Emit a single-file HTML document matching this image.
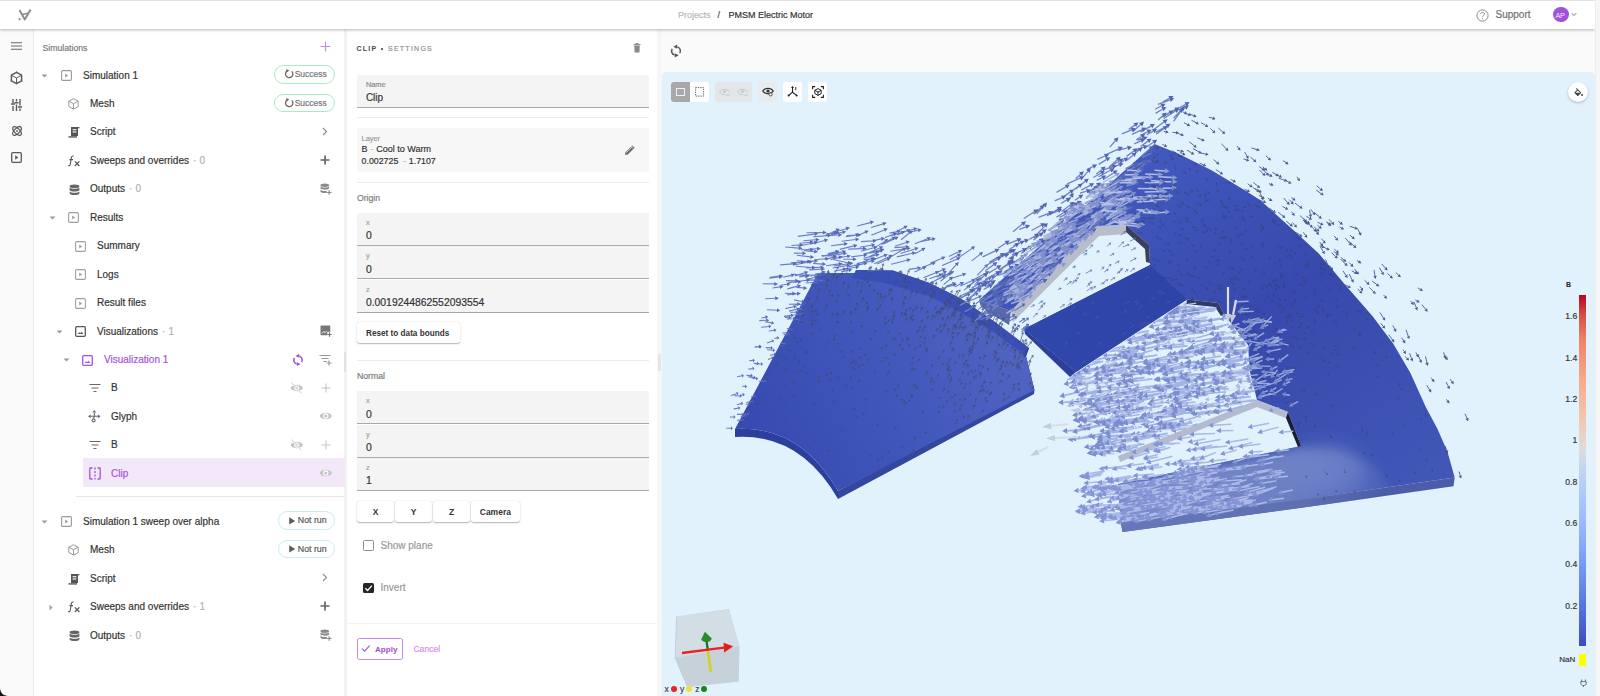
<!DOCTYPE html>
<html><head><meta charset="utf-8"><style>
html,body{margin:0;padding:0;width:1600px;height:696px;overflow:hidden;background:#fff}
body{position:relative;font-family:"Liberation Sans", sans-serif}
.t{position:absolute;white-space:nowrap;line-height:1;font-family:"Liberation Sans", sans-serif}
.n{-webkit-text-stroke:0.18px currentColor}
.b{position:absolute}
.i{position:absolute;overflow:visible}
#viz{position:absolute;left:0;top:0;width:1600px;height:696px}
</style></head><body>
<div class="b" style="left:0px;top:0px;width:1600px;height:696px;background:#fff"></div>
<div class="b" style="left:0px;top:29px;width:32.5px;height:667px;background:#fafafa;border-right:1px solid #e9e9e9"></div>
<div class="b" style="left:344px;top:29px;width:2.5px;height:667px;background:#f3f3f3"></div>
<div class="b" style="left:657px;top:29px;width:4.5px;height:667px;background:#f6f6f6"></div>
<div class="b" style="left:658.3px;top:354px;width:3.2px;height:17px;background:#e6e6e6"></div>
<div class="b" style="left:344.2px;top:352px;width:2.2px;height:20px;background:#e2e2e2"></div>
<div class="b" style="left:661px;top:29px;width:939px;height:43px;background:#fafafa"></div>
<div class="b" style="left:661.5px;top:72px;width:933.5px;height:624px;background:#e1f2fc;border-top-left-radius:4px;border-top-right-radius:4px"></div>
<svg id="viz" width="1600" height="696" viewBox="0 0 1600 696" style="position:absolute;left:0;top:0">
<defs>
<clipPath id="cv"><rect x="661.5" y="72" width="933.5" height="624"/></clipPath>
<linearGradient id="gL" x1="735" y1="430" x2="1030" y2="290" gradientUnits="userSpaceOnUse"><stop offset="0" stop-color="#3549b0"/><stop offset="0.55" stop-color="#4459bc"/><stop offset="1" stop-color="#5367c4"/></linearGradient>
<linearGradient id="gR" x1="1150" y1="150" x2="1380" y2="520" gradientUnits="userSpaceOnUse"><stop offset="0" stop-color="#4259be"/><stop offset="0.45" stop-color="#3749ac"/><stop offset="1" stop-color="#4158b8"/></linearGradient>
<linearGradient id="gT" x1="1030" y1="370" x2="1200" y2="280" gradientUnits="userSpaceOnUse"><stop offset="0" stop-color="#3047ab"/><stop offset="1" stop-color="#2e43a6"/></linearGradient>
<linearGradient id="gB" x1="1121" y1="0" x2="1390" y2="0" gradientUnits="userSpaceOnUse"><stop offset="0" stop-color="#7a8dca"/><stop offset="0.6" stop-color="#6c81c4"/><stop offset="1" stop-color="#6c81c4" stop-opacity="0.2"/></linearGradient><linearGradient id="gBs" x1="1121" y1="0" x2="1390" y2="0" gradientUnits="userSpaceOnUse"><stop offset="0" stop-color="#6678b8"/><stop offset="0.65" stop-color="#5e70b2"/><stop offset="1" stop-color="#5e70b2" stop-opacity="0"/></linearGradient>
<filter id="bl" x="-50%" y="-50%" width="200%" height="200%"><feGaussianBlur stdDeviation="10"/></filter>
<filter id="bl2" x="-20%" y="-50%" width="140%" height="200%"><feGaussianBlur stdDeviation="4"/></filter>
</defs>
<g clip-path="url(#cv)">
<path d="M735,429 Q800,425 838,491 L838,499 Q800,433 735,437Z" fill="#2c3f9c"/>
<path d="M838,491 L1034,386 L1034,394 L838,499Z" fill="#33479f"/>
<path d="M1026,356 L1034.5,390 L1034,394 L1026,362Z" fill="#2f43a0"/>
<path d="M818,273 L855,273 L856,270 L893,270.5 L929,282.7 L960,298 L995,322 L1029,348 L1026,356 L1034.5,390 L838,491 Q800,425 735,429Z" fill="url(#gL)"/>
<path d="M856,270 L893,270.5 L929,282.7 L960,298 L995,322 L1029,348 L1026,356 L995,333 L960,312 L929,296 L885,283 L852,278Z" fill="#3a4fb6"/>
<path d="M1029,348 L1026,356 L1023,358 L1026,350Z" fill="#2f43a0"/>
<path d="M1454.7,477.6 L1453.5,486.2 L1300,508 L1122.5,532 L1121,523.7 L1300,500Z" fill="#4b5ca8"/>
<path d="M979,300 L1011,311 L1009,325 L981,307Z" fill="#5a6aa8"/>
<path d="M1024,329 L1076,372 L1070,377 L1025,334Z" fill="#2d3f9a"/>
<polygon points="1154.5,144.0 1177.5,153.3 1212.0,170.6 1246.4,191.3 1260.0,200.0 1293.0,229.7 1319.0,253.8 1346.6,286.6 1372.4,315.9 1393.1,343.4 1410.3,372.8 1425.9,407.2 1437.4,428.7 1447.5,451.7 1454.7,477.6 1300.0,500.0 1121.0,523.7 1121.0,523.7 1118.0,484.0 1301.0,446.0 1288.0,412.0 1257.0,400.0 1250.0,372.0 1248.0,345.0 1224.0,314.0 1218.0,303.0 1187.0,299.5 1076.0,372.0 1024.0,329.0 1150.0,265.0 1149.0,245.0 1126.0,225.0 1096.0,226.0 1011.0,311.0 979.0,300.0" fill="url(#gR)"/>
<polygon points="1024,329 1150,265 1187,299.5 1076,372" fill="url(#gT)"/>
<clipPath id="face"><polygon points="1154.5,144.0 1177.5,153.3 1212.0,170.6 1246.4,191.3 1260.0,200.0 1293.0,229.7 1319.0,253.8 1346.6,286.6 1372.4,315.9 1393.1,343.4 1410.3,372.8 1425.9,407.2 1437.4,428.7 1447.5,451.7 1454.7,477.6 1300.0,500.0 1121.0,523.7 1121.0,523.7 1118.0,484.0 1301.0,446.0 1288.0,412.0 1257.0,400.0 1250.0,372.0 1248.0,345.0 1224.0,314.0 1218.0,303.0 1187.0,299.5 1076.0,372.0 1024.0,329.0 1150.0,265.0 1149.0,245.0 1126.0,225.0 1096.0,226.0 1011.0,311.0 979.0,300.0"/></clipPath>
<g clip-path="url(#face)"><polygon points="1110,486 1301,448 1340,450 1380,470 1390,500 1121,526" fill="url(#gB)" filter="url(#bl2)"/><ellipse cx="1325" cy="470" rx="40" ry="24" fill="#7a8dcd" opacity="0.5" filter="url(#bl)"/></g>
<path d="M1121,523.7 L1380,489 L1380,497 L1122.5,532Z" fill="url(#gBs)"/>
<path d="M1011,311 L1096,226 L1126,225 L1126,234 L1099,236 L1013,322Z" fill="#b8bccb"/>
<path d="M1126,225 L1149,245 L1150,263 L1146,262 L1145,249 L1126,232Z" fill="#3a3f5c"/>
<path d="M1187,299.5 L1218,303 L1224,314 L1221,316 L1215,307 L1186,304Z" fill="#2f3a66"/>
<path d="M1118,456 L1257,400 L1288,412 L1288,419 L1257,407 L1120,462Z" fill="#b4bbd0"/>
<path d="M1288,412 L1301,446 L1298,447 L1286,418Z" fill="#1a1f33"/>
<g opacity="0.95"><path d="M821.4 255.6L832.6 255.9M985.5 286.6L991.5 283.0M890.2 236.0L901.4 232.6M945.9 286.2L952.6 284.0M768.7 331.0L774.1 330.3M1012.0 327.7L1014.5 325.1M863.7 259.5L872.8 258.9M798.0 309.2L802.9 309.3M987.2 284.1L997.2 274.5M793.2 274.0L805.4 275.9M753.8 363.4L757.0 363.6M826.4 233.7L835.6 232.8M729.8 417.0L733.6 417.0M870.5 241.2L881.3 238.9M767.0 343.1L772.3 341.1M935.7 280.2L942.7 276.1M961.2 295.5L971.3 291.1M949.1 272.6L956.2 264.7M807.8 279.8L822.1 280.6M833.9 271.2L843.1 269.4M868.8 261.8L884.3 255.6M890.4 251.2L907.0 248.6M1008.6 318.7L1012.9 315.8M811.9 275.6L821.2 274.2M754.6 346.9L758.9 346.6M1002.1 320.8L1007.8 318.2M759.3 320.6L766.4 320.3M1014.4 310.8L1022.7 305.2M826.1 265.7L838.9 263.9M857.2 226.0L870.3 222.6M734.2 395.7L739.9 396.0M973.4 279.7L986.1 273.0M742.5 414.4L748.3 413.7M804.2 250.8L814.3 251.6M955.2 286.7L960.6 283.8M891.2 264.2L907.1 260.3M978.2 309.7L983.0 305.5M828.7 234.1L836.4 230.4M949.5 279.0L962.7 274.7M796.4 287.4L803.5 287.9M783.7 334.6L788.2 334.4M815.4 273.9L827.3 273.4M934.9 273.3L942.5 270.1M742.3 386.3L745.1 386.4M1021.6 332.2L1025.8 327.6M1019.2 322.2L1023.0 319.6M900.5 253.6L915.1 248.9M871.2 227.5L883.1 223.9M765.2 298.7L775.2 298.3M998.8 286.6L1006.0 281.2M806.5 232.8L822.9 232.6M798.5 281.3L806.6 280.2M761.1 327.3L768.8 326.5M843.1 259.3L852.9 259.3M825.8 235.8L838.3 235.0M788.3 282.4L797.9 281.9M798.3 246.3L814.4 242.7M841.1 271.9L848.6 270.3M874.2 263.8L889.1 256.7M766.9 309.7L777.0 310.2M1008.0 295.4L1012.9 293.1M997.9 297.6L1006.6 290.1M797.9 236.4L814.6 234.1M803.3 240.8L815.7 239.7M793.9 315.0L802.5 313.8M783.2 277.2L791.2 275.4M788.8 304.2L797.2 304.1M922.1 267.4L932.3 263.6M930.2 263.3L942.1 258.3M918.2 242.3L932.1 239.2M833.7 266.0L849.6 263.5M863.5 258.2L876.0 255.1M749.3 360.7L752.9 360.4M1021.5 329.7L1027.3 325.4M790.2 312.2L795.6 312.2M839.8 249.4L853.8 245.9M733.7 408.9L738.4 408.1M862.7 262.0L871.1 259.1M761.4 318.0L765.5 317.3M786.0 280.6L795.2 280.7M736.8 404.8L741.3 403.6M767.9 359.4L772.0 358.1M831.0 245.7L844.1 244.1M796.8 255.3L810.4 256.9M739.9 395.7L742.9 394.7M971.7 260.9L980.1 254.4M736.9 420.3L742.4 420.1M791.4 245.5L799.6 245.0M940.5 281.3L948.9 274.5M801.9 274.7L817.3 275.2M992.2 295.3L1001.1 290.7M827.9 253.6L835.9 251.7M785.2 247.0L798.8 248.1M810.2 244.3L824.5 240.5M784.9 293.2L792.3 293.6M809.1 269.9L821.3 269.2M755.7 363.9L761.1 364.0M822.3 256.6L835.6 252.6M949.8 259.8L957.8 255.5M795.0 264.7L809.1 261.9M769.9 277.2L779.6 276.1M855.5 265.8L864.1 263.6M785.4 308.6L793.7 306.8M864.2 253.6L875.7 252.1M914.9 243.8L927.5 238.8M888.8 257.9L903.1 249.6M881.4 244.5L892.4 238.5M831.1 234.6L842.4 232.4M842.3 269.3L855.7 267.3M943.6 284.7L950.1 279.1M923.4 277.8L935.8 272.7M793.9 253.1L802.3 253.3M865.4 254.2L879.8 247.9M786.7 319.0L793.3 318.8M965.1 295.8L973.0 290.4M889.4 233.1L897.3 231.6M1023.1 328.0L1026.8 326.0M942.8 276.0L950.9 272.7M871.3 235.3L884.3 229.9M969.9 285.2L976.6 280.4M1002.5 299.3L1006.7 294.7M748.9 401.9L752.3 401.5M780.1 264.9L793.1 263.9M769.9 355.2L774.3 354.5M800.9 249.7L810.1 249.7M942.2 265.5L957.1 258.9M764.9 321.7L771.6 322.9M914.9 253.8L922.2 249.7M824.7 259.4L833.4 257.4M786.8 328.5L791.1 329.3M945.0 287.5L953.2 285.1M806.1 267.9L820.4 267.4M970.9 296.8L975.5 294.4M989.7 281.4L999.7 272.6M834.7 258.5L847.1 256.3M759.1 381.4L764.7 381.1M740.8 416.6L745.2 415.8M790.7 262.7L800.8 262.3M751.6 377.9L756.2 378.4M807.8 249.2L817.0 248.8M767.2 349.7L773.1 350.2M960.5 297.5L967.4 295.0M885.0 237.4L893.6 234.3M930.3 283.0L942.6 276.9M810.5 276.3L822.2 272.7M959.0 257.4L972.1 248.4M857.1 235.8L865.2 232.2M948.8 256.5L958.8 251.7M858.3 263.1L871.4 261.2M784.7 317.1L788.7 317.4M883.3 244.1L895.1 238.4M851.2 256.9L863.7 255.3M877.0 263.9L887.2 259.5M963.8 290.4L968.3 286.9M782.4 333.0L787.5 332.7M848.2 249.1L863.0 248.6M774.4 338.5L777.2 337.9M830.6 259.8L839.1 257.3M972.5 289.7L984.1 284.3M796.6 308.9L802.3 308.5M796.7 260.7L807.2 261.6M894.4 247.6L905.8 246.9M845.8 236.6L855.8 235.1M780.7 285.2L787.1 284.3M861.0 251.2L873.8 247.7M908.7 269.4L917.5 268.1M841.7 241.2L855.5 239.5M755.5 347.3L759.8 346.8M813.2 236.7L827.5 235.6M762.6 283.7L774.3 283.9M936.7 277.4L943.8 272.8M960.4 285.9L972.0 280.8M908.5 232.6L918.0 230.3M748.4 376.9L753.6 377.4M976.4 284.7L988.5 278.7M848.4 266.9L857.2 264.7M795.0 275.9L804.7 272.9M765.6 347.6L771.0 347.9M832.7 268.0L846.7 265.6M859.5 247.2L871.5 245.2M833.4 259.5L847.8 262.7M895.0 246.3L906.2 242.4M780.3 343.1L785.0 343.6M799.2 276.9L806.4 276.0M813.0 263.4L822.4 264.1M977.2 275.4L985.5 266.7M1012.1 332.2L1016.6 329.3M746.6 375.4L750.8 375.6M772.5 288.0L779.8 286.9M1014.5 329.2L1018.0 326.4M748.2 369.3L752.6 368.6M799.8 243.2L810.0 242.2M787.4 288.9L797.5 286.1M929.3 278.8L939.2 275.2M778.9 345.6L782.0 345.3M827.1 255.7L842.5 251.9M868.1 257.3L880.1 251.3M902.9 231.7L913.8 229.2M805.7 283.0L816.3 282.2M846.6 235.5L857.5 235.0M794.1 299.9L801.8 301.5M814.8 259.7L825.4 258.8M901.1 239.8L909.7 232.8M806.7 279.4L814.6 277.5M789.0 311.1L796.8 309.3M746.3 402.5L750.1 401.8M787.2 294.9L797.1 293.7M825.7 234.8L833.8 232.9M726.2 428.3L730.9 428.3M1022.1 323.1L1026.9 319.4M834.2 255.3L843.5 253.6M730.9 395.5L736.7 393.7M914.5 272.0L923.2 268.0M896.8 256.9L912.2 253.3M974.6 285.0L979.6 279.5M993.3 302.4L1001.8 296.5M793.1 318.0L798.3 319.8M871.6 252.3L880.9 250.0M875.7 247.1L885.1 241.1M805.8 261.5L814.3 261.1M795.9 266.2L812.0 267.5M737.2 376.8L741.9 375.8M868.3 271.3L880.4 269.6M769.2 278.1L779.0 277.0M861.0 241.6L873.0 240.9M795.0 304.7L802.0 304.4M897.2 234.9L907.2 230.8M783.9 316.4L791.1 315.4M836.1 231.8L846.2 228.7M970.9 300.6L978.8 297.0M995.3 320.1L1000.0 314.7M745.7 404.3L748.6 404.1M806.3 280.5L817.5 279.7M985.0 279.3L991.7 276.8M892.7 233.4L904.4 227.5M966.4 287.0L976.5 280.4M1009.0 321.2L1015.0 317.8M737.0 414.4L741.7 414.4M751.2 396.9L754.7 396.2M978.7 287.5L987.8 282.5" stroke="#6578c0" stroke-width="1.1" fill="none"/><path d="M836.4 255.9L832.6 257.9L832.7 253.9ZM994.8 281.1L992.5 284.7L990.5 281.3ZM905.1 231.5L902.0 234.5L900.9 230.7ZM956.1 282.7L953.2 285.8L951.9 282.1ZM776.4 329.9L774.4 332.2L773.8 328.3ZM1016.1 323.4L1015.9 326.5L1013.0 323.7ZM876.6 258.6L872.9 260.9L872.7 256.9ZM806.1 309.5L802.8 311.3L802.9 307.3ZM999.9 271.9L998.6 276.0L995.8 273.1ZM809.2 276.5L805.1 277.9L805.8 273.9ZM758.9 363.6L756.9 365.6L757.0 361.6ZM839.4 232.4L835.8 234.8L835.4 230.8ZM735.5 417.1L733.6 419.0L733.7 415.0ZM885.0 238.1L881.7 240.9L880.9 236.9ZM774.0 340.4L773.0 343.0L771.5 339.2ZM945.9 274.2L943.7 277.9L941.6 274.4ZM974.8 289.6L972.1 292.9L970.5 289.2ZM958.8 261.9L957.7 266.1L954.8 263.4ZM825.9 280.9L822.0 282.6L822.3 278.6ZM846.8 268.6L843.5 271.3L842.7 267.4ZM887.8 254.2L885.0 257.5L883.6 253.7ZM910.7 248.0L907.3 250.6L906.7 246.6ZM1015.2 314.3L1014.0 317.5L1011.7 314.2ZM824.9 273.6L821.5 276.2L820.9 272.2ZM760.8 346.5L759.1 348.6L758.8 344.6ZM1010.2 317.1L1008.6 320.0L1006.9 316.4ZM769.1 320.2L766.5 322.3L766.3 318.3ZM1025.3 303.5L1023.8 306.9L1021.6 303.6ZM842.7 263.4L839.2 265.9L838.7 261.9ZM874.0 221.6L870.9 224.5L869.8 220.6ZM741.8 396.1L739.8 398.0L740.0 394.0ZM989.4 271.3L987.0 274.8L985.1 271.3ZM750.1 413.5L748.5 415.7L748.0 411.7ZM818.1 251.8L814.1 253.6L814.4 249.6ZM964.0 282.1L961.6 285.6L959.7 282.0ZM910.8 259.3L907.6 262.2L906.6 258.3ZM985.4 303.4L984.3 307.0L981.7 304.0ZM839.8 228.7L837.3 232.2L835.5 228.6ZM966.4 273.5L963.4 276.6L962.1 272.8ZM807.3 288.2L803.3 289.9L803.7 285.9ZM790.3 334.3L788.3 336.4L788.1 332.4ZM831.1 273.3L827.4 275.4L827.2 271.4ZM946.0 268.6L943.3 271.9L941.7 268.2ZM747.0 386.5L745.0 388.4L745.2 384.4ZM1027.3 326.0L1027.3 329.0L1024.3 326.3ZM1025.2 318.0L1024.2 321.2L1021.9 317.9ZM918.7 247.7L915.7 250.8L914.5 247.0ZM886.7 222.8L883.7 225.8L882.5 222.0ZM778.9 298.2L775.3 300.3L775.1 296.3ZM1009.1 279.0L1007.2 282.8L1004.8 279.6ZM826.7 232.5L822.9 234.6L822.9 230.6ZM810.4 279.8L806.8 282.2L806.3 278.3ZM771.2 326.3L769.0 328.5L768.6 324.6ZM856.7 259.3L852.9 261.3L852.9 257.3ZM842.1 234.7L838.4 237.0L838.1 233.0ZM801.7 281.7L798.0 283.9L797.8 279.9ZM818.1 241.9L814.8 244.7L813.9 240.8ZM852.3 269.5L849.0 272.2L848.2 268.3ZM892.6 255.0L890.0 258.5L888.3 254.8ZM780.2 310.4L776.9 312.2L777.1 308.2ZM1016.2 291.4L1013.7 294.8L1012.0 291.3ZM1009.4 287.7L1007.9 291.6L1005.3 288.6ZM818.3 233.5L814.9 236.1L814.3 232.1ZM819.5 239.4L815.9 241.7L815.5 237.7ZM805.4 313.4L802.7 315.8L802.2 311.8ZM794.9 274.6L791.7 277.3L790.8 273.4ZM800.7 304.1L797.3 306.1L797.2 302.1ZM935.8 262.4L933.0 265.5L931.6 261.8ZM945.6 256.8L942.9 260.1L941.3 256.4ZM935.8 238.4L932.5 241.2L931.7 237.3ZM853.4 262.9L849.9 265.5L849.3 261.5ZM879.7 254.2L876.5 257.1L875.6 253.2ZM754.8 360.2L753.1 362.4L752.7 358.4ZM1029.1 324.0L1028.5 327.0L1026.1 323.8ZM798.7 312.2L795.6 314.2L795.6 310.2ZM857.5 245.0L854.3 247.9L853.3 244.0ZM740.3 407.8L738.8 410.1L738.1 406.2ZM874.6 257.8L871.7 260.9L870.4 257.2ZM768.2 316.8L765.8 319.3L765.1 315.3ZM799.0 280.8L795.2 282.7L795.2 278.7ZM743.2 403.1L741.8 405.6L740.8 401.7ZM773.9 357.5L772.6 360.0L771.4 356.2ZM847.9 243.6L844.4 246.1L843.9 242.1ZM814.2 257.3L810.2 258.9L810.6 254.9ZM744.7 394.2L743.5 396.6L742.3 392.8ZM983.1 252.1L981.3 256.0L978.9 252.8ZM744.3 420.0L742.5 422.1L742.4 418.1ZM803.4 244.8L799.7 247.0L799.5 243.0ZM951.8 272.1L950.1 276.1L947.6 273.0ZM821.1 275.3L817.2 277.2L817.3 273.2ZM1004.5 288.9L1002.0 292.4L1000.2 288.9ZM839.6 250.9L836.4 253.7L835.5 249.8ZM802.6 248.5L798.6 250.1L798.9 246.2ZM828.2 239.6L825.0 242.5L824.0 238.6ZM796.1 293.7L792.2 295.5L792.4 291.6ZM825.1 268.9L821.4 271.2L821.1 267.2ZM763.0 364.0L761.1 366.0L761.1 362.0ZM839.2 251.4L836.2 254.5L835.0 250.6ZM961.1 253.8L958.7 257.3L956.8 253.8ZM812.8 261.2L809.5 263.9L808.7 260.0ZM783.3 275.7L779.8 278.1L779.3 274.2ZM867.8 262.7L864.6 265.6L863.7 261.7ZM796.9 306.1L794.1 308.8L793.3 304.9ZM879.5 251.6L876.0 254.1L875.4 250.1ZM931.1 237.4L928.3 240.7L926.8 236.9ZM906.4 247.7L904.1 251.4L902.1 247.9ZM895.8 236.7L893.4 240.3L891.5 236.8ZM846.2 231.6L842.8 234.3L842.1 230.4ZM859.4 266.7L856.0 269.2L855.4 265.3ZM953.0 276.6L951.4 280.6L948.8 277.6ZM939.3 271.3L936.5 274.6L935.0 270.9ZM806.1 253.4L802.3 255.3L802.4 251.3ZM883.3 246.4L880.6 249.7L879.0 246.1ZM796.1 318.7L793.4 320.8L793.3 316.8ZM976.1 288.2L974.1 292.0L971.9 288.7ZM901.0 230.9L897.6 233.6L896.9 229.6ZM1028.9 324.8L1027.8 327.8L1025.9 324.2ZM954.4 271.3L951.6 274.6L950.1 270.9ZM887.8 228.4L885.0 231.7L883.5 228.1ZM979.7 278.2L977.7 282.0L975.4 278.7ZM1009.1 292.0L1008.2 296.0L1005.2 293.3ZM754.2 401.3L752.5 403.5L752.1 399.5ZM796.9 263.6L793.2 265.9L792.9 261.9ZM776.2 354.2L774.6 356.5L774.0 352.5ZM813.9 249.7L810.1 251.7L810.1 247.7ZM960.6 257.4L957.9 260.7L956.3 257.1ZM774.2 323.3L771.2 324.8L771.9 320.9ZM925.5 247.8L923.2 251.4L921.2 247.9ZM837.1 256.5L833.9 259.3L832.9 255.4ZM793.5 329.8L790.8 331.3L791.5 327.4ZM956.9 284.0L953.8 287.0L952.7 283.1ZM824.2 267.2L820.5 269.4L820.3 265.4ZM978.8 292.7L976.4 296.1L974.6 292.6ZM1002.6 270.1L1001.0 274.1L998.4 271.1ZM850.9 255.7L847.5 258.3L846.8 254.4ZM766.6 381.0L764.8 383.1L764.6 379.1ZM747.0 415.5L745.5 417.8L744.8 413.9ZM804.6 262.2L800.9 264.3L800.8 260.3ZM758.1 378.7L756.0 380.4L756.4 376.4ZM820.8 248.6L817.1 250.8L816.9 246.8ZM775.0 350.3L772.9 352.2L773.2 348.2ZM970.9 293.7L968.1 296.9L966.7 293.1ZM897.1 233.0L894.3 236.2L892.9 232.4ZM946.0 275.2L943.5 278.7L941.7 275.1ZM825.8 271.6L822.8 274.6L821.6 270.8ZM975.2 246.2L973.2 250.0L970.9 246.7ZM868.7 230.7L866.0 234.1L864.4 230.4ZM962.3 250.1L959.7 253.5L958.0 249.9ZM875.1 260.7L871.7 263.2L871.1 259.2ZM791.5 317.7L788.5 319.4L788.9 315.4ZM898.5 236.8L896.0 240.2L894.2 236.6ZM867.4 254.8L863.9 257.3L863.4 253.3ZM890.7 258.0L888.0 261.3L886.4 257.7ZM971.2 284.5L969.5 288.4L967.0 285.3ZM789.7 332.6L787.6 334.7L787.4 330.7ZM866.8 248.5L863.1 250.6L862.9 246.6ZM779.1 337.5L777.6 339.9L776.8 336.0ZM842.7 256.2L839.6 259.2L838.5 255.4ZM987.5 282.7L984.9 286.1L983.2 282.5ZM805.5 308.3L802.4 310.5L802.1 306.5ZM811.0 261.9L807.1 263.6L807.4 259.6ZM909.6 246.7L905.9 248.9L905.7 244.9ZM859.6 234.6L856.1 237.1L855.5 233.1ZM790.8 283.8L787.4 286.3L786.8 282.4ZM877.4 246.7L874.3 249.7L873.2 245.8ZM921.3 267.6L917.8 270.1L917.2 266.2ZM859.3 239.0L855.8 241.5L855.3 237.5ZM761.7 346.5L760.0 348.8L759.5 344.8ZM831.3 235.3L827.7 237.6L827.4 233.6ZM778.1 284.0L774.2 285.9L774.3 281.9ZM946.9 270.7L944.9 274.4L942.7 271.1ZM975.5 279.3L972.8 282.7L971.3 279.0ZM921.7 229.4L918.5 232.2L917.5 228.3ZM755.5 377.6L753.4 379.4L753.8 375.4ZM991.9 277.0L989.4 280.5L987.6 276.9ZM860.9 263.7L857.7 266.6L856.7 262.7ZM808.3 271.7L805.3 274.8L804.1 271.0ZM772.9 348.0L770.9 349.9L771.1 345.9ZM850.5 265.0L847.1 267.6L846.4 263.7ZM875.3 244.6L871.9 247.2L871.2 243.2ZM851.5 263.5L847.4 264.6L848.2 260.7ZM909.8 241.2L906.9 244.3L905.6 240.5ZM786.9 343.8L784.8 345.6L785.3 341.6ZM810.1 275.5L806.6 277.9L806.1 274.0ZM826.2 264.3L822.2 266.1L822.5 262.1ZM988.1 263.9L987.0 268.1L984.1 265.3ZM1018.5 328.0L1017.7 330.9L1015.5 327.6ZM752.7 375.7L750.7 377.6L750.9 373.6ZM783.6 286.4L780.1 288.9L779.5 284.9ZM1019.9 324.9L1019.3 327.9L1016.8 324.8ZM754.4 368.3L752.9 370.6L752.3 366.6ZM813.7 241.8L810.2 244.1L809.8 240.2ZM801.2 285.2L798.0 288.1L797.0 284.2ZM942.8 273.9L939.9 277.1L938.5 273.3ZM783.9 345.2L782.1 347.3L781.8 343.3ZM846.2 250.9L843.0 253.8L842.0 249.9ZM883.5 249.6L881.0 253.1L879.2 249.5ZM917.5 228.3L914.2 231.1L913.3 227.2ZM820.1 281.9L816.4 284.2L816.1 280.2ZM861.3 234.8L857.6 237.0L857.4 233.0ZM805.4 302.2L801.4 303.4L802.2 299.5ZM829.2 258.5L825.6 260.8L825.3 256.8ZM912.7 230.4L911.0 234.3L908.4 231.2ZM818.3 276.7L815.0 279.5L814.1 275.6ZM799.8 308.6L797.3 311.2L796.3 307.3ZM751.9 401.5L750.4 403.8L749.7 399.9ZM800.8 293.3L797.3 295.7L796.8 291.8ZM837.5 232.1L834.2 234.9L833.3 231.0ZM732.8 428.3L730.9 430.3L730.9 426.3ZM1029.0 317.8L1028.1 321.0L1025.8 317.8ZM847.2 252.9L843.8 255.6L843.1 251.7ZM738.5 393.1L737.3 395.6L736.1 391.8ZM926.7 266.5L924.0 269.9L922.4 266.2ZM915.9 252.4L912.7 255.2L911.8 251.3ZM982.2 276.7L981.1 280.9L978.2 278.2ZM1004.7 294.6L1002.9 298.2L1000.7 294.9ZM801.0 320.7L797.7 321.7L799.0 317.9ZM884.6 249.2L881.3 252.0L880.4 248.1ZM888.3 239.1L886.2 242.8L884.0 239.4ZM818.1 260.9L814.4 263.1L814.2 259.1ZM815.8 267.8L811.9 269.5L812.2 265.5ZM743.8 375.4L742.4 377.7L741.5 373.8ZM884.2 269.1L880.7 271.6L880.1 267.6ZM782.8 276.7L779.2 279.0L778.8 275.1ZM876.8 240.6L873.1 242.9L872.8 238.9ZM805.4 304.2L802.1 306.4L801.9 302.4ZM910.7 229.4L908.0 232.7L906.5 229.0ZM794.0 315.0L791.4 317.4L790.8 313.4ZM849.9 227.6L846.8 230.7L845.6 226.8ZM982.1 295.5L979.6 298.8L978.0 295.2ZM1001.9 312.7L1001.6 316.0L998.5 313.4ZM750.5 404.0L748.7 406.1L748.5 402.1ZM821.3 279.5L817.6 281.7L817.3 277.7ZM995.3 275.4L992.4 278.6L991.0 274.9ZM907.7 225.8L905.3 229.3L903.5 225.7ZM979.7 278.3L977.6 282.0L975.4 278.7ZM1017.3 316.5L1016.0 319.6L1014.0 316.1ZM743.6 414.4L741.7 416.4L741.7 412.4ZM756.5 395.9L755.1 398.2L754.3 394.3ZM991.1 280.7L988.8 284.3L986.8 280.8Z" fill="#4f62b0"/></g>
<g opacity="0.75"><path d="M830.5 394.1L832.3 391.3M926.9 319.8L927.6 317.8M938.3 295.7L944.5 288.8M1016.4 386.6L1018.0 384.6M914.0 389.7L915.8 386.7M988.2 320.6L990.2 317.3M913.4 372.2L914.4 369.6M878.8 303.4L881.3 297.9M770.2 373.7L770.7 371.7M794.2 359.5L794.7 358.3M941.3 321.1L942.4 319.2M908.3 322.1L910.5 318.4M858.4 360.3L859.6 357.7M780.3 346.4L781.3 345.3M925.6 314.4L927.0 312.5M949.9 347.5L950.6 343.2M970.9 326.1L973.0 321.5M982.3 360.1L984.3 356.9M985.5 345.4L986.7 343.6M881.5 274.1L882.9 265.5M835.5 317.6L836.8 315.5M783.6 386.7L783.9 385.3M1018.0 370.7L1019.1 368.5M1021.9 350.3L1025.9 344.4M1006.7 380.3L1008.7 376.6M911.0 397.7L911.8 395.8M958.8 411.9L959.9 409.7M972.7 347.1L973.7 343.6M956.1 308.1L959.0 303.7M968.2 339.9L970.6 335.5M960.4 331.2L962.3 328.6M814.5 324.2L815.5 321.2M836.4 285.0L837.0 278.1M918.4 331.2L919.8 328.2M981.9 330.7L984.7 324.9M986.2 342.2L988.8 337.5M901.2 448.5L901.9 447.1M923.5 345.5L924.4 343.1M895.9 277.2L899.5 272.4M878.1 300.0L880.6 295.1M947.2 370.8L948.0 369.2M923.7 328.7L924.8 327.1M826.6 280.3L828.2 272.2M871.3 293.0L873.6 290.5M797.7 326.1L800.4 322.6M1028.7 366.8L1030.0 362.2M970.4 372.7L971.1 371.8M946.7 367.4L947.6 364.6M914.4 284.3L917.5 279.4M924.9 434.0L925.4 432.9M813.8 304.3L816.5 298.4M947.6 311.7L948.9 308.4M898.4 334.7L899.1 333.9M797.0 365.1L798.7 361.8M898.6 348.2L899.8 345.1M1017.4 367.9L1017.7 364.5M825.0 347.3L827.1 344.3M809.4 327.2L811.2 324.2M1014.2 346.0L1017.4 342.7M935.9 331.7L936.9 329.9M971.0 326.0L972.4 322.3M973.4 333.4L975.9 327.9M802.1 313.3L803.3 309.3M876.3 462.3L877.8 459.8M985.5 322.3L987.7 316.5M804.1 367.6L804.6 366.5M901.2 286.3L904.5 279.0M892.2 323.4L893.0 319.3M870.7 340.6L871.1 339.3M1029.8 376.7L1030.4 374.5M930.6 384.0L930.9 381.5M855.4 420.2L857.1 417.0M948.2 300.9L951.1 297.9M1017.1 360.4L1022.1 355.1M995.7 363.1L998.2 359.7M888.6 296.2L889.5 290.7M811.6 322.7L811.8 321.2M970.3 321.9L973.4 314.4M801.7 317.9L803.1 315.4M861.0 287.7L864.6 280.3M865.9 309.2L867.5 307.4M911.3 314.2L913.1 310.7M952.3 330.6L954.8 326.5M891.4 341.1L892.4 339.0M837.3 378.9L838.0 378.0M949.7 321.1L951.7 315.4M972.0 321.5L973.1 318.0M792.7 398.9L793.4 396.3M894.7 430.2L895.4 428.6M972.9 338.8L974.5 333.7M997.7 372.3L999.5 369.7M965.8 366.9L967.0 365.2M964.1 364.4L966.0 361.2M915.9 334.2L917.7 331.2M954.8 299.1L959.1 291.6M836.5 325.2L837.6 322.6M990.9 341.3L992.4 338.1M1020.1 342.6L1022.5 334.0M840.7 353.9L841.7 352.0M978.5 326.3L982.2 322.9M937.7 414.4L939.0 412.5M837.0 325.5L837.6 323.2M971.3 349.1L972.2 347.1M973.2 310.9L974.0 304.0M902.7 302.2L905.1 297.7M888.7 373.8L889.0 372.8M867.6 289.5L869.3 286.4M829.6 381.8L830.0 379.5M855.3 365.9L855.9 362.9M1018.0 391.6L1018.6 389.9M926.4 375.7L927.2 372.6M783.0 422.6L783.8 421.4M992.2 355.6L994.8 352.0M865.1 356.7L865.5 355.1M946.4 309.1L949.8 303.3M903.0 301.9L905.2 298.5M919.3 340.3L920.5 337.1M961.7 303.4L966.9 298.6M1006.7 399.8L1008.2 397.1M953.7 413.5L954.7 411.4M951.2 317.8L954.0 311.3M1031.0 389.8L1032.2 388.1M925.7 353.5L926.8 351.4M958.0 321.7L960.5 315.6M856.3 307.5L857.0 304.5M900.7 315.9L901.5 314.2M998.7 384.2L1000.5 381.6M958.5 330.1L959.9 326.8M921.7 414.6L922.5 412.8M915.9 310.4L916.4 308.1M863.4 307.1L866.4 303.5M781.9 408.4L783.4 406.5M949.7 383.1L950.6 380.4M854.3 314.2L855.4 310.1M885.4 378.2L886.5 375.1M979.0 374.9L979.5 372.6M949.7 295.9L951.3 292.4M904.5 313.8L905.9 310.6M911.1 319.6L911.8 316.6M933.9 311.4L935.5 308.1M968.9 384.6L970.1 382.9M954.6 316.2L956.9 309.9M942.7 330.7L944.8 325.7M975.9 321.1L977.6 317.7M881.1 351.9L881.6 348.5M866.6 363.4L868.2 360.1M1001.8 364.7L1002.7 362.7M1005.4 367.4L1006.5 363.3M851.8 354.1L852.2 352.3M938.5 408.2L939.2 407.4M991.5 324.2L994.8 316.4M977.7 329.9L980.1 325.2M997.8 349.4L998.8 345.7M894.3 342.7L895.3 339.5M843.1 359.1L843.7 357.0M876.5 314.1L877.3 310.2M942.8 327.5L944.1 325.6M968.6 396.5L969.9 394.7M981.2 414.4L982.6 411.1M982.9 385.3L984.3 382.1M1004.1 345.2L1005.4 342.2M921.9 297.1L924.0 293.2M1012.1 392.3L1013.7 389.3M841.9 316.7L843.4 312.8M974.2 326.5L975.4 320.5M858.4 382.9L858.9 381.4M994.5 356.1L995.9 353.7M885.9 455.0L888.0 452.2M952.7 320.8L954.2 316.4M810.7 289.5L811.9 285.5M877.6 309.8L880.0 306.1M875.8 299.4L877.5 294.0M953.1 315.6L953.9 313.0M951.9 351.8L952.4 349.5M885.1 362.0L886.2 358.5M849.7 366.5L851.2 363.1M1009.2 337.3L1013.0 328.8M847.5 298.4L848.3 296.2M793.2 384.6L794.1 383.2M1017.9 360.5L1019.8 353.7M818.2 380.1L819.0 377.6M883.5 321.0L884.9 318.3M919.6 313.3L921.5 308.8M986.3 323.6L989.0 316.4M998.4 329.5L1000.0 324.0M905.1 317.2L905.9 315.6M886.0 324.8L888.5 321.1M978.3 395.5L979.7 392.2M846.1 293.0L848.1 287.3M968.0 368.7L968.1 365.6M977.3 325.2L979.1 322.0M972.5 409.8L973.9 406.4M870.5 274.4L870.9 268.2M910.6 322.9L912.6 320.5M795.7 344.5L796.7 342.6M910.5 398.5L911.4 396.6M813.4 407.4L814.0 405.1M974.7 402.4L975.7 399.9M806.3 354.6L807.3 352.1M980.8 318.3L982.7 310.1M989.2 395.5L989.8 394.3M964.5 338.0L966.3 335.7M857.6 369.6L858.7 366.7M850.3 335.1L852.0 332.4M799.1 342.2L800.5 340.3M811.8 327.5L812.5 324.8M965.2 305.0L968.7 300.2M932.7 338.3L933.6 336.4M924.6 351.1L926.2 349.0M903.6 316.1L904.7 314.4M896.0 388.0L897.8 385.7M931.0 320.0L933.0 316.7M922.3 332.1L923.1 330.4M950.3 337.0L952.5 333.5M800.3 374.5L801.6 371.7M935.3 315.9L938.5 312.2M953.3 314.1L955.0 309.9M953.5 397.9L955.0 395.2M833.9 341.3L834.0 340.2M985.3 338.6L989.3 332.8M816.6 317.3L817.3 315.4M944.8 323.0L947.6 318.0M817.1 296.5L819.2 290.3M951.6 340.5L952.8 337.9M1014.6 355.3L1015.1 350.9M898.3 276.1L900.2 272.5M1011.7 367.2L1012.7 365.4M909.6 299.4L911.8 292.5M882.1 302.5L884.9 297.1M860.8 329.2L861.7 326.7M833.4 339.6L834.8 336.3M985.5 323.7L988.8 316.9M973.6 374.1L975.2 371.0M949.2 371.8L950.0 370.9M919.7 292.5L922.3 284.6M953.7 297.3L956.5 292.3M906.6 342.1L908.0 339.4M833.1 404.1L833.8 402.1M902.9 308.2L903.5 304.1M969.3 304.9L970.4 298.4M962.5 359.5L963.2 355.8M1027.9 386.3L1029.7 383.8M892.7 316.1L893.7 312.9M864.7 285.7L867.4 282.4M981.4 391.8L982.2 390.2M930.8 295.5L933.1 292.1M910.4 365.2L911.7 363.8M824.0 292.7L826.7 286.3M939.2 332.7L940.4 331.7M918.4 347.7L919.8 346.0M830.6 300.0L832.1 296.1M942.6 352.4L943.3 351.2M901.3 350.4L902.5 349.0M958.9 358.3L959.3 356.4M905.7 341.5L907.0 338.2M986.0 393.7L986.9 392.0M801.4 319.4L802.8 316.4M873.9 333.6L875.1 331.5M979.4 378.2L980.9 374.7M911.5 452.5L913.2 450.7M997.7 327.1L1003.2 319.4M1012.5 387.9L1013.8 385.3M866.6 311.3L867.0 309.8M914.4 350.9L915.1 348.8M943.0 294.2L942.7 288.7M829.6 375.3L830.8 373.6M962.1 374.7L962.8 372.7M901.8 342.9L902.3 340.3M956.2 325.1L960.0 319.7M813.8 442.5L814.5 440.9M968.4 356.6L969.6 352.2M955.4 424.9L955.9 424.0M923.9 339.5L924.6 338.5M837.0 347.4L838.2 343.9M983.3 384.3L984.2 382.6M959.8 320.4L961.3 316.4M964.8 344.7L966.8 340.3M828.2 297.7L829.2 291.8M954.0 406.3L955.0 403.8M887.5 283.5L888.2 277.4M970.2 351.3L971.4 350.0M932.1 299.4L934.3 294.2M849.5 315.8L850.6 313.3M859.1 349.9L859.7 349.0M885.1 394.3L886.0 391.5M965.4 308.4L968.3 304.7M805.0 354.7L805.6 353.5M807.4 302.9L808.6 299.3M912.2 387.3L913.7 385.2M962.6 318.2L965.4 313.9M947.6 378.4L948.9 374.9M1016.7 369.1L1017.0 366.9M766.5 377.2L767.5 375.5M895.0 398.9L896.8 396.3M1010.0 351.8L1012.1 348.2M1001.5 349.2L1003.3 344.6M1002.0 375.9L1002.7 374.7M872.8 374.1L874.5 371.7M851.4 369.7L851.9 368.5M1001.2 369.9L1001.3 366.7M1026.1 348.7L1030.3 343.2M914.4 296.6L916.0 293.6M903.4 404.7L904.2 401.6M889.9 295.6L891.5 290.2M876.8 427.7L877.5 425.2M884.6 348.9L886.0 345.9M938.9 399.6L939.4 398.6M930.4 380.8L931.6 379.0M985.2 403.2L986.9 401.3M834.4 303.4L835.9 301.7M947.6 372.0L947.9 370.4M966.2 337.9L968.3 334.6M850.0 392.3L851.5 388.8M986.5 326.6L988.9 321.9M884.0 327.5L885.4 323.7M817.8 383.9L818.4 382.0M1004.1 350.7L1007.2 345.8M956.3 305.2L959.9 297.0M1012.7 336.7L1014.6 331.5M808.6 310.8L811.3 307.2M931.7 367.7L932.0 365.7M926.4 290.0L932.2 283.9M810.6 316.8L812.3 312.0M862.2 302.6L863.0 299.3M983.8 316.6L985.0 312.6M908.6 347.0L909.2 345.6M955.2 306.4L957.1 302.7M932.7 385.6L934.3 382.3M881.4 459.7L882.2 458.3M856.6 287.1L857.7 283.0M945.1 308.8L946.9 301.1M963.7 402.8L964.6 399.4M963.0 390.2L964.2 388.0M852.4 363.0L853.5 361.0M989.9 384.6L990.5 383.2M804.8 402.3L806.3 400.3M929.0 290.1L931.3 283.4M783.3 436.3L784.2 435.3M842.1 289.1L843.6 283.7M1003.0 395.1L1003.9 393.9M831.1 319.0L832.4 315.0M951.1 399.3L951.7 397.6M812.7 316.0L815.3 311.9M955.2 329.8L955.9 328.0M921.5 286.5L925.5 279.9M796.6 373.6L797.2 372.0M995.0 327.2L997.8 318.3M938.2 312.8L940.3 309.5M836.8 298.7L838.0 295.9M807.1 375.2L807.3 374.2M967.6 418.9L968.4 416.3M819.5 331.1L820.1 329.8M826.0 285.2L827.8 281.0M928.6 302.7L931.2 297.1M787.6 351.9L788.3 350.6M930.7 391.4L931.6 390.0M778.4 401.0L780.5 398.6M959.4 310.1L960.6 307.0M900.1 288.4L904.4 282.5M835.8 279.8L841.3 274.4M945.6 304.6L948.2 301.0M939.8 314.0L942.4 309.2M968.9 355.9L971.1 353.2M908.9 402.2L909.4 401.1M895.0 286.8L895.8 283.6M837.6 316.6L837.9 314.3M862.8 415.5L863.4 414.2M937.7 359.8L938.7 357.7M946.8 403.7L947.2 401.7M904.0 290.4L908.1 283.2M840.5 433.3L842.2 430.0M869.1 459.2L870.3 456.3M940.9 310.0L944.6 304.2M948.0 369.4L949.0 367.0M828.4 453.2L829.1 451.1M943.2 391.5L943.9 389.4M775.5 366.4L776.0 364.9M880.8 363.4L881.5 361.6M973.0 379.0L973.7 377.5M1013.8 360.0L1014.8 357.2M960.6 385.0L961.2 383.6M975.5 345.0L977.8 339.7M958.4 401.9L959.8 400.2M1008.1 366.3L1010.0 363.3M891.7 320.7L893.9 316.5M986.2 330.0L988.4 325.3M910.8 371.7L912.0 369.2M959.7 407.8L961.3 405.5M982.1 368.9L982.5 367.0M942.3 408.8L943.1 407.2M1027.8 363.2L1032.2 356.9M755.2 406.9L756.9 404.4M973.0 341.5L974.6 337.2M1025.1 351.0L1023.2 341.7M894.2 356.0L894.5 355.1M936.5 378.1L937.8 375.1M975.8 379.5L976.2 376.5M956.6 336.8L957.9 334.1M849.4 380.6L850.6 378.1M907.3 311.2L909.5 309.0M1003.2 402.0L1004.0 399.5M987.9 339.0L988.7 336.4M783.0 360.8L784.9 357.9M985.6 336.9L988.7 331.6M1023.7 346.5L1025.6 340.9M971.5 311.9L974.0 307.4M938.0 319.3L940.3 313.7M853.0 371.3L854.2 369.4M825.3 378.0L826.4 374.9M950.8 379.3L951.1 378.1M996.4 341.4L998.2 334.5M978.3 369.3L979.5 365.8M874.1 273.2L875.9 269.5M780.2 358.9L781.3 356.9M848.7 326.8L850.7 322.9M941.9 366.2L943.0 364.5M1013.7 353.5L1014.8 350.7M954.8 364.9L955.2 362.8M1002.1 342.1L1004.1 335.8M934.6 291.3L936.1 284.1M898.4 280.2L901.1 273.5M784.9 371.1L785.7 368.9M920.1 324.2L921.6 321.4M888.7 365.3L889.2 364.2M987.2 370.8L987.7 369.5M794.0 340.5L794.8 338.8M904.9 280.1L908.4 271.8M901.3 402.0L901.9 400.2M943.1 310.4L945.3 306.5M949.0 362.2L950.1 359.3M969.2 352.2L969.6 349.4M891.0 302.5L891.9 299.3M833.7 275.2L837.3 268.6M963.4 331.8L965.0 327.6M912.6 360.2L913.0 358.1M978.8 359.8L979.6 358.7M863.4 402.8L865.3 399.9M959.6 327.1L961.4 323.3M947.2 333.3L948.2 330.3M959.0 381.8L959.8 380.0M905.8 321.6L906.3 319.7M830.6 283.7L833.6 276.0M824.1 311.7L826.1 306.7M868.0 277.3L869.3 269.3M967.7 376.3L968.2 374.2M852.0 411.4L853.8 409.2M940.3 295.4L943.6 289.7M904.7 406.9L905.7 403.7M963.5 386.7L965.5 384.6M983.8 401.6L985.1 398.7M858.0 295.8L860.4 291.8M976.8 331.2L978.5 324.7M981.4 388.2L981.7 386.7M1018.8 367.1L1021.2 361.9M955.8 421.8L956.6 420.9M887.0 334.6L888.4 332.0M952.1 330.9L953.7 325.9M939.5 328.1L940.3 326.5M928.4 294.8L930.9 289.9M992.3 360.5L994.6 358.1M902.3 293.2L905.9 287.5M913.4 441.4L914.6 438.3M891.8 324.3L892.1 322.6M952.8 351.6L953.3 350.1M935.3 317.8L936.8 312.9M962.7 420.4L963.8 416.9M845.8 389.8L846.3 386.5M917.1 362.5L918.9 360.0M963.0 366.8L964.3 364.2M861.3 366.8L862.2 365.3M995.8 333.3L998.2 330.1M894.8 391.8L894.9 390.1M996.2 363.1L996.8 361.3M947.4 393.8L948.0 392.3M916.2 390.0L916.9 388.8M982.9 391.8L983.6 390.6M846.4 274.6L847.1 269.5M990.1 395.3L991.0 393.0M999.2 333.4L1001.9 325.0M811.5 336.8L812.6 334.0" stroke="#46527f" stroke-width="0.9" fill="none"/><path d="M833.3 389.8L833.5 392.1L831.0 390.5ZM928.5 315.4L929.0 318.3L926.2 317.3ZM946.2 286.9L945.6 289.8L943.4 287.8ZM1019.6 382.8L1019.2 385.6L1016.9 383.6ZM916.7 385.1L917.1 387.5L914.5 386.0ZM991.5 315.1L991.5 318.1L988.9 316.6ZM915.0 367.9L915.8 370.1L912.9 369.1ZM882.4 295.5L882.7 298.5L880.0 297.3ZM771.1 369.9L772.1 372.0L769.2 371.4ZM795.4 356.6L796.1 358.9L793.3 357.7ZM943.7 317.0L943.7 320.0L941.1 318.5ZM911.8 316.4L911.8 319.2L909.2 317.7ZM860.4 356.0L861.0 358.3L858.3 357.0ZM782.5 343.9L782.4 346.3L780.2 344.3ZM928.5 310.3L928.2 313.3L925.7 311.6ZM951.0 341.1L952.1 343.5L949.2 342.9ZM974.2 319.2L974.4 322.2L971.7 320.9ZM985.6 354.8L985.6 357.7L983.0 356.1ZM988.1 341.5L987.9 344.5L985.4 342.8ZM883.3 262.9L884.4 265.8L881.4 265.3ZM838.2 313.4L838.1 316.3L835.6 314.7ZM784.3 383.5L785.4 385.7L782.5 385.0ZM1020.2 366.1L1020.4 369.1L1017.7 367.8ZM1027.4 342.3L1027.2 345.3L1024.7 343.6ZM1009.9 374.5L1010.1 377.3L1007.4 375.9ZM912.6 394.1L913.2 396.4L910.5 395.2ZM960.7 408.1L961.3 410.3L958.6 409.0ZM974.5 341.1L975.2 344.0L972.3 343.2ZM960.5 301.5L960.3 304.5L957.8 302.9ZM971.8 333.2L971.9 336.2L969.2 334.8ZM963.8 326.5L963.5 329.5L961.1 327.7ZM816.3 319.0L817.0 321.7L814.1 320.7ZM837.3 275.5L838.5 278.3L835.5 278.0ZM920.7 326.1L921.1 328.8L918.4 327.5ZM985.8 322.6L986.0 325.6L983.3 324.2ZM990.1 335.2L990.1 338.2L987.5 336.8ZM902.8 445.5L903.3 447.8L900.6 446.4ZM925.1 341.4L925.8 343.6L923.0 342.6ZM901.1 270.3L900.7 273.3L898.3 271.5ZM881.8 292.8L881.9 295.8L879.3 294.5ZM948.9 367.6L949.3 369.9L946.7 368.5ZM926.2 325.1L926.1 328.0L923.6 326.3ZM828.7 269.7L829.7 272.5L826.7 271.9ZM875.3 288.6L874.7 291.5L872.5 289.5ZM801.8 320.9L801.6 323.6L799.3 321.7ZM1030.7 359.7L1031.4 362.6L1028.6 361.8ZM972.1 370.3L972.3 372.6L969.9 370.9ZM948.1 362.8L949.0 365.0L946.2 364.1ZM918.9 277.3L918.8 280.2L916.3 278.6ZM926.1 431.2L926.7 433.5L924.0 432.3ZM817.6 296.1L817.9 299.1L815.2 297.8ZM949.8 306.0L950.3 308.9L947.5 307.9ZM900.3 332.5L900.2 334.9L898.0 332.9ZM799.4 360.1L800.0 362.4L797.3 361.1ZM900.5 343.5L901.2 345.7L898.5 344.6ZM1017.9 362.0L1019.1 364.7L1016.2 364.4ZM828.1 342.8L828.3 345.1L825.9 343.4ZM812.3 322.4L812.5 325.0L809.9 323.5ZM1019.2 340.8L1018.5 343.7L1016.3 341.6ZM938.1 327.7L938.2 330.6L935.6 329.2ZM973.2 319.8L973.8 322.8L970.9 321.8ZM977.0 325.5L977.3 328.5L974.5 327.3ZM804.1 306.8L804.8 309.8L801.9 308.8ZM878.7 458.3L879.1 460.6L876.5 459.1ZM988.6 314.0L989.1 317.0L986.2 316.0ZM805.5 364.9L806.0 367.2L803.3 365.9ZM905.6 276.6L905.8 279.6L903.1 278.4ZM893.5 317.1L894.5 319.6L891.6 319.0ZM871.7 337.6L872.5 339.9L869.7 338.8ZM1031.2 372.0L1031.8 375.0L1029.0 374.1ZM931.2 379.7L932.4 381.7L929.4 381.3ZM858.0 415.4L858.4 417.7L855.8 416.3ZM952.9 296.0L952.2 298.9L950.0 296.8ZM1023.9 353.2L1023.2 356.1L1021.0 354.0ZM999.7 357.6L999.4 360.6L996.9 358.9ZM890.0 288.1L891.0 290.9L888.1 290.4ZM812.2 318.9L813.3 321.4L810.3 320.9ZM974.4 312.0L974.8 315.0L972.0 313.8ZM804.4 313.2L804.4 316.1L801.8 314.6ZM865.8 278.0L866.0 281.0L863.3 279.7ZM869.2 305.4L868.6 308.3L866.4 306.4ZM914.3 308.4L914.5 311.4L911.8 310.0ZM956.2 324.3L956.1 327.3L953.5 325.7ZM893.2 337.3L893.8 339.6L891.1 338.4ZM839.1 376.6L839.2 378.9L836.8 377.1ZM952.6 312.9L953.2 315.9L950.3 314.9ZM973.9 315.5L974.6 318.4L971.7 317.5ZM793.8 394.5L794.8 396.6L791.9 395.9ZM896.1 426.9L896.8 429.2L894.0 428.0ZM975.3 331.3L976.0 334.2L973.1 333.3ZM1000.9 367.7L1000.8 370.5L998.3 368.8ZM968.0 363.7L968.2 366.0L965.7 364.4ZM966.9 359.6L967.3 362.0L964.7 360.4ZM918.7 329.4L919.0 331.9L916.4 330.4ZM960.4 289.3L960.4 292.3L957.8 290.8ZM838.5 320.5L839.0 323.2L836.2 322.0ZM993.5 335.8L993.8 338.8L991.0 337.5ZM1023.2 331.5L1024.0 334.5L1021.1 333.6ZM842.6 350.4L843.0 352.7L840.4 351.3ZM984.1 321.2L983.2 324.0L981.2 321.8ZM940.0 411.0L940.2 413.3L937.8 411.7ZM838.2 321.1L839.0 323.6L836.1 322.8ZM973.3 344.8L973.6 347.7L970.8 346.5ZM974.2 301.4L975.4 304.2L972.5 303.8ZM906.4 295.4L906.5 298.4L903.8 297.0ZM889.4 371.0L890.4 373.2L887.5 372.4ZM870.6 284.2L870.6 287.2L868.0 285.7ZM830.3 377.7L831.5 379.7L828.5 379.2ZM856.2 361.1L857.3 363.2L854.4 362.6ZM1019.4 387.8L1020.0 390.4L1017.2 389.4ZM927.7 370.8L928.7 372.9L925.8 372.2ZM784.9 419.9L785.1 422.2L782.6 420.5ZM996.4 350.0L996.0 352.9L993.6 351.1ZM865.9 353.3L866.9 355.4L864.0 354.8ZM951.2 301.0L951.1 304.0L948.6 302.5ZM906.6 296.3L906.4 299.3L903.9 297.7ZM921.3 335.4L921.9 337.7L919.1 336.6ZM968.8 296.8L967.9 299.7L965.9 297.5ZM1009.1 395.5L1009.6 397.8L1006.9 396.3ZM955.4 409.7L956.0 412.0L953.3 410.8ZM955.0 308.9L955.3 311.9L952.6 310.7ZM1033.6 386.0L1033.4 388.9L1030.9 387.2ZM927.6 349.8L928.1 352.1L925.4 350.8ZM961.5 313.2L961.9 316.2L959.2 315.1ZM857.6 302.0L858.5 304.9L855.6 304.2ZM902.7 311.9L902.9 314.9L900.2 313.5ZM1001.7 380.0L1001.8 382.5L999.3 380.7ZM960.9 324.4L961.3 327.4L958.5 326.2ZM923.2 411.1L923.8 413.3L921.1 412.2ZM916.9 305.5L917.9 308.4L914.9 307.8ZM868.1 301.4L867.6 304.4L865.3 302.5ZM784.5 405.1L784.6 407.4L782.2 405.5ZM951.2 378.7L952.0 380.9L949.2 379.9ZM856.1 307.6L856.9 310.5L854.0 309.7ZM887.1 373.4L887.9 375.6L885.1 374.6ZM980.0 370.9L981.0 373.0L978.1 372.3ZM952.4 290.0L952.7 293.0L950.0 291.7ZM907.0 308.2L907.3 311.2L904.6 310.0ZM912.4 314.1L913.3 316.9L910.3 316.3ZM936.5 305.7L936.8 308.7L934.1 307.4ZM971.2 381.5L971.3 383.8L968.9 382.1ZM957.7 307.4L958.3 310.4L955.5 309.4ZM945.9 323.3L946.2 326.3L943.5 325.1ZM978.8 315.4L979.0 318.4L976.3 317.1ZM881.9 346.7L883.1 348.7L880.1 348.2ZM869.0 358.4L869.5 360.7L866.9 359.4ZM1003.9 360.4L1004.1 363.4L1001.4 362.1ZM1007.2 360.8L1007.9 363.7L1005.0 362.9ZM852.7 350.5L853.7 352.6L850.8 351.9ZM940.3 406.0L940.4 408.3L938.0 406.5ZM995.8 314.1L996.2 317.0L993.5 315.9ZM981.3 322.9L981.4 325.9L978.8 324.5ZM999.5 343.2L1000.3 346.1L997.4 345.3ZM895.8 337.8L896.7 339.9L893.8 339.1ZM844.3 355.3L845.2 357.5L842.3 356.6ZM877.8 307.6L878.8 310.5L875.8 309.9ZM945.6 323.4L945.4 326.4L942.9 324.7ZM970.9 393.2L971.1 395.6L968.7 393.8ZM983.3 409.5L984.0 411.7L981.3 410.6ZM985.0 380.5L985.7 382.7L982.9 381.5ZM1006.4 339.8L1006.8 342.8L1004.0 341.6ZM925.3 290.9L925.4 293.9L922.7 292.5ZM1014.6 387.5L1015.0 390.1L1012.3 388.6ZM844.3 310.4L844.8 313.3L842.0 312.2ZM976.0 318.0L976.9 320.8L974.0 320.2ZM859.6 379.7L860.3 381.9L857.5 380.8ZM997.2 351.5L997.2 354.5L994.6 353.0ZM889.1 450.7L889.2 453.1L886.8 451.3ZM955.1 314.0L955.7 316.9L952.8 315.9ZM812.7 283.0L813.4 285.9L810.5 285.0ZM881.4 303.9L881.2 306.9L878.7 305.3ZM878.4 291.5L879.0 294.5L876.1 293.5ZM954.7 310.5L955.4 313.4L952.5 312.6ZM952.8 347.5L953.8 349.8L950.9 349.2ZM886.7 356.7L887.6 358.9L884.7 358.0ZM852.0 361.4L852.6 363.7L849.9 362.5ZM1014.1 326.5L1014.4 329.4L1011.6 328.2ZM849.3 293.7L849.7 296.7L846.9 295.6ZM795.0 381.6L795.4 383.9L792.8 382.4ZM1020.5 351.2L1021.2 354.1L1018.3 353.3ZM819.5 375.8L820.4 378.0L817.6 377.1ZM886.0 316.2L886.3 319.0L883.6 317.6ZM922.6 306.5L922.9 309.5L920.2 308.2ZM989.9 314.0L990.4 316.9L987.6 315.9ZM1000.7 321.5L1001.4 324.4L998.5 323.6ZM907.1 313.3L907.3 316.3L904.6 315.0ZM889.8 319.3L889.8 322.0L887.3 320.2ZM980.5 390.5L981.1 392.8L978.4 391.6ZM848.9 284.8L849.5 287.7L846.7 286.8ZM968.1 363.8L969.6 365.7L966.6 365.6ZM980.4 319.8L980.4 322.8L977.8 321.3ZM974.6 404.7L975.3 406.9L972.5 405.8ZM871.0 265.6L872.4 268.3L869.4 268.1ZM914.1 318.5L913.7 321.4L911.4 319.5ZM797.5 341.0L798.0 343.3L795.4 341.9ZM912.2 395.0L912.7 397.3L910.1 396.0ZM814.5 403.3L815.4 405.5L812.5 404.7ZM976.4 398.3L977.1 400.5L974.3 399.4ZM808.0 350.4L808.7 352.6L805.9 351.5ZM983.3 307.6L984.2 310.5L981.2 309.8ZM990.6 392.6L991.2 394.9L988.4 393.6ZM967.9 333.7L967.5 336.7L965.1 334.8ZM859.3 365.0L860.1 367.2L857.3 366.1ZM852.9 330.8L853.2 333.2L850.7 331.6ZM801.5 338.8L801.7 341.2L799.2 339.5ZM813.0 322.7L813.9 325.2L811.0 324.4ZM970.3 298.2L969.9 301.1L967.5 299.3ZM934.5 334.4L934.9 337.0L932.2 335.8ZM927.3 347.5L927.4 349.9L925.0 348.1ZM906.0 312.1L906.0 315.1L903.4 313.6ZM899.0 384.3L899.0 386.7L896.6 384.8ZM934.3 314.5L934.3 317.5L931.7 315.9ZM924.1 328.4L924.5 331.0L921.8 329.7ZM953.8 331.3L953.7 334.3L951.2 332.7ZM802.3 370.0L803.0 372.3L800.2 371.1ZM940.2 310.2L939.6 313.2L937.4 311.2ZM956.0 307.5L956.4 310.5L953.6 309.3ZM955.8 393.6L956.3 395.9L953.6 394.5ZM834.1 338.4L835.5 340.4L832.5 340.1ZM990.8 330.7L990.5 333.7L988.1 332.0ZM818.2 313.0L818.7 315.9L815.9 314.8ZM948.9 315.7L948.9 318.7L946.3 317.3ZM820.0 287.8L820.6 290.8L817.8 289.8ZM953.8 335.6L954.1 338.5L951.4 337.3ZM1015.3 348.3L1016.5 351.1L1013.6 350.8ZM901.4 270.2L901.5 273.2L898.9 271.8ZM1013.9 363.1L1014.0 366.1L1011.4 364.6ZM912.6 290.0L913.2 292.9L910.4 292.0ZM886.0 294.8L886.2 297.8L883.5 296.4ZM862.4 324.8L863.1 327.3L860.2 326.2ZM835.5 334.6L836.1 336.8L833.4 335.7ZM990.0 314.6L990.2 317.6L987.5 316.3ZM976.0 369.4L976.5 371.7L973.8 370.4ZM951.2 369.6L951.1 372.0L948.9 369.9ZM923.1 282.1L923.7 285.0L920.8 284.1ZM957.8 290.0L957.8 293.0L955.2 291.5ZM908.8 337.8L909.3 340.1L906.6 338.8ZM834.4 400.4L835.2 402.6L832.3 401.6ZM903.9 301.6L905.0 304.4L902.0 303.9ZM970.9 295.9L971.9 298.7L969.0 298.2ZM963.6 353.9L964.7 356.1L961.8 355.5ZM1031.2 381.7L1030.9 384.6L1028.5 382.9ZM894.5 310.5L895.2 313.3L892.3 312.4ZM869.0 280.3L868.5 283.3L866.2 281.4ZM983.0 388.5L983.6 390.8L980.8 389.5ZM934.5 290.0L934.3 293.0L931.8 291.3ZM913.0 362.5L912.8 364.8L910.6 362.8ZM827.7 283.9L828.1 286.9L825.3 285.7ZM942.3 330.1L941.3 332.9L939.4 330.6ZM921.0 344.6L921.0 347.0L918.7 345.0ZM833.0 293.7L833.5 296.7L830.7 295.6ZM944.1 349.5L944.6 351.9L942.0 350.5ZM903.6 347.6L903.6 349.9L901.3 348.1ZM959.7 354.6L960.7 356.8L957.8 356.1ZM907.6 336.5L908.4 338.7L905.6 337.6ZM987.7 390.4L988.2 392.7L985.5 391.4ZM803.8 314.2L804.1 317.0L801.4 315.8ZM876.0 329.8L876.4 332.2L873.7 330.8ZM981.6 373.1L982.3 375.3L979.5 374.2ZM914.4 449.3L914.3 451.7L912.1 449.7ZM1004.7 317.3L1004.4 320.3L1002.0 318.5ZM1014.8 383.3L1015.1 385.9L1012.4 384.6ZM867.7 307.3L868.5 310.2L865.6 309.4ZM915.7 347.1L916.5 349.3L913.7 348.3ZM942.6 286.1L944.2 288.6L941.2 288.8ZM831.9 372.1L832.1 374.5L829.6 372.7ZM963.4 371.0L964.2 373.2L961.4 372.2ZM902.7 338.5L903.8 340.6L900.9 339.9ZM961.5 317.6L961.2 320.6L958.8 318.9ZM815.2 439.3L815.8 441.6L813.1 440.3ZM970.2 350.1L971.0 352.6L968.2 351.8ZM956.8 422.4L957.2 424.7L954.6 423.2ZM925.7 336.9L925.8 339.4L923.3 337.6ZM838.8 342.2L839.6 344.4L836.8 343.4ZM985.1 381.0L985.6 383.4L982.9 381.9ZM962.3 314.0L962.7 316.9L959.9 315.9ZM967.9 337.9L968.2 340.9L965.4 339.7ZM829.6 289.2L830.7 292.0L827.7 291.5ZM955.7 402.1L956.4 404.3L953.7 403.2ZM888.5 274.8L889.7 277.6L886.7 277.3ZM973.1 348.2L972.5 351.0L970.3 348.9ZM935.3 291.8L935.7 294.7L932.9 293.6ZM851.6 311.0L851.9 313.9L849.2 312.7ZM860.7 347.4L861.0 349.8L858.4 348.2ZM886.6 389.8L887.4 392.0L884.6 391.1ZM969.9 302.7L969.5 305.7L967.1 303.8ZM806.4 351.8L806.9 354.1L804.3 352.8ZM809.5 296.9L810.0 299.8L807.2 298.9ZM914.8 383.7L915.0 386.0L912.5 384.3ZM966.8 311.7L966.6 314.7L964.1 313.1ZM949.5 373.2L950.3 375.4L947.5 374.4ZM1017.4 364.3L1018.5 367.1L1015.5 366.7ZM768.4 374.0L768.8 376.3L766.2 374.8ZM897.8 394.8L898.0 397.2L895.6 395.5ZM1013.5 346.0L1013.4 349.0L1010.9 347.4ZM1004.2 342.1L1004.7 345.1L1001.8 344.0ZM1004.0 372.6L1004.0 375.5L1001.5 373.9ZM875.6 370.2L875.8 372.5L873.3 370.8ZM852.7 366.8L853.3 369.1L850.6 367.8ZM1001.4 364.2L1002.8 366.8L999.8 366.6ZM1031.9 341.1L1031.5 344.1L1029.1 342.3ZM917.2 291.3L917.3 294.3L914.7 292.9ZM904.6 399.9L905.6 402.0L902.7 401.3ZM892.2 287.7L892.9 290.6L890.0 289.8ZM878.0 423.4L878.9 425.6L876.1 424.7ZM886.8 344.2L887.4 346.5L884.6 345.2ZM940.2 397.0L940.7 399.3L938.0 397.9ZM932.6 377.4L932.9 379.8L930.4 378.1ZM988.1 399.9L988.0 402.3L985.7 400.3ZM837.6 299.7L837.1 302.7L834.8 300.7ZM948.2 368.6L949.4 370.6L946.4 370.1ZM969.7 332.4L969.6 335.4L967.0 333.8ZM852.2 387.1L852.9 389.4L850.1 388.2ZM990.1 319.6L990.3 322.6L987.6 321.2ZM886.1 321.7L886.8 324.2L884.0 323.2ZM818.9 380.3L819.8 382.5L817.0 381.6ZM1008.6 343.5L1008.5 346.5L1005.9 345.0ZM961.0 294.6L961.3 297.6L958.5 296.4ZM1015.5 329.0L1016.0 332.0L1013.2 331.0ZM812.9 305.1L812.5 308.1L810.1 306.3ZM932.2 363.9L933.4 365.9L930.5 365.5ZM934.0 282.0L933.3 284.9L931.1 282.8ZM813.2 309.6L813.8 312.5L810.9 311.5ZM863.6 296.8L864.5 299.7L861.6 299.0ZM985.7 310.1L986.4 313.0L983.5 312.2ZM909.8 344.0L910.5 346.2L907.8 345.1ZM958.3 300.4L958.5 303.4L955.8 302.0ZM935.0 380.7L935.6 383.0L932.9 381.7ZM883.2 456.8L883.5 459.1L880.9 457.5ZM858.4 280.5L859.2 283.4L856.3 282.6ZM947.5 298.6L948.4 301.5L945.5 300.8ZM965.0 397.6L966.0 399.7L963.1 399.0ZM965.0 386.5L965.5 388.8L962.8 387.3ZM854.3 359.3L854.8 361.7L852.1 360.3ZM991.2 381.5L991.9 383.8L989.1 382.6ZM807.4 398.9L807.5 401.2L805.1 399.4ZM932.2 280.9L932.7 283.9L929.9 282.9ZM785.4 434.0L785.3 436.3L783.1 434.4ZM844.3 281.2L845.0 284.1L842.1 283.3ZM1005.1 392.5L1005.1 394.9L1002.7 393.0ZM833.2 312.7L833.9 315.5L831.0 314.5ZM952.3 395.9L953.1 398.1L950.3 397.1ZM816.7 309.7L816.6 312.7L814.1 311.0ZM956.7 325.5L957.3 328.5L954.5 327.5ZM926.9 277.7L926.8 280.7L924.2 279.2ZM797.8 370.3L798.6 372.5L795.7 371.5ZM998.5 315.8L999.2 318.7L996.3 317.9ZM941.7 307.3L941.6 310.3L939.1 308.7ZM839.1 293.5L839.4 296.5L836.7 295.3ZM807.7 372.4L808.8 374.5L805.9 373.9ZM968.9 414.6L969.8 416.8L966.9 415.9ZM821.0 328.0L821.5 330.5L818.8 329.2ZM828.8 278.6L829.1 281.6L826.4 280.4ZM932.3 294.7L932.6 297.7L929.8 296.4ZM789.2 349.0L789.7 351.3L787.0 349.9ZM932.7 388.4L932.9 390.8L930.4 389.1ZM781.8 397.2L781.7 399.6L779.4 397.6ZM961.6 304.6L962.0 307.6L959.2 306.5ZM905.9 280.4L905.6 283.3L903.2 281.6ZM843.2 272.5L842.4 275.4L840.3 273.3ZM949.8 298.9L949.4 301.9L947.0 300.2ZM943.6 306.9L943.7 309.9L941.0 308.5ZM972.5 351.4L972.3 354.1L969.9 352.2ZM910.1 399.4L910.8 401.6L908.0 400.5ZM896.5 281.1L897.3 284.0L894.4 283.2ZM838.2 311.8L839.3 314.5L836.4 314.1ZM864.1 412.6L864.8 414.8L862.0 413.7ZM939.5 356.0L940.0 358.3L937.3 357.0ZM947.6 400.0L948.7 402.1L945.8 401.4ZM909.4 280.9L909.4 283.9L906.8 282.4ZM843.0 428.4L843.5 430.8L840.9 429.3ZM871.0 454.6L871.7 456.8L868.9 455.7ZM946.0 302.1L945.8 305.1L943.3 303.4ZM949.8 365.4L950.4 367.6L947.7 366.4ZM829.6 449.4L830.5 451.6L827.6 450.6ZM944.4 387.6L945.3 389.8L942.4 388.9ZM776.6 363.2L777.4 365.4L774.6 364.4ZM882.2 359.9L882.9 362.1L880.1 361.0ZM974.6 375.9L975.0 378.2L972.4 376.8ZM1015.8 354.8L1016.2 357.7L1013.4 356.7ZM962.1 382.0L962.6 384.3L959.9 382.9ZM978.8 337.3L979.1 340.3L976.4 339.1ZM961.0 398.8L961.0 401.1L958.7 399.2ZM1011.4 361.1L1011.3 364.1L1008.8 362.5ZM894.9 314.5L895.2 317.2L892.5 315.8ZM989.5 323.0L989.7 326.0L987.0 324.7ZM912.8 367.5L913.4 369.8L910.7 368.6ZM962.3 404.0L962.5 406.3L960.0 404.6ZM983.1 365.0L984.0 367.4L981.1 366.7ZM943.8 405.6L944.4 407.8L941.7 406.6ZM1033.6 354.7L1033.4 357.7L1030.9 356.0ZM758.0 402.9L758.1 405.3L755.7 403.5ZM975.6 334.8L976.0 337.8L973.2 336.7ZM1022.7 339.1L1024.7 341.4L1021.7 342.0ZM895.0 353.3L895.9 355.5L893.0 354.7ZM938.6 373.4L939.2 375.7L936.5 374.5ZM976.5 374.7L977.7 376.7L974.7 376.3ZM959.1 331.8L959.2 334.8L956.6 333.4ZM851.3 376.4L851.9 378.7L849.2 377.4ZM911.4 307.1L910.6 310.0L908.5 307.9ZM1004.5 397.8L1005.4 400.0L1002.5 399.1ZM989.5 333.9L990.2 336.8L987.3 335.9ZM785.9 356.4L786.2 358.7L783.7 357.1ZM990.0 329.3L990.0 332.3L987.4 330.8ZM1026.5 338.5L1027.1 341.4L1024.2 340.4ZM975.3 305.1L975.3 308.1L972.7 306.7ZM941.2 311.2L941.7 314.2L938.9 313.1ZM855.2 367.9L855.5 370.3L853.0 368.6ZM827.0 373.2L827.8 375.5L825.0 374.4ZM951.5 376.4L952.5 378.5L949.6 377.8ZM998.9 332.0L999.7 334.9L996.8 334.1ZM980.1 363.9L980.9 366.3L978.1 365.3ZM876.9 267.1L877.2 270.1L874.5 268.9ZM782.2 355.3L782.6 357.6L780.0 356.2ZM851.6 321.0L852.0 323.6L849.3 322.3ZM943.9 362.9L944.3 365.2L941.7 363.7ZM1015.9 348.3L1016.2 351.3L1013.5 350.1ZM955.5 361.0L956.7 363.1L953.7 362.5ZM1004.8 333.3L1005.5 336.2L1002.6 335.3ZM936.6 281.6L937.5 284.4L934.6 283.8ZM902.1 271.1L902.5 274.1L899.7 272.9ZM786.4 367.2L787.1 369.5L784.3 368.4ZM922.8 319.2L922.9 322.1L920.3 320.7ZM889.9 362.5L890.6 364.7L887.8 363.6ZM988.5 367.5L989.1 370.1L986.3 369.0ZM795.6 337.2L796.2 339.5L793.5 338.2ZM909.4 269.4L909.7 272.4L907.0 271.2ZM902.5 398.4L903.3 400.7L900.5 399.6ZM946.6 304.3L946.6 307.3L944.0 305.8ZM950.8 357.6L951.5 359.8L948.7 358.7ZM970.0 347.1L971.1 349.7L968.2 349.2ZM892.6 296.8L893.3 299.7L890.4 298.9ZM838.5 266.3L838.6 269.3L835.9 267.9ZM965.9 325.2L966.4 328.2L963.6 327.1ZM913.4 356.3L914.5 358.4L911.6 357.8ZM980.9 356.7L980.8 359.5L978.3 357.8ZM866.3 398.4L866.5 400.7L864.0 399.1ZM962.5 321.0L962.8 324.0L960.1 322.7ZM949.0 327.8L949.6 330.7L946.7 329.8ZM960.5 378.3L961.1 380.6L958.4 379.4ZM907.0 317.3L907.8 320.1L904.9 319.3ZM834.5 273.6L835.0 276.6L832.2 275.5ZM827.1 304.3L827.5 307.2L824.7 306.1ZM869.7 266.7L870.8 269.5L867.8 269.1ZM968.6 372.4L969.6 374.5L966.7 373.8ZM855.0 407.8L855.0 410.2L852.7 408.3ZM944.9 287.4L944.9 290.4L942.3 288.9ZM906.3 402.0L907.1 404.2L904.3 403.2ZM966.7 383.3L966.6 385.6L964.4 383.6ZM985.9 397.0L986.5 399.3L983.8 398.1ZM861.8 289.5L861.7 292.6L859.1 291.0ZM979.2 322.2L980.0 325.1L977.1 324.3ZM982.1 384.9L983.2 387.0L980.3 386.4ZM1022.4 359.6L1022.6 362.6L1019.9 361.3ZM957.7 419.4L957.8 421.8L955.4 419.9ZM889.3 330.4L889.7 332.8L887.1 331.3ZM954.5 323.4L955.1 326.3L952.3 325.4ZM941.4 324.2L941.6 327.2L938.9 325.8ZM932.1 287.6L932.3 290.6L929.6 289.2ZM996.4 356.2L995.7 359.1L993.5 357.1ZM907.3 285.3L907.2 288.3L904.6 286.7ZM915.3 436.6L916.0 438.9L913.2 437.8ZM892.4 320.4L893.6 322.8L890.6 322.4ZM954.0 348.2L954.7 350.6L951.9 349.6ZM937.6 310.4L938.2 313.3L935.4 312.4ZM964.4 415.2L965.3 417.4L962.4 416.4ZM846.5 384.7L847.7 386.7L844.8 386.4ZM920.0 358.5L920.2 360.8L917.7 359.1ZM965.1 362.6L965.6 364.9L962.9 363.6ZM863.1 363.8L863.5 366.1L860.9 364.6ZM999.8 328.0L999.4 331.0L997.0 329.2ZM895.1 388.3L896.4 390.2L893.4 390.0ZM997.6 358.8L998.2 361.7L995.4 360.8ZM948.7 390.6L949.4 392.8L946.7 391.7ZM917.9 387.3L918.2 389.6L915.7 388.0ZM984.6 389.0L984.9 391.4L982.4 389.8ZM847.5 266.9L848.6 269.7L845.6 269.3ZM991.6 391.3L992.4 393.6L989.6 392.5ZM1002.6 322.6L1003.3 325.5L1000.4 324.6ZM813.3 332.4L814.0 334.6L811.2 333.5Z" fill="#3c4774"/></g>
<g opacity="1.0"><path d="M1114.4 182.1L1122.7 175.7M975.9 303.7L984.7 297.3M1018.1 273.6L1028.9 267.4M1054.7 200.8L1062.0 197.6M1062.9 239.2L1075.5 232.4M1080.0 193.1L1086.7 191.1M1032.8 246.3L1040.0 240.9M1119.7 179.1L1124.4 174.8M1081.3 190.1L1090.2 185.4M1050.6 228.9L1059.9 220.9M1058.9 240.3L1064.7 237.2M1126.7 183.4L1131.0 179.4M1054.6 253.1L1060.2 250.4M1050.1 237.2L1059.8 230.9M1099.1 203.4L1107.6 195.7M1065.9 210.8L1075.0 204.7M1065.5 229.1L1071.2 224.6M1063.5 251.9L1071.4 244.6M1002.1 300.3L1010.2 296.3M1088.8 193.6L1094.2 190.7M1155.7 132.4L1166.7 126.1M1138.4 163.9L1149.7 161.0M1056.5 217.1L1063.9 212.5M1106.6 154.4L1118.8 148.8M1134.2 143.9L1141.0 140.8M1066.0 232.6L1071.5 227.2M1057.8 228.5L1068.0 221.7M1177.3 109.0L1185.6 104.3M1017.8 282.2L1023.6 278.0M1061.7 232.9L1069.3 230.2M1025.4 279.7L1034.9 276.3M1045.8 258.7L1057.4 250.8M1127.0 186.4L1135.8 183.4M1018.8 267.3L1028.9 261.9M1098.6 176.8L1110.4 170.3M1009.6 280.5L1017.6 276.3M1003.4 255.3L1012.1 251.2M1120.8 203.2L1127.6 199.8M1093.4 177.5L1101.1 173.0M986.9 319.6L993.6 314.0M1055.5 226.6L1061.0 222.3M1076.0 212.3L1084.0 207.5M1114.9 186.1L1125.3 178.8M1084.8 203.4L1095.6 198.0M995.4 258.7L1005.0 255.5M1135.4 150.8L1143.6 147.2M1115.5 222.5L1128.2 215.8M1043.6 249.9L1047.7 245.5M1040.6 242.7L1047.4 240.6M1031.5 230.5L1041.3 225.3M1015.8 244.2L1024.9 241.0M1081.4 179.1L1087.9 171.4M1178.8 112.5L1185.2 107.8M1120.3 211.6L1129.2 208.1M1163.8 118.5L1175.4 111.0M1054.7 231.9L1060.0 228.4M1049.1 214.6L1058.1 209.1M1120.8 196.6L1130.7 189.5M989.2 262.4L1001.0 255.4M991.8 305.7L998.4 301.1M1011.8 254.8L1022.9 250.3M1112.0 183.5L1121.7 180.1M1173.6 121.4L1181.9 109.6M985.7 265.8L997.4 259.2M1141.9 157.5L1150.9 153.3M1075.7 178.6L1080.6 174.3M1036.7 213.7L1044.0 205.8M982.7 301.4L992.5 295.3M1066.4 247.4L1074.4 242.2M1140.6 131.9L1151.0 126.1M1133.0 174.6L1141.3 169.0M1128.8 129.4L1134.8 125.1M1126.5 156.4L1133.9 151.0M987.2 297.8L995.3 293.3M1085.4 215.1L1090.1 209.7M1010.8 290.7L1020.6 281.0M1024.0 249.3L1036.1 244.3M1100.8 224.3L1108.6 217.8M1010.1 289.5L1017.4 285.0M1030.7 250.6L1041.8 242.2M1126.0 185.7L1134.0 182.4M1127.0 160.2L1133.2 155.1M987.2 286.5L992.2 282.7M997.3 300.4L1006.8 294.3M1038.8 278.6L1048.9 273.9M1013.9 262.7L1021.5 257.4M1003.8 272.6L1010.0 268.3M1036.0 235.2L1044.8 226.1M1091.9 219.6L1097.5 216.2M1016.8 301.2L1023.2 297.8M1034.4 257.7L1039.8 254.0M1067.5 212.9L1073.3 209.9M1097.5 223.8L1103.5 220.9M977.0 319.7L987.2 312.2M1059.5 217.3L1067.7 213.4M1014.2 273.8L1023.1 267.1M978.6 316.3L989.9 308.5M1011.3 273.2L1018.1 269.0M1073.5 189.9L1078.9 186.1M1103.0 191.7L1109.1 188.4M1014.2 301.3L1024.1 294.7M1033.6 214.3L1041.0 207.8M985.3 270.8L993.8 264.6M1162.5 117.1L1169.7 112.7M986.5 302.9L999.5 297.7M1114.0 187.1L1119.7 183.4M1009.7 249.2L1015.6 245.4M1114.4 182.7L1120.1 180.2M996.4 300.6L1003.5 297.6M1007.0 299.5L1014.8 291.9M1117.6 150.4L1127.7 147.9M1056.8 255.1L1065.1 250.5M1039.5 252.1L1048.1 247.5M1013.9 280.7L1018.4 277.4M1119.1 223.6L1130.1 216.1M1019.3 229.3L1025.9 226.9M1018.5 301.6L1025.0 296.6M1021.2 253.5L1029.1 247.8M1046.2 254.3L1055.9 246.4M1109.8 147.1L1115.4 140.7M1036.1 285.2L1043.5 281.1M1010.5 293.3L1021.7 286.4M1067.2 183.8L1080.1 178.2M1146.8 134.7L1153.2 131.1M1137.5 140.2L1143.3 138.3M998.0 248.2L1005.9 243.0M1066.4 222.1L1072.0 219.5M975.5 288.8L981.8 284.9M1063.0 225.7L1071.1 223.0M995.8 306.2L1004.8 296.2M988.7 277.6L996.4 273.3M1050.5 248.0L1058.7 243.4M1088.1 192.4L1094.7 188.3M1112.8 199.2L1119.0 195.5M1090.1 190.9L1097.4 185.2M1061.0 203.5L1066.8 199.9M1070.0 206.6L1077.8 203.0M1069.5 243.3L1079.7 237.6M1006.6 283.0L1010.4 278.5M1086.9 231.5L1099.0 224.4M1107.9 187.2L1118.5 182.9M1097.2 159.3L1104.9 156.0M1042.2 279.3L1048.0 274.7M1003.4 277.0L1014.5 272.8M1049.2 266.7L1054.9 264.3M1064.1 238.6L1074.7 232.9M1094.2 225.3L1101.3 219.6M1099.7 207.9L1111.1 203.4M1116.8 194.2L1127.7 189.5M1131.9 134.3L1142.2 129.7M984.8 299.4L993.3 293.2M1131.2 177.6L1140.0 171.1M1108.9 222.6L1115.1 217.1M1005.9 301.5L1011.5 296.9M1068.5 218.7L1079.0 211.2M1079.5 218.1L1087.5 211.6M1030.0 282.2L1034.8 278.2M1146.1 147.2L1153.5 142.2M1023.8 218.5L1034.4 211.7M1096.8 217.2L1105.9 214.1M1117.6 183.9L1126.7 177.9M1105.7 200.3L1112.3 194.3M1038.6 217.3L1049.2 213.1M1035.6 278.7L1046.4 270.6M1067.6 202.0L1071.2 196.5M986.0 319.7L992.8 314.2M980.0 319.5L990.0 316.2M1070.5 214.2L1081.3 209.7M1002.7 267.2L1008.4 264.3M1045.6 269.4L1050.6 265.7M1046.7 260.1L1054.1 255.9M1012.6 278.6L1020.7 274.8M1001.7 289.7L1008.7 287.6M976.9 289.2L983.9 285.1M1072.7 245.5L1079.6 239.3M1134.2 167.2L1142.7 162.3M995.4 302.2L1004.1 297.5M1069.7 212.3L1078.3 208.8M1001.4 256.1L1009.6 251.6M1046.9 215.7L1058.1 210.9M1156.2 134.3L1164.0 128.6M1115.7 222.0L1124.2 217.2M1012.3 291.5L1017.2 288.1M993.6 291.3L1004.5 282.8M988.9 308.8L997.6 302.3M1141.1 156.4L1150.2 148.6M993.6 286.8L999.2 283.6M1005.3 272.0L1015.5 266.1M1126.0 172.8L1134.4 166.8M990.1 290.1L1001.7 285.4M1042.6 276.0L1047.3 272.8M1000.5 270.2L1009.0 262.5M1096.3 174.0L1102.1 169.4M967.7 299.7L978.3 290.5M1085.8 219.2L1095.0 217.2M1110.6 190.2L1117.5 184.6M1104.6 216.6L1110.5 213.0M1037.2 272.5L1043.1 267.4M1023.2 293.9L1027.4 290.1M964.6 312.0L972.9 307.0M1075.7 224.9L1085.4 221.9M1058.7 248.7L1068.2 244.2M1134.3 153.9L1139.0 150.1M1140.6 146.5L1148.0 141.1M1121.8 133.8L1131.8 129.9M1061.9 224.6L1068.2 220.8M1089.5 190.8L1100.7 185.8M991.6 310.2L998.2 305.3M1103.1 196.1L1109.2 191.7M1062.1 246.8L1071.4 241.3M1033.4 240.2L1043.3 232.0M1108.7 167.2L1119.8 160.9M986.6 306.8L995.9 297.6M1064.4 196.1L1070.3 192.1M1040.9 239.6L1047.8 237.5M1083.6 236.4L1092.8 230.6M1080.0 234.4L1087.9 225.6M1047.3 238.4L1052.6 235.7M1023.8 289.7L1031.3 285.4M1140.5 135.4L1147.6 131.8M971.6 288.1L977.7 284.5M1042.3 262.4L1053.7 259.5M1051.4 256.4L1059.1 251.2M1123.2 178.0L1130.4 174.3M1108.3 199.3L1114.3 195.1M1075.7 188.9L1085.3 181.3M1152.7 130.3L1164.0 121.9M978.3 316.3L989.0 312.8M1087.2 169.3L1093.1 166.5M1064.4 246.2L1070.8 241.0M1013.0 231.7L1022.4 224.1M1001.6 285.0L1013.6 280.9M1109.2 166.9L1117.3 159.7M1065.3 251.6L1074.8 247.9M1050.1 267.1L1058.7 262.5M1157.9 104.4L1170.0 99.8M1128.7 179.4L1133.9 176.1M1007.5 296.2L1014.4 292.1M1104.1 169.6L1112.6 166.9M1155.5 113.4L1162.5 109.2M1056.5 255.1L1064.5 247.2M1010.1 291.4L1019.4 288.1M1028.3 280.5L1039.3 272.4M1073.5 232.8L1082.0 227.1M1064.1 229.7L1076.6 222.9M1162.8 116.0L1175.5 109.5M1042.6 241.6L1054.0 235.5M1032.6 278.9L1042.8 269.1M1029.5 239.4L1035.3 235.9M974.7 293.0L984.6 283.4M1124.0 181.7L1132.3 176.6M1138.0 169.4L1145.2 163.5M1118.5 164.2L1124.5 160.0M1061.6 211.6L1070.9 204.5M1005.2 286.0L1011.8 282.1M1133.0 131.6L1140.7 124.6M1012.8 246.3L1020.6 242.6M1136.3 139.9L1141.5 136.5M1096.7 180.3L1102.3 177.5M1079.1 210.3L1092.2 204.2M1125.4 168.7L1134.1 164.4M1043.0 249.6L1050.3 245.0M1048.1 239.5L1056.1 234.3M1001.1 297.5L1014.6 293.8M1008.6 258.8L1015.2 254.9M982.7 256.8L995.4 250.9M1040.2 265.0L1045.4 262.5M1098.7 164.4L1106.4 159.6M961.2 298.3L970.4 291.2M1048.4 230.8L1057.0 225.6M974.9 320.9L981.2 315.7M1109.1 168.1L1119.3 164.8M998.9 269.9L1011.3 262.9M986.9 308.8L1000.1 304.5M1103.1 179.8L1113.8 172.8M1162.9 101.9L1169.5 98.2M1126.7 183.7L1134.6 178.3M1075.3 229.2L1081.5 225.9M1074.9 200.2L1079.6 197.1M1049.8 260.7L1054.6 257.3M1006.8 244.4L1017.4 240.2M1158.1 120.1L1163.1 115.5M1095.8 213.6L1105.9 209.1M1155.1 109.2L1161.5 105.8M983.6 289.5L989.3 286.4M977.7 281.4L984.5 275.6M1043.9 250.9L1051.4 246.1M1056.6 192.4L1065.9 186.7M960.1 305.4L967.3 301.1M988.6 273.1L997.4 267.7M1173.5 118.2L1180.1 111.3M997.8 275.5L1006.0 272.7M1114.3 186.4L1120.2 180.6M1012.6 282.2L1019.8 279.4M1034.1 238.0L1039.8 234.9M1100.6 191.3L1113.4 187.6M1006.9 264.4L1011.1 259.7M1014.8 284.6L1020.8 280.2M1085.9 198.6L1095.7 191.1M1115.0 181.4L1122.0 177.8" stroke="#7082c4" stroke-width="1.3" fill="none"/><path d="M1126.2 173.0L1124.2 177.6L1121.2 173.8ZM988.4 294.7L986.1 299.2L983.3 295.4ZM1032.8 265.1L1030.1 269.5L1027.7 265.3ZM1066.1 195.7L1063.0 199.8L1061.0 195.4ZM1079.4 230.3L1076.6 234.5L1074.3 230.3ZM1091.0 189.8L1087.4 193.4L1086.0 188.8ZM1043.6 238.2L1041.4 242.8L1038.6 239.0ZM1127.7 171.7L1126.0 176.5L1122.8 173.0ZM1094.2 183.3L1091.4 187.5L1089.1 183.2ZM1063.3 218.0L1061.5 222.7L1058.3 219.1ZM1068.7 235.1L1065.8 239.3L1063.6 235.1ZM1134.2 176.3L1132.6 181.1L1129.3 177.6ZM1064.3 248.5L1061.2 252.6L1059.2 248.3ZM1063.6 228.5L1061.1 232.9L1058.5 228.9ZM1110.9 192.7L1109.2 197.5L1105.9 193.9ZM1078.8 202.2L1076.3 206.7L1073.7 202.7ZM1074.7 221.7L1072.7 226.4L1069.7 222.7ZM1074.8 241.6L1073.1 246.4L1069.8 242.8ZM1014.2 294.3L1011.3 298.4L1009.1 294.1ZM1098.1 188.6L1095.3 192.8L1093.0 188.6ZM1170.6 123.8L1167.9 128.2L1165.5 124.0ZM1154.1 159.8L1150.3 163.3L1149.1 158.6ZM1067.8 210.2L1065.2 214.6L1062.7 210.5ZM1122.9 147.0L1119.8 151.0L1117.8 146.6ZM1145.1 138.9L1142.0 142.9L1140.0 138.6ZM1074.7 224.0L1073.1 228.9L1069.8 225.5ZM1071.7 219.2L1069.3 223.7L1066.6 219.7ZM1189.6 102.1L1186.8 106.4L1184.5 102.2ZM1027.2 275.4L1025.0 279.9L1022.2 276.0ZM1073.6 228.7L1070.1 232.5L1068.5 227.9ZM1039.1 274.8L1035.7 278.6L1034.1 274.1ZM1061.1 248.2L1058.7 252.7L1056.0 248.8ZM1140.1 182.0L1136.6 185.7L1135.1 181.1ZM1032.9 259.8L1030.0 264.0L1027.8 259.8ZM1114.4 168.2L1111.6 172.4L1109.3 168.2ZM1021.6 274.2L1018.7 278.4L1016.5 274.2ZM1016.1 249.3L1013.1 253.4L1011.0 249.1ZM1131.6 197.8L1128.6 202.0L1126.5 197.7ZM1105.0 170.8L1102.3 175.1L1099.9 171.0ZM997.1 311.1L995.2 315.9L992.1 312.2ZM1064.5 219.5L1062.5 224.2L1059.5 220.4ZM1087.8 205.3L1085.2 209.6L1082.7 205.5ZM1128.9 176.2L1126.6 180.8L1123.9 176.8ZM1099.7 195.9L1096.7 200.1L1094.6 195.8ZM1009.3 254.1L1005.8 257.8L1004.3 253.2ZM1147.8 145.4L1144.6 149.4L1142.7 145.0ZM1132.2 213.6L1129.3 217.9L1127.1 213.6ZM1050.8 242.2L1049.5 247.1L1046.0 243.8ZM1051.7 239.3L1048.1 242.9L1046.7 238.3ZM1045.3 223.2L1042.4 227.4L1040.2 223.2ZM1029.1 239.5L1025.7 243.2L1024.1 238.7ZM1090.8 167.9L1089.7 172.9L1086.1 169.8ZM1188.8 105.1L1186.6 109.7L1183.7 105.9ZM1133.3 206.4L1130.1 210.3L1128.3 205.8ZM1179.2 108.6L1176.7 113.0L1174.1 109.0ZM1063.7 225.9L1061.3 230.4L1058.7 226.4ZM1062.0 206.7L1059.4 211.1L1056.9 207.0ZM1134.3 186.9L1132.1 191.5L1129.3 187.6ZM1004.9 253.1L1002.2 257.5L999.8 253.3ZM1002.1 298.5L999.8 303.1L997.1 299.1ZM1027.1 248.6L1023.8 252.5L1022.0 248.1ZM1125.9 178.6L1122.5 182.4L1120.9 177.8ZM1184.5 105.9L1183.9 111.0L1180.0 108.2ZM1001.4 257.0L998.6 261.3L996.3 257.1ZM1155.0 151.4L1151.9 155.5L1149.9 151.1ZM1083.9 171.3L1082.1 176.1L1079.0 172.5ZM1047.1 202.5L1045.8 207.4L1042.3 204.2ZM996.4 292.9L993.8 297.3L991.3 293.2ZM1078.2 239.8L1075.7 244.2L1073.1 240.2ZM1154.9 123.9L1152.2 128.2L1149.8 124.0ZM1145.0 166.5L1142.6 171.0L1140.0 167.0ZM1138.5 122.5L1136.2 127.1L1133.4 123.2ZM1137.5 148.3L1135.3 152.9L1132.5 149.0ZM999.2 291.2L996.4 295.4L994.1 291.2ZM1093.0 206.3L1091.9 211.3L1088.3 208.1ZM1023.8 277.8L1022.3 282.7L1018.9 279.3ZM1040.2 242.6L1037.0 246.5L1035.1 242.1ZM1112.1 214.9L1110.2 219.6L1107.1 215.9ZM1021.2 282.7L1018.6 287.1L1016.1 283.0ZM1045.4 239.5L1043.2 244.1L1040.3 240.3ZM1138.2 180.6L1134.9 184.6L1133.1 180.1ZM1136.6 152.3L1134.7 157.0L1131.6 153.3ZM995.8 280.0L993.6 284.6L990.8 280.8ZM1010.6 291.8L1008.1 296.3L1005.5 292.3ZM1053.0 272.0L1049.9 276.1L1047.9 271.7ZM1025.3 254.9L1022.9 259.4L1020.2 255.4ZM1013.7 265.7L1011.4 270.3L1008.6 266.3ZM1047.9 222.9L1046.5 227.8L1043.1 224.4ZM1101.3 213.8L1098.7 218.2L1096.2 214.1ZM1027.2 295.7L1024.3 299.9L1022.1 295.7ZM1043.6 251.5L1041.2 256.0L1038.5 252.0ZM1077.3 207.8L1074.4 212.0L1072.2 207.7ZM1107.6 218.9L1104.6 223.0L1102.5 218.7ZM990.8 309.5L988.6 314.1L985.8 310.2ZM1071.8 211.5L1068.8 215.5L1066.7 211.2ZM1026.7 264.4L1024.6 269.0L1021.7 265.2ZM993.6 305.9L991.3 310.5L988.6 306.5ZM1021.9 266.7L1019.3 271.1L1016.8 267.0ZM1082.6 183.6L1080.3 188.1L1077.6 184.2ZM1113.1 186.3L1110.3 190.5L1108.0 186.3ZM1027.8 292.2L1025.4 296.7L1022.8 292.7ZM1044.4 204.9L1042.6 209.6L1039.4 206.0ZM997.4 262.0L995.2 266.6L992.4 262.7ZM1173.6 110.4L1170.9 114.8L1168.5 110.7ZM1003.7 296.0L1000.4 299.9L998.6 295.4ZM1123.5 181.0L1121.0 185.4L1118.4 181.4ZM1019.4 242.9L1016.9 247.4L1014.3 243.4ZM1124.2 178.4L1121.0 182.4L1119.1 178.0ZM1007.7 295.9L1004.5 299.8L1002.6 295.4ZM1018.0 288.7L1016.4 293.6L1013.1 290.2ZM1132.1 146.9L1128.3 150.3L1127.1 145.6ZM1069.0 248.3L1066.2 252.6L1063.9 248.4ZM1052.0 245.4L1049.2 249.7L1046.9 245.4ZM1022.0 274.7L1019.8 279.3L1017.0 275.5ZM1133.8 213.6L1131.4 218.1L1128.8 214.1ZM1030.1 225.3L1026.7 229.1L1025.1 224.6ZM1028.6 293.9L1026.5 298.5L1023.5 294.7ZM1032.7 245.2L1030.5 249.7L1027.7 245.9ZM1059.4 243.6L1057.4 248.3L1054.4 244.5ZM1118.4 137.3L1117.2 142.3L1113.6 139.1ZM1047.5 278.9L1044.7 283.2L1042.4 279.0ZM1025.5 284.1L1022.9 288.5L1020.4 284.4ZM1084.3 176.4L1081.1 180.4L1079.2 176.0ZM1157.2 128.9L1154.4 133.2L1152.1 129.0ZM1147.6 136.9L1144.1 140.6L1142.6 136.0ZM1009.6 240.5L1007.2 245.0L1004.6 241.0ZM1076.1 217.7L1073.0 221.7L1071.0 217.3ZM985.6 282.6L983.0 287.0L980.5 282.9ZM1075.4 221.5L1071.9 225.2L1070.3 220.7ZM1007.8 292.9L1006.6 297.8L1003.0 294.6ZM1000.3 271.1L997.6 275.4L995.2 271.2ZM1062.7 241.3L1059.9 245.5L1057.6 241.3ZM1098.5 185.9L1096.0 190.4L1093.4 186.3ZM1122.8 193.2L1120.2 197.6L1117.7 193.5ZM1100.9 182.4L1098.9 187.0L1095.9 183.3ZM1070.7 197.6L1068.1 202.0L1065.6 197.9ZM1081.9 201.1L1078.8 205.1L1076.8 200.8ZM1083.6 235.4L1080.9 239.7L1078.5 235.5ZM1013.3 275.0L1012.2 280.0L1008.6 276.9ZM1102.9 222.1L1100.2 226.5L1097.8 222.3ZM1122.6 181.3L1119.4 185.2L1117.6 180.7ZM1109.1 154.2L1105.9 158.2L1104.0 153.8ZM1051.5 271.8L1049.5 276.5L1046.4 272.8ZM1018.7 271.2L1015.4 275.0L1013.7 270.5ZM1059.1 262.6L1055.9 266.5L1054.0 262.1ZM1078.7 230.8L1075.9 235.0L1073.6 230.8ZM1104.8 216.8L1102.8 221.5L1099.8 217.8ZM1115.3 201.8L1112.0 205.6L1110.2 201.2ZM1131.8 187.7L1128.7 191.7L1126.8 187.3ZM1146.3 127.8L1143.2 131.9L1141.2 127.5ZM997.0 290.6L994.8 295.2L991.9 291.3ZM1143.6 168.5L1141.4 173.1L1138.6 169.2ZM1118.5 214.1L1116.7 218.9L1113.5 215.3ZM1015.0 294.1L1013.0 298.8L1010.0 295.1ZM1082.6 208.6L1080.4 213.2L1077.6 209.3ZM1090.9 208.7L1089.0 213.4L1085.9 209.7ZM1038.2 275.4L1036.3 280.1L1033.2 276.4ZM1157.2 139.7L1154.8 144.2L1152.1 140.2ZM1038.2 209.3L1035.7 213.7L1033.1 209.7ZM1110.2 212.6L1106.7 216.3L1105.1 211.8ZM1130.5 175.5L1128.0 179.9L1125.4 175.9ZM1115.6 191.3L1113.9 196.1L1110.7 192.6ZM1053.4 211.5L1050.0 215.4L1048.3 210.9ZM1050.0 267.9L1047.8 272.5L1044.9 268.7ZM1073.6 192.7L1073.2 197.8L1069.1 195.2ZM996.3 311.4L994.3 316.1L991.3 312.3ZM994.2 314.8L990.7 318.5L989.2 313.9ZM1085.5 207.9L1082.2 211.9L1080.4 207.5ZM1012.4 262.3L1009.4 266.5L1007.3 262.2ZM1054.2 263.0L1052.0 267.6L1049.2 263.7ZM1058.0 253.6L1055.3 258.0L1052.9 253.8ZM1024.8 272.8L1021.7 276.9L1019.7 272.6ZM1013.0 286.3L1009.4 289.9L1008.0 285.3ZM987.7 282.8L985.1 287.2L982.6 283.0ZM1083.0 236.3L1081.2 241.1L1078.0 237.5ZM1146.6 160.1L1143.9 164.4L1141.5 160.2ZM1008.1 295.3L1005.2 299.6L1003.0 295.4ZM1082.5 207.1L1079.2 211.0L1077.4 206.6ZM1013.5 249.4L1010.7 253.7L1008.4 249.5ZM1062.2 209.1L1059.0 213.1L1057.1 208.7ZM1167.7 125.9L1165.4 130.5L1162.6 126.6ZM1128.1 215.0L1125.4 219.3L1123.0 215.1ZM1021.0 285.6L1018.6 290.1L1015.9 286.1ZM1008.0 280.0L1005.9 284.7L1003.0 280.9ZM1001.2 299.6L999.0 304.2L996.1 300.4ZM1153.7 145.7L1151.8 150.5L1148.7 146.8ZM1003.1 281.4L1000.4 285.7L998.0 281.5ZM1019.4 263.8L1016.7 268.1L1014.3 264.0ZM1138.0 164.1L1135.8 168.7L1132.9 164.8ZM1005.8 283.6L1002.6 287.6L1000.7 283.1ZM1051.0 270.3L1048.6 274.8L1045.9 270.8ZM1012.3 259.5L1010.6 264.3L1007.3 260.7ZM1105.6 166.6L1103.6 171.3L1100.6 167.5ZM981.7 287.6L979.9 292.4L976.7 288.7ZM1099.4 216.2L1095.6 219.5L1094.5 214.8ZM1121.0 181.8L1119.0 186.5L1116.0 182.7ZM1114.3 210.6L1111.8 215.0L1109.2 210.9ZM1046.5 264.4L1044.7 269.2L1041.5 265.6ZM1030.7 287.1L1029.0 291.9L1025.8 288.3ZM976.8 304.7L974.1 309.1L971.7 305.0ZM1089.7 220.5L1086.1 224.2L1084.7 219.6ZM1072.2 242.2L1069.2 246.3L1067.1 242.0ZM1142.5 147.3L1140.5 152.0L1137.5 148.2ZM1151.6 138.4L1149.4 143.0L1146.6 139.2ZM1136.0 128.3L1132.7 132.2L1130.9 127.7ZM1072.0 218.4L1069.4 222.8L1066.9 218.7ZM1104.8 184.0L1101.7 188.0L1099.7 183.6ZM1001.8 302.6L999.6 307.2L996.8 303.4ZM1112.8 189.0L1110.6 193.6L1107.8 189.7ZM1075.3 239.0L1072.6 243.4L1070.2 239.2ZM1046.7 229.1L1044.8 233.8L1041.7 230.1ZM1123.7 158.6L1121.0 162.9L1118.6 158.8ZM999.1 294.5L997.6 299.3L994.2 295.9ZM1074.1 189.6L1071.7 194.1L1069.0 190.1ZM1052.1 236.3L1048.5 239.8L1047.1 235.2ZM1096.6 228.2L1094.1 232.6L1091.5 228.5ZM1090.9 222.2L1089.7 227.2L1086.1 224.0ZM1056.6 233.6L1053.7 237.8L1051.5 233.5ZM1035.2 283.1L1032.5 287.4L1030.1 283.3ZM1151.6 129.7L1148.7 133.9L1146.5 129.6ZM981.5 282.2L978.9 286.5L976.4 282.4ZM1058.1 258.3L1054.3 261.8L1053.1 257.2ZM1062.8 248.7L1060.4 253.2L1057.8 249.2ZM1134.4 172.3L1131.5 176.5L1129.3 172.2ZM1118.0 192.6L1115.7 197.1L1112.9 193.2ZM1088.8 178.6L1086.8 183.2L1083.8 179.5ZM1167.6 119.3L1165.4 123.9L1162.6 120.0ZM993.2 311.4L989.7 315.1L988.2 310.5ZM1097.2 164.6L1094.1 168.7L1092.1 164.4ZM1074.2 238.1L1072.3 242.9L1069.2 239.2ZM1026.0 221.3L1023.9 226.0L1020.9 222.2ZM1017.9 279.4L1014.4 283.1L1012.9 278.6ZM1120.6 156.6L1118.9 161.4L1115.7 157.9ZM1079.0 246.2L1075.7 250.1L1073.9 245.6ZM1062.7 260.4L1059.8 264.7L1057.6 260.4ZM1174.2 98.2L1170.9 102.0L1169.1 97.5ZM1137.7 173.6L1135.2 178.1L1132.6 174.0ZM1018.3 289.7L1015.7 294.1L1013.2 290.0ZM1116.9 165.5L1113.3 169.2L1111.9 164.6ZM1166.4 106.9L1163.7 111.3L1161.3 107.2ZM1067.7 244.1L1066.2 248.9L1062.8 245.5ZM1023.6 286.5L1020.2 290.3L1018.6 285.8ZM1043.0 269.7L1040.8 274.3L1037.9 270.4ZM1085.7 224.5L1083.3 229.0L1080.6 225.1ZM1080.6 220.8L1077.7 225.0L1075.5 220.8ZM1179.5 107.4L1176.6 111.6L1174.4 107.4ZM1057.9 233.4L1055.1 237.6L1052.8 233.4ZM1046.0 266.0L1044.4 270.8L1041.1 267.4ZM1039.2 233.6L1036.6 238.0L1034.1 233.9ZM987.8 280.2L986.2 285.1L982.9 281.7ZM1136.2 174.3L1133.6 178.7L1131.1 174.6ZM1148.7 160.7L1146.8 165.4L1143.7 161.7ZM1128.2 157.5L1125.9 162.0L1123.2 158.1ZM1074.5 201.8L1072.4 206.4L1069.5 202.6ZM1015.7 279.8L1013.0 284.2L1010.6 280.0ZM1144.1 121.6L1142.3 126.4L1139.1 122.9ZM1024.7 240.7L1021.6 244.8L1019.6 240.5ZM1145.2 134.0L1142.8 138.5L1140.2 134.5ZM1106.3 175.6L1103.3 179.7L1101.2 175.4ZM1096.2 202.3L1093.2 206.4L1091.2 202.0ZM1138.2 162.5L1135.2 166.6L1133.1 162.3ZM1054.1 242.6L1051.6 247.1L1049.0 243.0ZM1059.9 231.9L1057.5 236.3L1054.8 232.3ZM1019.0 292.6L1015.3 296.1L1014.0 291.5ZM1019.0 252.5L1016.4 256.9L1013.9 252.8ZM999.5 249.0L996.4 253.1L994.4 248.7ZM1049.5 260.6L1046.5 264.7L1044.4 260.4ZM1110.3 157.2L1107.7 161.6L1105.2 157.5ZM974.0 288.5L971.9 293.2L969.0 289.3ZM1060.9 223.3L1058.3 227.7L1055.8 223.5ZM984.7 312.8L982.7 317.5L979.7 313.8ZM1123.5 163.4L1120.0 167.0L1118.5 162.5ZM1015.2 260.7L1012.5 265.0L1010.1 260.8ZM1004.4 303.1L1000.9 306.7L999.4 302.2ZM1117.6 170.3L1115.1 174.8L1112.5 170.8ZM1173.5 96.1L1170.7 100.3L1168.4 96.1ZM1138.4 175.8L1136.0 180.3L1133.3 176.3ZM1085.5 223.7L1082.7 228.0L1080.4 223.8ZM1083.3 194.5L1080.9 199.0L1078.3 195.1ZM1058.3 254.7L1056.0 259.2L1053.2 255.3ZM1021.6 238.5L1018.3 242.4L1016.6 237.9ZM1166.4 112.5L1164.7 117.3L1161.5 113.7ZM1110.0 207.3L1106.9 211.3L1104.9 206.9ZM1165.5 103.7L1162.6 107.9L1160.4 103.7ZM993.3 284.3L990.5 288.5L988.2 284.3ZM987.9 272.6L986.1 277.4L983.0 273.7ZM1055.2 243.7L1052.6 248.2L1050.1 244.1ZM1069.8 184.4L1067.2 188.8L1064.7 184.7ZM971.1 298.8L968.5 303.2L966.0 299.1ZM1001.3 265.3L998.7 269.7L996.2 265.6ZM1183.2 108.1L1181.9 113.0L1178.4 109.6ZM1010.3 271.3L1006.8 275.0L1005.3 270.5ZM1123.4 177.5L1121.9 182.3L1118.5 178.9ZM1024.0 277.7L1020.7 281.6L1018.9 277.1ZM1043.8 232.8L1041.0 237.0L1038.7 232.8ZM1117.7 186.4L1114.0 189.9L1112.7 185.3ZM1014.1 256.3L1012.9 261.3L1009.3 258.1ZM1024.5 277.5L1022.3 282.1L1019.4 278.2ZM1099.3 188.4L1097.2 193.0L1094.3 189.2ZM1126.0 175.7L1123.1 179.9L1120.9 175.6Z" fill="#5265b3"/></g>
<g opacity="0.95"><path d="M1043.0 236.5L1051.1 232.6M1040.9 248.4L1053.7 241.6M1106.2 219.9L1118.7 212.8M1117.8 223.3L1124.6 219.4M1018.2 274.6L1025.7 272.1M1043.2 239.0L1051.4 233.6M1047.5 272.8L1052.3 270.0M1060.2 253.0L1066.8 249.5M1090.4 197.4L1099.7 193.8M1023.6 268.9L1029.4 264.4M1075.3 218.5L1088.2 211.3M1036.9 259.3L1042.5 257.2M1009.5 284.8L1015.5 279.6M1117.8 221.0L1125.4 216.8M1007.4 300.4L1013.5 296.8M1122.4 221.1L1129.6 216.2M1033.2 261.4L1041.7 255.3M1060.8 247.0L1071.5 240.6M1025.2 260.1L1033.4 253.6M1022.2 266.8L1027.9 263.3M1103.0 182.4L1116.1 175.0M1083.7 212.9L1094.4 204.5M1073.9 210.1L1080.5 205.9M1052.0 240.7L1062.1 235.2M1076.7 243.5L1083.9 239.5M1058.5 228.9L1063.2 225.5M1086.2 198.2L1092.8 193.5M1039.5 260.8L1051.1 255.7M1014.5 292.1L1022.7 288.7M1019.0 274.1L1026.1 272.1M1045.4 239.2L1055.0 231.7M1077.6 237.6L1085.7 231.0M1112.3 214.1L1123.6 208.4M1003.4 295.5L1008.9 293.2M1014.2 288.4L1027.1 282.0M1038.4 250.0L1047.7 244.5M1063.4 227.1L1068.6 225.1M1063.4 234.5L1072.1 225.3M1081.8 212.3L1095.2 204.5M1097.4 214.9L1107.0 205.9M1106.2 202.4L1113.1 198.0M1079.8 231.8L1089.4 224.2M1101.5 206.5L1112.2 201.4M1107.6 208.8L1115.5 202.4M1048.9 253.1L1059.4 244.1M1014.3 277.2L1021.5 273.2M1016.2 294.5L1024.3 289.0M1077.8 228.7L1088.9 222.5M1066.5 231.7L1072.5 228.6M1017.1 293.8L1024.5 290.8M1069.8 240.1L1078.9 234.6M1034.8 273.1L1040.1 268.7M1058.0 254.7L1063.3 251.5M1043.0 259.8L1052.2 253.5M1091.1 217.8L1099.1 214.6M1006.3 313.3L1011.2 310.5M1093.4 191.2L1101.5 185.7M1097.2 219.6L1106.4 213.1M1107.9 194.1L1119.6 187.9M1032.7 284.4L1043.3 276.6M1086.3 210.1L1096.1 206.0M1106.2 218.3L1119.1 210.2M1006.5 272.6L1015.0 268.0M1031.5 261.2L1042.0 253.7M1088.7 208.7L1096.9 205.5M1024.5 272.8L1033.3 263.2M1091.0 222.8L1096.7 217.2M1014.5 299.9L1021.3 294.4M1073.5 245.4L1079.1 240.6M1067.6 216.4L1072.9 211.3M1027.3 286.5L1033.9 283.5M1065.7 246.3L1075.3 239.5M1038.2 257.2L1043.2 253.5M1046.8 239.2L1055.9 232.6M1028.4 248.5L1037.5 242.4M1100.2 212.2L1110.2 205.8M1044.7 249.1L1055.1 241.5M1102.8 188.5L1109.9 182.8M1081.2 211.0L1089.5 206.6M1075.0 212.9L1081.3 210.4M1125.0 223.8L1137.3 214.6M1104.4 194.9L1110.1 190.3M1011.9 274.9L1022.8 266.9M1073.3 236.2L1082.1 229.5M1062.5 256.8L1070.9 250.2M1029.5 259.0L1042.1 254.8M1062.3 223.8L1067.6 218.7M1052.3 250.1L1063.0 242.6M1035.0 266.1L1043.4 260.8M1064.2 231.4L1072.7 226.1M1066.3 236.4L1080.2 232.4M1032.7 261.1L1040.5 255.8M1027.2 270.3L1034.3 266.9M1040.5 275.1L1046.4 270.7M1046.4 248.9L1052.4 242.4M1023.4 290.3L1037.1 283.3M1108.5 224.8L1121.3 218.9M1119.2 224.7L1123.5 220.3M1018.7 299.2L1029.3 293.4M1060.8 244.6L1068.8 237.9M1089.8 204.9L1098.1 200.2M1052.9 226.8L1061.3 220.1M1106.0 203.5L1118.3 195.0M1051.7 242.3L1057.8 237.1M1026.7 264.5L1036.1 255.5M1059.7 226.0L1066.5 220.8M1041.5 248.7L1050.7 240.6M1123.9 222.7L1134.1 217.2M1072.8 240.9L1084.9 231.5M1009.4 288.9L1018.3 283.7M1118.3 225.3L1127.7 217.6M1069.7 251.8L1075.0 248.0M1034.9 280.1L1040.9 276.2M1041.4 267.2L1052.3 261.0M1083.2 227.8L1090.9 222.3M1030.5 271.6L1042.8 263.0M1046.0 248.0L1052.9 242.1M1033.5 268.3L1039.9 262.6M1107.0 188.1L1118.6 181.6M1086.5 202.3L1098.5 196.3M1067.2 219.5L1077.7 212.4M1058.0 259.0L1065.8 253.9M1116.0 208.9L1125.3 199.9M1086.2 197.0L1098.0 189.9M1084.0 215.0L1089.7 211.9M1026.0 253.1L1037.3 246.7M1011.1 303.5L1021.7 300.1M1077.7 210.0L1089.7 204.0M1095.0 213.6L1107.8 207.8M1064.6 245.1L1070.0 241.3M1064.7 217.0L1071.4 209.8M1008.5 275.7L1014.7 273.0M1002.8 276.3L1011.2 271.0M1069.6 216.9L1081.9 209.1M1078.0 240.4L1085.6 236.9M1099.8 212.4L1110.3 206.8M1084.4 236.3L1090.4 233.8M1003.9 293.3L1016.5 286.3M1042.6 265.5L1052.5 258.7M1018.5 301.3L1028.9 296.8M1042.5 275.9L1052.3 269.4M1097.0 213.1L1109.1 208.2M1011.6 265.1L1020.1 260.2M1085.7 227.1L1090.4 223.3M1084.6 210.2L1096.2 202.1M1056.9 254.3L1061.8 249.7M1033.3 254.6L1042.5 252.7M1055.0 230.6L1066.0 226.4M1062.3 242.1L1069.6 238.1M1014.4 269.9L1020.7 263.7M1068.3 223.1L1075.0 220.4M1024.6 268.0L1033.9 261.5M1041.0 266.1L1054.6 261.5M1037.6 277.0L1049.6 272.2M1014.6 291.6L1024.9 285.2M1063.9 256.6L1071.6 250.7M1020.4 265.2L1030.3 259.6M1093.0 198.1L1099.6 193.1M1072.6 244.0L1082.9 238.1M1118.9 225.3L1131.3 220.8M1012.4 291.3L1019.6 288.1M1065.8 232.9L1073.2 229.4M1015.9 280.2L1027.9 274.6M1047.8 229.8L1060.8 224.9M1087.0 225.7L1097.4 219.0M1018.3 289.3L1025.0 286.2M1025.4 296.0L1033.1 289.3M1109.7 215.2L1117.8 209.6M1057.5 222.5L1064.7 218.4M1061.1 257.1L1069.9 253.3M1074.2 235.9L1084.7 226.7M1094.8 220.8L1100.9 217.0M1080.3 209.5L1090.7 205.2M1104.0 196.2L1115.4 191.7M1015.8 269.0L1022.0 263.0M1090.9 216.3L1097.1 213.5M1028.1 283.3L1038.7 272.6M1021.8 288.8L1032.7 285.5M1048.4 249.9L1058.6 245.4M1094.8 194.1L1106.4 185.4M1031.9 272.4L1042.2 263.4M1025.9 250.8L1032.4 245.1M1009.8 289.0L1014.3 284.3M1055.0 232.4L1066.2 226.6M1041.1 249.4L1045.9 245.5M1004.9 303.4L1018.1 295.6M1124.9 221.4L1137.0 217.2M1101.8 193.4L1113.2 187.9M1076.9 242.6L1085.8 235.2M1105.8 225.4L1115.6 220.2M1021.1 280.6L1029.3 274.2M1085.2 208.4L1092.4 204.4M1088.8 228.9L1097.7 219.5M1117.4 200.4L1126.4 197.0M1033.0 276.4L1038.1 274.0M1051.2 270.5L1062.2 265.1M1095.1 192.4L1101.8 189.0M1068.3 211.2L1078.4 204.9M1120.2 206.6L1129.7 201.3M1052.8 247.3L1059.9 244.5M1052.2 260.1L1057.7 256.7M1096.6 217.3L1105.8 208.3M1106.3 206.5L1111.5 203.9M1058.8 253.0L1063.9 248.7M1046.6 245.5L1052.7 238.4M1112.1 219.5L1123.4 213.3M1019.4 258.8L1024.5 255.6M1093.0 200.8L1103.4 189.8M1028.9 265.9L1040.4 260.7M1036.3 252.1L1045.3 243.9M1114.4 206.2L1120.2 201.8M1034.4 267.3L1039.8 263.1M1013.0 294.2L1019.4 290.4M1123.0 200.5L1132.4 194.3M1098.2 194.7L1110.8 190.7M1047.4 238.9L1055.1 234.3M1014.0 297.9L1024.0 291.3M1080.9 239.8L1089.3 233.1M1057.1 235.3L1063.7 230.0M1029.5 279.2L1038.0 273.2" stroke="#a9b6df" stroke-width="1.5" fill="none"/><path d="M1055.1 230.6L1052.1 234.7L1050.0 230.4ZM1057.6 239.4L1054.8 243.7L1052.5 239.5ZM1122.6 210.6L1119.9 214.9L1117.5 210.8ZM1128.6 217.2L1125.8 221.5L1123.5 217.3ZM1029.9 270.6L1026.4 274.3L1024.9 269.8ZM1055.1 231.1L1052.7 235.6L1050.1 231.6ZM1056.1 267.7L1053.5 272.0L1051.0 267.9ZM1070.7 247.4L1067.9 251.6L1065.6 247.4ZM1103.8 192.2L1100.5 196.0L1098.8 191.6ZM1033.0 261.6L1030.9 266.2L1028.0 262.5ZM1092.1 209.1L1089.4 213.4L1087.0 209.2ZM1046.6 255.5L1043.3 259.4L1041.6 254.9ZM1018.9 276.6L1017.1 281.4L1013.9 277.8ZM1129.4 214.5L1126.6 218.8L1124.3 214.7ZM1017.3 294.5L1014.7 298.9L1012.2 294.7ZM1133.3 213.7L1130.9 218.2L1128.2 214.3ZM1045.3 252.6L1043.1 257.2L1040.3 253.3ZM1075.3 238.3L1072.7 242.7L1070.2 238.6ZM1036.9 250.8L1034.9 255.5L1031.9 251.7ZM1031.7 260.9L1029.2 265.3L1026.6 261.2ZM1120.0 172.8L1117.3 177.1L1114.9 173.0ZM1097.9 201.7L1095.9 206.3L1092.9 202.6ZM1084.4 203.5L1081.8 208.0L1079.3 203.9ZM1066.0 233.0L1063.2 237.3L1060.9 233.1ZM1087.9 237.3L1085.1 241.6L1082.8 237.4ZM1066.9 222.9L1064.6 227.5L1061.8 223.6ZM1096.4 190.9L1094.2 195.4L1091.3 191.6ZM1055.2 253.9L1052.1 257.9L1050.1 253.5ZM1026.9 286.9L1023.6 290.9L1021.8 286.4ZM1030.4 270.8L1026.8 274.4L1025.4 269.8ZM1058.5 228.9L1056.5 233.6L1053.5 229.8ZM1089.2 228.2L1087.2 232.9L1084.2 229.1ZM1127.6 206.4L1124.7 210.6L1122.5 206.3ZM1013.0 291.4L1009.8 295.4L1007.9 291.0ZM1031.1 279.9L1028.2 284.1L1026.0 279.8ZM1051.6 242.2L1048.9 246.6L1046.5 242.5ZM1072.8 223.4L1069.5 227.3L1067.8 222.8ZM1075.2 222.0L1073.8 226.9L1070.3 223.6ZM1099.1 202.2L1096.4 206.6L1094.0 202.4ZM1110.3 202.8L1108.6 207.7L1105.3 204.2ZM1116.9 195.5L1114.4 200.0L1111.8 195.9ZM1093.0 221.4L1090.9 226.0L1087.9 222.3ZM1116.2 199.5L1113.2 203.6L1111.1 199.2ZM1118.9 199.6L1117.0 204.3L1113.9 200.6ZM1062.8 241.1L1061.0 245.9L1057.9 242.2ZM1025.5 271.0L1022.7 275.3L1020.4 271.1ZM1028.0 286.4L1025.6 290.9L1022.9 287.0ZM1092.8 220.3L1090.1 224.6L1087.7 220.4ZM1076.5 226.5L1073.6 230.7L1071.4 226.5ZM1028.6 289.1L1025.4 293.0L1023.6 288.6ZM1082.8 232.3L1080.2 236.6L1077.7 232.5ZM1043.6 265.8L1041.7 270.5L1038.6 266.8ZM1067.2 249.3L1064.5 253.6L1062.1 249.5ZM1055.9 250.9L1053.5 255.5L1050.8 251.5ZM1103.3 212.9L1100.0 216.8L1098.3 212.4ZM1015.1 308.2L1012.4 312.6L1010.0 308.4ZM1105.2 183.2L1102.8 187.7L1100.1 183.7ZM1110.1 210.5L1107.8 215.1L1105.1 211.1ZM1123.6 185.7L1120.7 190.0L1118.5 185.7ZM1046.9 274.0L1044.7 278.6L1041.9 274.7ZM1100.3 204.2L1097.0 208.2L1095.2 203.8ZM1122.9 207.9L1120.3 212.3L1117.8 208.2ZM1018.9 265.9L1016.1 270.1L1013.8 265.9ZM1045.7 251.0L1043.4 255.6L1040.6 251.7ZM1101.1 203.9L1097.7 207.7L1096.0 203.3ZM1036.4 259.8L1035.1 264.8L1031.6 261.5ZM1099.8 214.0L1098.4 218.9L1095.0 215.5ZM1024.9 291.6L1022.8 296.3L1019.8 292.5ZM1082.5 237.6L1080.6 242.4L1077.5 238.7ZM1076.2 208.2L1074.6 213.1L1071.2 209.6ZM1038.0 281.7L1034.9 285.7L1032.9 281.3ZM1079.0 236.9L1076.7 241.4L1073.9 237.5ZM1046.8 250.8L1044.7 255.4L1041.8 251.5ZM1059.6 230.0L1057.3 234.6L1054.5 230.7ZM1041.3 239.9L1038.9 244.4L1036.2 240.4ZM1113.9 203.4L1111.5 207.8L1108.8 203.8ZM1058.7 238.8L1056.5 243.4L1053.7 239.6ZM1113.3 179.9L1111.4 184.6L1108.3 180.9ZM1093.5 204.5L1090.6 208.7L1088.4 204.5ZM1085.5 208.8L1082.2 212.7L1080.5 208.2ZM1141.0 212.0L1138.8 216.6L1135.9 212.7ZM1113.5 187.5L1111.6 192.2L1108.5 188.5ZM1026.4 264.2L1024.2 268.8L1021.4 264.9ZM1085.6 226.7L1083.5 231.4L1080.6 227.6ZM1074.5 247.4L1072.4 252.1L1069.4 248.3ZM1046.4 253.3L1042.9 257.0L1041.4 252.5ZM1070.9 215.6L1069.3 220.5L1065.9 217.0ZM1066.7 240.0L1064.4 244.5L1061.7 240.6ZM1047.2 258.4L1044.7 262.9L1042.1 258.8ZM1076.5 223.7L1074.0 228.1L1071.4 224.1ZM1084.5 231.1L1080.9 234.7L1079.5 230.1ZM1044.2 253.2L1041.8 257.8L1039.1 253.8ZM1038.3 264.9L1035.3 269.0L1033.2 264.7ZM1050.0 268.0L1047.8 272.6L1045.0 268.8ZM1055.5 239.2L1054.2 244.1L1050.7 240.8ZM1041.1 281.2L1038.2 285.4L1036.0 281.2ZM1125.4 217.0L1122.3 221.0L1120.3 216.7ZM1126.7 217.0L1125.2 221.9L1121.8 218.6ZM1033.2 291.3L1030.4 295.5L1028.1 291.3ZM1072.3 235.1L1070.3 239.8L1067.3 236.1ZM1102.0 197.9L1099.3 202.2L1096.9 198.1ZM1064.8 217.3L1062.8 222.0L1059.8 218.2ZM1122.0 192.5L1119.7 197.0L1116.9 193.1ZM1061.2 234.2L1059.3 238.9L1056.2 235.3ZM1039.4 252.4L1037.8 257.2L1034.4 253.8ZM1070.1 218.1L1068.0 222.7L1065.1 218.9ZM1054.1 237.6L1052.3 242.4L1049.1 238.8ZM1138.0 215.1L1135.2 219.4L1132.9 215.1ZM1088.5 228.8L1086.4 233.4L1083.4 229.6ZM1022.1 281.4L1019.5 285.7L1017.0 281.6ZM1131.1 214.8L1129.2 219.5L1126.1 215.8ZM1078.7 245.3L1076.4 249.9L1073.6 246.0ZM1044.6 273.8L1042.2 278.2L1039.6 274.2ZM1056.2 258.8L1053.5 263.1L1051.1 258.9ZM1094.6 219.7L1092.3 224.3L1089.5 220.4ZM1046.5 260.4L1044.1 265.0L1041.4 261.0ZM1056.3 239.1L1054.4 243.9L1051.3 240.3ZM1043.2 259.6L1041.5 264.4L1038.3 260.8ZM1122.5 179.4L1119.7 183.7L1117.4 179.5ZM1102.5 194.3L1099.5 198.5L1097.4 194.2ZM1081.5 209.8L1079.1 214.3L1076.4 210.4ZM1069.5 251.5L1067.1 255.9L1064.4 251.9ZM1128.6 196.7L1127.0 201.6L1123.7 198.2ZM1101.9 187.6L1099.2 192.0L1096.8 187.9ZM1093.7 209.8L1090.9 214.1L1088.6 209.8ZM1041.2 244.4L1038.5 248.8L1036.1 244.6ZM1026.0 298.7L1022.5 302.4L1021.0 297.8ZM1093.7 201.9L1090.7 206.1L1088.6 201.8ZM1111.9 206.0L1108.8 210.0L1106.9 205.6ZM1073.6 238.7L1071.3 243.3L1068.6 239.4ZM1074.4 206.5L1073.1 211.5L1069.6 208.2ZM1018.8 271.3L1015.6 275.2L1013.7 270.8ZM1015.0 268.6L1012.4 273.0L1009.9 269.0ZM1085.7 206.7L1083.2 211.1L1080.7 207.0ZM1089.7 235.0L1086.6 239.1L1084.6 234.8ZM1114.3 204.7L1111.5 208.9L1109.2 204.7ZM1094.6 232.1L1091.4 236.0L1089.5 231.6ZM1020.5 284.1L1017.7 288.4L1015.4 284.2ZM1056.2 256.1L1053.9 260.6L1051.1 256.7ZM1033.1 295.0L1029.9 299.0L1028.0 294.6ZM1056.1 267.0L1053.6 271.5L1051.0 267.4ZM1113.3 206.5L1110.0 210.4L1108.2 206.0ZM1024.0 258.0L1021.3 262.3L1018.9 258.1ZM1093.9 220.4L1091.9 225.1L1088.9 221.4ZM1099.9 199.5L1097.6 204.1L1094.8 200.1ZM1065.1 246.7L1063.5 251.5L1060.2 248.0ZM1046.9 251.8L1043.0 255.0L1042.0 250.3ZM1070.2 224.8L1066.8 228.6L1065.1 224.1ZM1073.6 236.0L1070.8 240.3L1068.5 236.0ZM1023.9 260.6L1022.4 265.4L1019.0 262.0ZM1079.2 218.8L1075.9 222.7L1074.1 218.2ZM1037.6 258.9L1035.3 263.5L1032.5 259.5ZM1058.9 260.0L1055.4 263.8L1053.8 259.2ZM1053.7 270.6L1050.4 274.5L1048.7 270.0ZM1028.7 282.8L1026.1 287.2L1023.6 283.1ZM1075.2 248.0L1073.1 252.6L1070.1 248.8ZM1034.2 257.4L1031.5 261.7L1029.1 257.5ZM1103.2 190.4L1101.1 195.0L1098.2 191.2ZM1086.8 235.8L1084.1 240.2L1081.7 236.0ZM1135.6 219.3L1132.1 223.1L1130.5 218.6ZM1023.7 286.2L1020.6 290.2L1018.6 285.9ZM1077.3 227.5L1074.2 231.6L1072.2 227.2ZM1032.0 272.7L1028.9 276.8L1026.9 272.4ZM1065.0 223.4L1061.6 227.2L1060.0 222.7ZM1101.1 216.6L1098.7 221.0L1096.1 217.0ZM1029.1 284.2L1026.0 288.3L1024.0 284.0ZM1036.6 286.4L1034.7 291.1L1031.6 287.5ZM1121.5 207.0L1119.2 211.6L1116.4 207.6ZM1068.6 216.1L1065.9 220.5L1063.5 216.3ZM1074.0 251.5L1070.8 255.5L1068.9 251.1ZM1088.1 223.8L1086.3 228.5L1083.1 224.9ZM1104.7 214.7L1102.1 219.1L1099.6 215.0ZM1094.8 203.5L1091.6 207.5L1089.7 203.0ZM1119.6 190.0L1116.3 193.9L1114.5 189.5ZM1025.3 259.8L1023.7 264.7L1020.4 261.2ZM1101.2 211.7L1098.1 215.7L1096.1 211.3ZM1041.9 269.4L1040.4 274.3L1037.0 270.9ZM1037.0 284.2L1033.4 287.8L1032.0 283.2ZM1062.7 243.5L1059.6 247.6L1057.6 243.2ZM1110.0 182.7L1107.9 187.3L1105.0 183.5ZM1045.6 260.5L1043.8 265.2L1040.6 261.6ZM1035.8 242.1L1034.0 246.9L1030.9 243.3ZM1017.4 281.0L1016.1 285.9L1012.6 282.6ZM1070.2 224.5L1067.3 228.7L1065.1 224.5ZM1049.4 242.7L1047.4 247.4L1044.3 243.7ZM1022.0 293.3L1019.3 297.7L1016.9 293.5ZM1141.2 215.7L1137.8 219.4L1136.2 214.9ZM1117.3 185.9L1114.3 190.0L1112.2 185.7ZM1089.2 232.3L1087.3 237.0L1084.2 233.3ZM1119.6 218.1L1116.7 222.3L1114.5 218.1ZM1032.9 271.4L1030.8 276.1L1027.8 272.3ZM1096.3 202.2L1093.5 206.5L1091.2 202.3ZM1100.8 216.3L1099.4 221.2L1096.0 217.9ZM1130.7 195.4L1127.3 199.3L1125.6 194.8ZM1042.2 272.1L1039.1 276.2L1037.1 271.8ZM1066.2 263.1L1063.2 267.2L1061.1 262.9ZM1105.8 186.9L1102.9 191.1L1100.7 186.8ZM1082.2 202.5L1079.7 206.9L1077.1 202.9ZM1133.7 199.1L1130.9 203.4L1128.6 199.2ZM1064.1 242.9L1060.7 246.8L1059.0 242.3ZM1061.6 254.3L1059.0 258.7L1056.5 254.6ZM1109.0 205.1L1107.5 210.0L1104.1 206.6ZM1115.5 201.9L1112.5 206.1L1110.4 201.8ZM1067.3 245.8L1065.5 250.5L1062.4 246.8ZM1055.6 235.0L1054.5 239.9L1050.9 236.8ZM1127.3 211.1L1124.6 215.4L1122.2 211.2ZM1028.3 253.2L1025.8 257.6L1023.2 253.6ZM1106.5 186.5L1105.1 191.4L1101.6 188.1ZM1044.5 258.9L1041.4 262.9L1039.4 258.5ZM1048.7 240.8L1047.0 245.6L1043.7 242.1ZM1123.8 199.1L1121.6 203.8L1118.7 199.9ZM1043.4 260.4L1041.3 265.0L1038.3 261.2ZM1023.3 288.0L1020.7 292.4L1018.2 288.3ZM1136.2 191.8L1133.7 196.3L1131.1 192.3ZM1115.1 189.4L1111.5 193.0L1110.1 188.5ZM1059.0 232.0L1056.3 236.4L1053.9 232.3ZM1027.7 288.8L1025.3 293.3L1022.7 289.3ZM1092.8 230.3L1090.8 234.9L1087.8 231.2ZM1067.2 227.1L1065.2 231.8L1062.2 228.1ZM1041.7 270.6L1039.4 275.1L1036.7 271.2Z" fill="#8594cf"/></g>
<g opacity="0.95"><path d="M1124.8 223.1L1140.5 224.3M1142.8 212.8L1155.5 212.5M1145.2 174.1L1158.2 174.5M1115.2 198.9L1124.6 199.5M1116.9 199.3L1130.1 200.0M1125.2 179.4L1142.5 178.0M1154.6 170.3L1164.9 170.9M1137.7 188.5L1156.2 188.7M1150.7 180.6L1159.9 181.3M1119.7 224.6L1137.0 226.2M1136.8 201.9L1154.1 201.1M1119.1 221.7L1130.6 221.0M1099.6 202.3L1118.3 204.9M1158.2 176.7L1172.4 177.5M1094.6 189.0L1105.1 189.4M1120.2 182.8L1132.5 182.7M1144.6 191.9L1162.6 191.6M1155.8 196.1L1168.6 195.9M1162.5 188.3L1172.0 187.9M1146.5 195.3L1159.6 196.1M1124.6 174.7L1134.3 174.7M1120.2 198.5L1139.1 199.1M1149.9 213.3L1165.2 212.2M1101.1 204.6L1113.7 204.4M1126.9 170.1L1137.3 170.8M1121.6 180.6L1132.5 180.7M1149.2 188.0L1159.3 189.7M1136.5 209.8L1145.5 210.1M1107.1 211.5L1118.8 211.6M1144.5 182.7L1159.2 182.6M1132.5 177.0L1148.7 177.2M1127.0 198.6L1142.9 198.9M1155.7 181.4L1172.5 181.7M1133.1 197.3L1151.1 196.6M1105.1 192.4L1121.8 192.5M1101.5 210.6L1117.6 211.2M1117.9 191.8L1127.3 191.5M1114.4 222.3L1126.6 223.2M1149.6 200.3L1165.5 199.3M1138.9 211.1L1150.9 211.6" stroke="#b9c4e8" stroke-width="1.5" fill="none"/><path d="M1145.4 224.7L1140.3 226.9L1140.7 221.7ZM1160.5 212.3L1155.5 215.1L1155.4 209.9ZM1163.2 174.6L1158.1 177.1L1158.3 171.9ZM1129.6 199.8L1124.4 202.1L1124.8 196.9ZM1135.1 200.2L1130.0 202.6L1130.3 197.4ZM1147.5 177.6L1142.8 180.6L1142.3 175.4ZM1169.9 171.2L1164.8 173.5L1165.1 168.3ZM1161.2 188.8L1156.2 191.3L1156.2 186.1ZM1164.9 181.7L1159.7 183.9L1160.1 178.7ZM1142.0 226.7L1136.8 228.8L1137.3 223.7ZM1159.1 200.8L1154.2 203.7L1154.0 198.5ZM1135.6 220.8L1130.8 223.6L1130.5 218.5ZM1123.2 205.6L1117.9 207.5L1118.6 202.3ZM1177.4 177.8L1172.3 180.1L1172.6 174.9ZM1110.1 189.6L1105.1 192.0L1105.2 186.8ZM1137.5 182.6L1132.5 185.3L1132.5 180.1ZM1167.6 191.5L1162.7 194.2L1162.6 189.0ZM1173.6 195.8L1168.7 198.5L1168.6 193.3ZM1177.0 187.6L1172.1 190.5L1171.9 185.3ZM1164.5 196.4L1159.4 198.7L1159.7 193.5ZM1139.3 174.7L1134.3 177.3L1134.3 172.1ZM1144.1 199.2L1139.0 201.7L1139.1 196.5ZM1170.1 211.8L1165.4 214.8L1165.0 209.6ZM1118.7 204.3L1113.8 207.0L1113.7 201.8ZM1142.2 171.1L1137.1 173.4L1137.4 168.2ZM1137.5 180.8L1132.5 183.3L1132.5 178.1ZM1164.2 190.5L1158.8 192.2L1159.7 187.1ZM1150.5 210.2L1145.4 212.7L1145.6 207.5ZM1123.8 211.7L1118.7 214.2L1118.8 209.0ZM1164.2 182.6L1159.2 185.2L1159.2 180.0ZM1153.7 177.3L1148.7 179.8L1148.7 174.6ZM1147.9 199.0L1142.8 201.5L1142.9 196.3ZM1177.5 181.8L1172.4 184.3L1172.5 179.1ZM1156.1 196.4L1151.2 199.2L1151.0 194.0ZM1126.8 192.6L1121.8 195.1L1121.9 189.9ZM1122.6 211.4L1117.5 213.8L1117.7 208.6ZM1132.3 191.4L1127.3 194.1L1127.2 188.9ZM1131.6 223.6L1126.4 225.8L1126.8 220.6ZM1170.5 199.0L1165.6 201.9L1165.3 196.7ZM1155.9 211.8L1150.8 214.2L1151.0 209.0Z" fill="#8e9dd4"/></g>
<g opacity="0.9"><path d="M1417.9 287.9L1420.4 289.3M1253.3 182.4L1257.8 186.2M1357.6 228.7L1359.8 233.1M1253.3 187.9L1259.2 190.9M1405.1 356.4L1407.0 358.4M1201.1 122.7L1205.8 125.4M1349.9 235.2L1352.5 237.3M1259.1 166.6L1262.4 168.8M1338.2 221.3L1340.5 223.0M1303.3 232.3L1305.5 235.4M1285.0 180.2L1289.0 182.2M1289.3 199.6L1291.7 202.2M1369.4 287.4L1373.7 291.9M1306.3 216.2L1309.5 218.2M1322.8 246.7L1327.0 248.8M1258.8 199.9L1263.5 201.7M1379.4 267.6L1382.3 272.5M1291.4 197.5L1293.2 198.8M1421.8 304.5L1425.7 309.4M1340.8 257.4L1344.0 260.0M1184.0 122.7L1187.5 124.6M1321.4 238.6L1323.7 241.3M1387.4 273.3L1390.7 276.5M1230.6 179.4L1233.3 180.8M1426.7 385.3L1429.7 389.9M1303.6 218.3L1305.6 221.9M1446.3 399.3L1447.7 401.1M1296.5 232.5L1299.9 235.1M1258.8 195.3L1262.1 197.3M1334.2 235.9L1336.2 238.5M1308.7 223.9L1310.7 225.7M1282.5 206.5L1285.7 208.2M1446.1 382.0L1448.4 386.6M1319.6 242.0L1321.3 244.0M1325.5 259.4L1328.1 265.8M1251.4 147.9L1257.0 149.7M1215.8 169.5L1220.6 172.8M1431.2 377.7L1432.7 379.9M1392.8 325.4L1394.7 329.2M1383.5 294.9L1385.0 296.5M1277.2 174.3L1279.4 176.0M1208.8 117.2L1212.7 118.2M1319.9 245.9L1322.0 246.5M1349.2 274.1L1352.2 280.0M1374.0 269.9L1375.0 276.0M1247.6 183.8L1250.3 185.6M1445.1 446.0L1446.7 450.8M1333.7 251.3L1336.6 253.6M1413.9 301.8L1416.3 307.6M1295.0 203.1L1300.2 207.0M1379.9 312.5L1383.6 318.1M1425.5 356.4L1427.0 363.0M1283.7 198.0L1287.7 202.7M1253.7 188.1L1257.2 190.3M1262.8 166.9L1265.1 168.9M1401.7 337.7L1403.7 340.9M1345.4 238.1L1349.8 243.4M1244.7 152.1L1247.1 156.2M1192.9 148.5L1199.0 151.9M1357.7 289.0L1360.3 291.4M1189.2 141.7L1194.4 145.8M1297.0 176.8L1298.3 178.8M1272.3 172.3L1276.2 174.6M1320.2 246.6L1323.2 251.6M1351.8 270.9L1355.0 272.6M1365.1 307.8L1366.5 312.0M1345.2 285.0L1348.3 286.5M1259.6 191.6L1262.1 197.6M1409.6 353.2L1411.6 358.6M1415.3 299.9L1417.2 301.0M1310.7 209.3L1313.5 213.0M1210.3 128.3L1213.2 131.2M1300.0 215.6L1305.1 220.3M1259.3 169.9L1263.3 173.9M1359.9 286.2L1361.5 288.6M1317.6 222.2L1320.8 223.8M1187.0 150.2L1191.7 153.0M1278.7 178.2L1284.4 180.2M1283.0 160.6L1286.1 162.7M1334.3 249.0L1336.7 251.2M1265.9 155.9L1268.8 158.5M1415.9 352.5L1417.2 354.8M1406.0 329.8L1408.3 336.3M1186.0 113.6L1188.4 114.4M1302.8 220.2L1307.3 223.1M1243.5 158.9L1246.5 159.9M1330.0 266.0L1331.4 268.2M1349.1 241.6L1354.2 246.1M1349.2 262.5L1351.4 264.8M1312.5 227.8L1314.5 229.7M1172.5 150.6L1177.7 155.0M1292.3 222.5L1295.0 225.4M1237.1 146.0L1238.7 148.2M1417.8 354.8L1420.4 360.2M1286.1 221.1L1290.5 224.6M1372.2 281.2L1376.9 284.6M1314.1 226.9L1317.2 229.6M1278.3 212.3L1283.1 216.1M1343.0 270.9L1346.0 275.5M1364.5 280.2L1367.3 282.8M1314.3 212.6L1319.5 216.9M1189.4 113.9L1193.9 115.7M1309.5 210.2L1310.4 214.6M1349.7 226.3L1355.1 228.0M1459.0 471.5L1460.3 475.7M1218.5 128.1L1222.9 132.1M1266.4 173.1L1270.0 175.3M1316.6 185.7L1320.6 189.1M1177.7 133.4L1181.2 134.6M1197.3 137.8L1202.0 139.8M1262.1 168.7L1266.8 173.5M1327.1 222.2L1328.9 223.5M1304.3 220.1L1307.5 222.1M1328.9 219.3L1332.3 222.8M1162.3 144.3L1164.6 145.4M1176.9 150.3L1181.1 151.1M1354.4 268.8L1357.1 272.2M1179.8 152.5L1182.8 153.8M1410.7 301.1L1412.0 302.6M1316.2 190.1L1321.2 193.6M1317.5 225.4L1319.4 226.9M1291.7 211.7L1293.0 213.6M1268.9 183.7L1270.9 184.4M1381.7 263.9L1385.5 268.2M1450.2 379.2L1452.0 381.8M1221.4 143.9L1226.3 148.7M1244.5 189.2L1247.3 190.6M1380.6 323.2L1383.2 326.3M1267.8 198.2L1269.9 199.4M1250.4 157.0L1254.1 160.3M1199.7 163.2L1203.4 164.9M1163.7 131.4L1165.8 131.9M1339.6 227.1L1341.5 228.0M1182.6 111.8L1184.6 112.7M1315.7 230.9L1317.1 232.7M1444.1 355.9L1445.9 357.8M1213.6 159.6L1217.1 162.6M1269.3 208.0L1273.4 211.2M1340.6 259.0L1345.5 264.0M1172.4 132.3L1176.0 132.7M1326.2 221.9L1328.9 224.2M1443.6 352.4L1444.8 356.0M1357.0 260.4L1358.9 261.7M1395.8 272.6L1398.7 275.3M1191.5 120.3L1196.3 122.8M1388.6 334.5L1392.7 340.0M1199.3 152.6L1205.7 154.1M1403.0 349.7L1404.4 351.6M1331.5 252.6L1335.6 256.5M1465.0 413.7L1467.0 418.4" stroke="#4b5a96" stroke-width="1.0" fill="none"/><path d="M1422.9 290.9L1419.5 290.8L1421.2 287.9ZM1260.1 188.1L1256.7 187.5L1258.9 184.9ZM1361.2 235.7L1358.3 233.8L1361.3 232.3ZM1261.9 192.3L1258.5 192.4L1260.0 189.4ZM1409.1 360.6L1405.8 359.6L1408.3 357.2ZM1208.4 126.9L1205.0 126.9L1206.7 123.9ZM1354.8 239.2L1351.4 238.6L1353.5 236.0ZM1264.9 170.5L1261.4 170.2L1263.3 167.4ZM1342.9 224.8L1339.4 224.3L1341.5 221.6ZM1307.3 237.8L1304.2 236.4L1306.9 234.4ZM1291.6 183.6L1288.2 183.7L1289.8 180.7ZM1293.7 204.5L1290.4 203.4L1292.9 201.1ZM1375.8 294.1L1372.5 293.1L1374.9 290.7ZM1312.1 219.8L1308.6 219.7L1310.4 216.8ZM1329.7 250.1L1326.3 250.3L1327.8 247.3ZM1266.3 202.8L1262.9 203.3L1264.1 200.1ZM1383.8 275.1L1380.8 273.4L1383.7 271.7ZM1295.6 200.5L1292.2 200.2L1294.2 197.4ZM1427.6 311.7L1424.4 310.5L1427.1 308.3ZM1346.3 261.9L1342.9 261.3L1345.1 258.7ZM1190.1 126.1L1186.7 126.1L1188.3 123.1ZM1325.6 243.6L1322.4 242.4L1325.0 240.2ZM1392.8 278.6L1389.5 277.7L1391.9 275.3ZM1236.0 182.2L1232.5 182.4L1234.1 179.3ZM1431.3 392.4L1428.2 390.8L1431.1 388.9ZM1307.1 224.5L1304.1 222.7L1307.1 221.0ZM1449.5 403.5L1446.3 402.1L1449.0 400.1ZM1302.3 236.9L1298.9 236.4L1301.0 233.7ZM1264.7 198.8L1261.3 198.7L1263.0 195.8ZM1338.1 240.8L1334.9 239.5L1337.6 237.4ZM1312.8 227.8L1309.5 227.0L1311.8 224.5ZM1288.3 209.6L1284.9 209.7L1286.5 206.7ZM1449.7 389.3L1446.8 387.3L1449.9 385.8ZM1323.2 246.4L1320.0 245.1L1322.6 243.0ZM1329.2 268.5L1326.5 266.4L1329.7 265.1ZM1259.8 150.6L1256.4 151.3L1257.5 148.0ZM1223.1 174.6L1219.6 174.2L1221.6 171.5ZM1434.4 382.3L1431.3 380.8L1434.1 378.9ZM1396.1 331.9L1393.2 330.0L1396.3 328.5ZM1387.0 298.8L1383.7 297.7L1386.3 295.4ZM1281.8 177.8L1278.4 177.3L1280.5 174.6ZM1215.6 118.9L1212.3 119.9L1213.1 116.6ZM1324.9 247.4L1321.5 248.2L1322.5 244.9ZM1353.6 282.7L1350.7 280.8L1353.7 279.2ZM1375.5 279.0L1373.4 276.3L1376.7 275.8ZM1252.7 187.3L1249.3 187.0L1251.2 184.2ZM1447.6 453.6L1445.0 451.3L1448.3 450.2ZM1338.9 255.4L1335.5 254.9L1337.6 252.2ZM1417.4 310.4L1414.7 308.3L1417.9 307.0ZM1302.6 208.8L1299.2 208.3L1301.2 205.6ZM1385.2 320.6L1382.1 319.0L1385.0 317.2ZM1427.7 365.9L1425.3 363.3L1428.6 362.6ZM1289.7 204.9L1286.4 203.8L1289.0 201.5ZM1259.7 191.9L1256.2 191.7L1258.1 188.8ZM1267.4 170.8L1264.0 170.1L1266.2 167.6ZM1405.3 343.4L1402.2 341.8L1405.1 340.0ZM1351.7 245.7L1348.4 244.4L1351.1 242.3ZM1248.6 158.8L1245.6 157.1L1248.5 155.4ZM1201.7 153.3L1198.2 153.4L1199.8 150.4ZM1362.4 293.5L1359.1 292.7L1361.4 290.2ZM1196.7 147.7L1193.3 147.1L1195.4 144.5ZM1299.9 181.3L1296.9 179.7L1299.7 177.9ZM1278.7 176.2L1275.3 176.1L1277.0 173.2ZM1324.8 254.2L1321.8 252.5L1324.7 250.8ZM1357.7 273.9L1354.3 274.1L1355.8 271.0ZM1367.5 314.9L1364.9 312.6L1368.2 311.5ZM1351.0 287.7L1347.6 288.0L1349.0 284.9ZM1263.3 200.4L1260.6 198.2L1263.7 196.9ZM1412.7 361.4L1410.1 359.2L1413.2 358.0ZM1419.7 302.6L1416.3 302.5L1418.0 299.6ZM1315.3 215.3L1312.2 214.0L1314.8 211.9ZM1215.3 133.3L1212.0 132.4L1214.4 130.0ZM1307.3 222.4L1303.9 221.6L1306.2 219.1ZM1265.4 176.1L1262.1 175.1L1264.5 172.7ZM1363.1 291.1L1360.1 289.5L1362.9 287.7ZM1323.5 225.1L1320.1 225.3L1321.6 222.2ZM1194.3 154.6L1190.8 154.5L1192.6 151.6ZM1287.3 181.2L1283.9 181.8L1285.0 178.6ZM1288.6 164.5L1285.1 164.1L1287.1 161.3ZM1338.9 253.2L1335.6 252.4L1337.9 249.9ZM1271.1 160.5L1267.7 159.8L1270.0 157.2ZM1418.6 357.4L1415.7 355.6L1418.7 354.0ZM1409.3 339.1L1406.7 336.9L1409.9 335.7ZM1191.2 115.4L1187.8 116.0L1189.0 112.8ZM1309.9 224.7L1306.4 224.5L1308.3 221.7ZM1249.3 160.8L1246.0 161.5L1247.0 158.3ZM1333.0 270.7L1329.9 269.1L1332.8 267.2ZM1356.4 248.1L1353.0 247.4L1355.3 244.8ZM1353.4 267.0L1350.1 265.9L1352.6 263.6ZM1316.7 231.7L1313.3 230.9L1315.6 228.4ZM1180.0 156.9L1176.6 156.3L1178.8 153.7ZM1297.1 227.5L1293.8 226.5L1296.2 224.2ZM1240.5 150.6L1237.3 149.2L1240.0 147.2ZM1421.6 362.9L1418.8 360.9L1421.9 359.5ZM1292.9 226.4L1289.5 225.9L1291.6 223.2ZM1379.3 286.4L1375.9 286.0L1377.9 283.2ZM1319.4 231.6L1316.0 230.9L1318.3 228.3ZM1285.4 217.9L1282.0 217.4L1284.1 214.7ZM1347.6 278.1L1344.5 276.4L1347.4 274.6ZM1369.5 284.9L1366.2 284.1L1368.5 281.6ZM1321.8 218.8L1318.4 218.2L1320.6 215.6ZM1196.6 116.9L1193.2 117.3L1194.5 114.1ZM1311.0 217.5L1308.7 214.9L1312.1 214.2ZM1358.0 228.9L1354.6 229.6L1355.6 226.4ZM1461.1 478.6L1458.6 476.2L1461.9 475.2ZM1225.2 134.1L1221.8 133.4L1224.1 130.8ZM1272.6 176.8L1269.1 176.7L1270.9 173.8ZM1322.9 191.1L1319.5 190.4L1321.7 187.8ZM1184.0 135.6L1180.6 136.2L1181.7 133.0ZM1204.8 140.9L1201.4 141.3L1202.7 138.2ZM1268.9 175.7L1265.5 174.7L1268.0 172.4ZM1331.3 225.2L1327.9 224.8L1329.9 222.1ZM1310.1 223.7L1306.6 223.6L1308.4 220.7ZM1334.3 224.9L1331.0 223.9L1333.5 221.6ZM1167.3 146.7L1163.9 147.0L1165.4 143.9ZM1184.1 151.6L1180.8 152.8L1181.4 149.4ZM1359.0 274.6L1355.8 273.3L1358.4 271.2ZM1185.6 154.9L1182.2 155.4L1183.4 152.2ZM1413.9 305.0L1410.6 303.7L1413.3 301.6ZM1323.7 195.3L1320.3 195.0L1322.2 192.2ZM1321.8 228.8L1318.4 228.3L1320.5 225.6ZM1294.6 216.1L1291.6 214.5L1294.4 212.7ZM1273.7 185.4L1270.3 186.0L1271.5 182.8ZM1387.5 270.4L1384.2 269.3L1386.8 267.0ZM1453.8 384.2L1450.7 382.7L1453.4 380.8ZM1228.4 150.9L1225.1 149.9L1227.5 147.5ZM1250.0 191.9L1246.6 192.1L1248.1 189.0ZM1385.2 328.5L1381.9 327.4L1384.5 325.2ZM1272.5 201.0L1269.0 200.9L1270.7 198.0ZM1256.3 162.3L1253.0 161.5L1255.2 159.0ZM1206.2 166.1L1202.7 166.4L1204.1 163.3ZM1168.7 132.5L1165.4 133.5L1166.2 130.2ZM1344.1 229.4L1340.7 229.6L1342.2 226.5ZM1187.4 113.9L1184.0 114.3L1185.3 111.1ZM1319.0 235.0L1315.8 233.8L1318.5 231.6ZM1448.0 360.0L1444.7 359.0L1447.1 356.6ZM1219.4 164.5L1216.0 163.9L1218.2 161.3ZM1275.8 213.0L1272.4 212.5L1274.5 209.8ZM1347.5 266.1L1344.2 265.2L1346.7 262.8ZM1179.0 133.1L1175.8 134.4L1176.2 131.0ZM1331.3 226.1L1327.9 225.5L1330.0 222.9ZM1445.8 358.9L1443.2 356.6L1446.4 355.5ZM1361.4 263.4L1357.9 263.1L1359.9 260.3ZM1400.9 277.3L1397.5 276.5L1399.8 274.0ZM1198.9 124.3L1195.5 124.3L1197.1 121.3ZM1394.4 342.4L1391.3 341.0L1394.0 339.0ZM1208.6 154.8L1205.3 155.8L1206.1 152.4ZM1406.1 354.0L1403.0 352.6L1405.7 350.6ZM1337.8 258.6L1334.4 257.8L1336.8 255.3ZM1468.1 421.2L1465.4 419.1L1468.6 417.8Z" fill="#3c4a84"/></g>
<g opacity="0.5"><path d="M1134.7 221.0L1137.1 222.8M1277.8 334.0L1278.3 334.8M1253.1 328.2L1254.4 330.9M1170.1 159.5L1172.4 159.1M1229.4 240.2L1230.9 241.7M1240.4 243.2L1241.3 244.2M1239.2 294.7L1242.4 296.2M1179.6 227.5L1182.2 228.9M1293.9 253.3L1294.8 253.2M1183.5 237.7L1187.0 238.1M1305.4 295.3L1305.7 296.7M1283.0 281.1L1283.8 283.6M1297.0 421.9L1298.3 425.7M1432.1 468.9L1432.2 470.2M1290.3 367.0L1294.1 368.1M1173.9 164.7L1175.2 167.5M1235.0 276.2L1237.7 279.1M1353.5 309.7L1357.1 310.9M1300.4 389.4L1303.6 390.9M1179.4 283.8L1181.7 285.0M1234.5 315.5L1236.1 316.2M1261.9 270.2L1263.6 272.5M1269.3 284.4L1270.9 285.8M1215.6 241.3L1218.7 243.6M1141.0 216.8L1144.2 218.4M1245.2 327.2L1248.5 328.0M1314.8 308.5L1314.9 309.1M1176.5 264.5L1178.6 265.5M1216.4 190.6L1217.4 191.1M1223.2 236.5L1225.6 236.9M1311.0 330.9L1311.5 331.2M1286.3 313.7L1289.1 316.1M1274.3 261.1L1275.4 263.3M1174.6 189.5L1177.1 192.0M1314.5 303.7L1317.7 305.8M1206.2 191.3L1208.0 192.3M1192.0 226.7L1194.3 227.3M1230.5 278.7L1230.9 279.2M1275.1 360.2L1275.8 362.7M1260.9 225.4L1262.4 228.5M1335.9 489.9L1336.1 490.6M1177.1 243.0L1180.7 242.8M1167.1 259.8L1170.6 261.5M1229.3 282.1L1232.9 283.7M1230.5 318.7L1230.9 319.3M1322.0 306.3L1322.6 310.1M1229.2 299.9L1229.9 300.4M1345.8 310.5L1346.9 313.9M1298.5 244.4L1300.2 245.5M1400.3 387.8L1401.5 389.0M1179.2 272.4L1181.6 275.2M1251.2 372.4L1251.6 375.4M1283.3 283.3L1284.1 287.0M1306.2 352.7L1308.6 353.1M1223.3 214.9L1226.0 216.3M1290.2 248.8L1291.6 249.8M1164.6 198.0L1168.0 198.6M1236.6 235.3L1237.7 236.6M1155.3 236.3L1157.1 237.0M1210.3 256.7L1212.6 256.9M1266.2 292.7L1267.7 295.5M1264.7 353.0L1266.8 354.6M1304.5 251.5L1306.4 254.2M1402.0 423.1L1403.5 425.0M1212.8 248.1L1214.7 250.3M1153.6 200.0L1157.3 201.1M1166.3 277.7L1168.1 278.1M1260.1 223.6L1261.9 225.8M1227.9 210.9L1228.4 211.4M1245.4 312.4L1247.2 314.6M1295.1 299.1L1295.2 300.8M1298.0 421.1L1299.3 422.2M1319.3 265.6L1321.0 267.6M1282.2 353.5L1284.4 356.4M1190.7 288.0L1191.6 288.8M1263.3 368.4L1263.9 369.5M1261.4 243.5L1262.4 246.1M1291.5 343.2L1292.5 345.9M1149.5 218.2L1153.0 218.0M1261.5 229.6L1261.4 230.3M1227.2 266.3L1229.4 268.2M1180.5 202.8L1182.3 203.3M1227.7 198.7L1228.8 199.1M1194.9 170.8L1197.0 171.4M1177.9 269.2L1178.6 270.3M1195.6 229.7L1196.1 230.0M1262.1 241.6L1263.2 243.7M1162.7 162.8L1165.2 162.7M1186.6 219.6L1187.2 220.6M1362.9 426.3L1362.2 430.0M1239.2 217.1L1243.0 217.7M1317.2 493.5L1317.7 494.0M1385.5 355.2L1386.4 357.0M1191.2 243.6L1192.9 245.2M1390.9 431.1L1392.4 433.0M1297.7 326.7L1299.1 327.1M1230.1 249.9L1229.9 252.5M1161.7 223.5L1162.7 224.3M1232.9 286.0L1234.2 289.1M1197.0 204.4L1200.2 205.0M1270.1 344.6L1270.2 347.1M1217.9 284.3L1221.5 285.4M1170.7 277.2L1171.9 279.7M1164.4 277.8L1165.1 278.1M1153.8 264.5L1154.2 265.0M1233.7 278.7L1234.4 279.2M1192.1 208.2L1194.5 210.5M1425.6 413.8L1425.5 415.4M1139.7 222.3L1141.8 221.5M1339.5 286.3L1340.2 287.6M1329.5 314.5L1330.3 314.8M1158.9 209.4L1161.2 210.6M1231.3 216.1L1232.0 217.7M1187.6 207.8L1189.2 207.9M1260.3 287.6L1262.1 288.0M1274.5 220.6L1275.4 221.3M1235.3 227.0L1236.0 227.9M1221.9 202.5L1222.5 203.1M1266.8 370.7L1267.3 371.1M1414.2 470.8L1414.6 472.5M1201.3 232.0L1202.5 232.2M1214.3 232.7L1215.0 233.0M1305.5 414.9L1306.1 416.5M1234.4 209.3L1235.6 209.7M1272.0 394.5L1272.1 395.3M1201.4 222.9L1204.0 224.5M1325.0 286.4L1328.3 287.9M1169.8 154.6L1171.3 155.5M1305.4 475.1L1306.2 476.4M1277.5 303.1L1279.3 305.6M1327.8 362.5L1328.7 362.7M1274.1 278.9L1275.8 279.8M1242.9 288.1L1243.4 288.5M1275.0 287.5L1275.7 288.7M1203.4 265.2L1205.5 266.8M1185.3 205.3L1187.0 206.3M1240.3 257.3L1241.8 257.7M1159.8 180.7L1163.2 182.0M1307.3 264.0L1308.6 265.9M1151.9 186.7L1154.1 187.3M1223.0 272.2L1223.5 273.2M1176.3 204.1L1179.4 206.2M1218.0 300.2L1219.0 301.5M1318.8 272.3L1321.3 273.8M1147.4 180.0L1148.9 181.2M1261.5 311.5L1263.7 313.7M1171.1 180.9L1171.5 181.5M1323.4 269.0L1324.3 269.4M1246.7 280.5L1248.9 281.8M1265.5 358.7L1267.3 359.8M1366.9 430.4L1366.8 433.5M1299.1 344.5L1300.4 347.1M1281.1 274.1L1282.3 274.9M1152.1 153.4L1153.0 153.3M1239.9 267.0L1241.1 269.4M1231.8 265.8L1233.0 268.5M1217.6 288.6L1221.4 288.9M1253.0 351.3L1254.9 352.2M1420.2 447.9L1419.6 449.0M1247.2 311.2L1248.4 311.4M1325.8 315.0L1326.9 316.0M1250.5 255.8L1251.3 256.1M1271.0 300.1L1271.8 300.5M1283.5 307.8L1283.8 308.4M1189.3 299.5L1192.1 299.2M1281.2 310.7L1281.7 311.7M1326.5 312.7L1327.5 313.8M1332.9 348.8L1333.9 349.8M1251.5 243.7L1252.3 245.7M1274.7 374.5L1274.8 375.0M1329.4 433.0L1331.0 436.5M1262.9 284.9L1265.7 286.3M1193.1 291.2L1193.8 291.7M1190.7 275.3L1194.1 276.4M1173.9 233.3L1174.4 233.4M1333.7 320.4L1335.8 322.0M1247.3 328.9L1248.3 329.3M1199.9 221.6L1202.2 220.7M1163.6 182.7L1164.2 182.8M1267.8 285.0L1269.3 284.4M1156.8 145.3L1157.3 147.8M1200.8 283.9L1201.5 284.6M1302.2 313.6L1303.4 315.7M1151.5 185.4L1154.5 185.8M1237.9 234.2L1239.8 234.8M1140.7 200.0L1142.9 202.3M1317.8 310.5L1317.9 312.5M1270.5 369.4L1271.1 370.7M1304.1 278.1L1305.2 279.8M1295.4 237.2L1298.7 238.7M1235.4 207.9L1237.9 209.5M1335.5 345.0L1335.7 345.7M1228.9 238.3L1230.4 239.0M1190.0 299.7L1191.7 301.3M1274.1 219.4L1274.1 221.9M1384.9 473.7L1386.7 475.6M1359.8 309.7L1360.1 311.9M1137.1 232.3L1140.7 233.1M1331.4 273.4L1332.1 274.9M1151.8 195.4L1152.9 197.9M1276.1 225.2L1278.1 225.2M1303.3 263.7L1305.3 266.1M1257.1 318.2L1259.8 320.7M1302.7 276.0L1302.8 277.0M1208.5 280.2L1209.9 283.0M1225.1 182.2L1229.1 182.7M1142.7 197.3L1144.4 197.7M1295.2 270.0L1296.0 273.0M1242.8 327.5L1244.4 329.1M1170.7 252.1L1172.0 254.3M1189.4 191.2L1191.4 191.0M1292.5 302.7L1292.3 306.3M1203.5 194.2L1204.5 194.5M1177.7 219.5L1179.6 222.1M1299.6 439.8L1299.5 442.2M1253.3 267.2L1255.4 269.9M1157.5 193.0L1157.8 194.9M1150.6 159.7L1152.2 160.5M1288.1 312.2L1289.7 315.0M1318.4 298.8L1321.3 300.7M1247.2 303.3L1249.6 305.3M1182.0 171.7L1184.8 172.4M1155.9 205.7L1157.0 205.9M1244.0 311.2L1245.4 313.8M1205.9 177.2L1206.7 179.2M1230.9 277.9L1231.6 278.2M1193.0 268.5L1194.4 268.5M1283.8 299.2L1285.1 299.7M1305.4 264.3L1308.1 264.6M1278.2 260.2L1279.3 260.2M1337.1 353.5L1337.5 354.1M1301.1 338.3L1304.5 339.0M1237.3 271.2L1239.0 272.5M1241.0 231.8L1242.9 233.8M1323.2 346.1L1324.3 348.6M1172.2 188.3L1173.4 188.8M1314.0 288.8L1314.8 292.7M1243.6 295.5L1245.0 296.3M1313.5 318.4L1314.9 321.4M1357.9 331.0L1359.8 334.4M1276.6 334.6L1279.4 337.1M1212.0 289.3L1214.5 291.5M1217.8 237.2L1221.4 238.1M1284.6 342.9L1288.3 343.9M1205.0 286.0L1206.7 287.6M1302.3 280.2L1304.6 282.5M1323.7 359.2L1324.2 360.9M1221.7 217.9L1222.2 217.7M1169.2 186.2L1170.7 186.6M1365.5 317.6L1366.7 319.2M1195.1 189.1L1197.5 190.5M1324.4 471.4L1326.6 473.7M1179.3 156.3L1180.6 156.3M1271.8 218.0L1272.9 220.1M1241.3 217.5L1243.9 219.9M1149.6 221.3L1152.2 223.3M1310.9 342.1L1311.9 344.0M1329.9 351.7L1331.1 353.0M1198.1 276.4L1198.5 277.1M1262.9 377.0L1263.3 377.4M1243.5 300.1L1246.2 303.1M1374.7 349.9L1374.7 352.7M1344.1 468.5L1345.1 471.6M1299.3 283.7L1301.1 284.8M1157.7 226.9L1159.5 227.2M1206.5 199.9L1207.3 200.2M1286.2 321.1L1286.6 321.2M1157.0 186.8L1158.0 188.1M1194.0 164.7L1195.5 164.0M1257.6 207.1L1259.0 206.9M1260.2 377.5L1262.1 378.4M1376.6 363.1L1377.6 365.2M1185.4 259.5L1186.3 259.7M1176.6 282.9L1178.4 283.9M1162.3 274.0L1162.9 277.4M1261.2 344.5L1264.6 346.4M1234.0 206.1L1236.7 205.9M1302.3 332.0L1303.9 332.7M1197.5 196.0L1199.8 196.0M1285.8 249.7L1286.3 249.9M1327.9 373.3L1328.4 374.1M1250.3 357.5L1251.0 358.0M1200.9 243.5L1200.8 245.7M1221.4 230.7L1222.6 231.3M1205.3 226.6L1205.7 227.0M1293.4 231.7L1294.1 232.3M1203.9 233.0L1206.7 230.9M1220.7 198.9L1221.1 200.3M1358.9 331.7L1358.4 334.4M1279.5 297.9L1280.2 299.4M1320.5 260.8L1323.4 263.2M1261.4 356.9L1262.9 359.9M1398.0 479.2L1399.0 480.2M1421.1 418.0L1421.2 418.5M1143.6 182.7L1146.5 183.9M1138.4 224.3L1141.5 225.5M1241.6 302.9L1242.1 303.9M1168.7 260.2L1168.8 263.1M1137.3 198.5L1137.8 198.1M1202.5 223.7L1204.2 225.3M1186.1 192.3L1187.6 193.8M1210.4 298.4L1211.8 299.4M1277.8 284.5L1278.4 287.0M1173.2 184.7L1174.1 185.2M1189.6 168.2L1189.7 168.8M1298.6 322.1L1300.9 323.6M1285.2 315.5L1286.4 317.5M1277.7 245.9L1280.5 247.3M1397.8 383.4L1398.8 384.0M1184.2 192.7L1184.8 192.7M1169.5 155.9L1172.1 158.6M1182.3 294.7L1183.1 295.4M1328.8 404.3L1332.1 405.7M1395.9 396.4L1398.1 398.2M1187.2 274.8L1191.0 275.8M1214.7 260.1L1218.3 260.8M1221.1 236.2L1224.1 237.8M1184.0 218.6L1186.7 218.4M1254.8 308.7L1256.9 309.7M1257.4 357.4L1259.4 359.1M1271.8 293.0L1273.5 294.6M1263.6 320.8L1264.9 323.0M1224.9 206.0L1227.1 207.3M1272.9 281.6L1275.2 284.3M1327.9 273.5L1329.3 274.1M1153.5 163.0L1156.2 162.0M1298.0 316.2L1300.6 317.0M1353.5 490.3L1354.2 491.4M1248.4 312.7L1249.3 312.7M1215.6 259.1L1217.4 260.0M1144.8 209.5L1146.4 210.9M1272.5 280.3L1272.9 280.6M1271.4 341.2L1271.9 343.5M1244.0 229.4L1245.4 230.9M1171.4 220.0L1174.2 221.7M1286.2 256.5L1289.7 255.7M1222.8 213.5L1224.0 217.2M1305.0 260.5L1306.6 261.4M1206.3 259.6L1209.0 262.1M1289.3 254.8L1291.1 257.2M1187.0 272.4L1187.7 273.3M1205.4 196.6L1205.6 200.6M1160.9 178.1L1162.2 178.8M1214.7 228.4L1215.3 228.5M1313.9 424.5L1314.8 426.0M1324.1 495.1L1324.2 498.7M1214.7 264.7L1216.8 264.6M1293.4 405.1L1293.0 407.1M1142.8 208.9L1145.1 210.7M1293.3 290.1L1294.3 290.9M1160.4 247.7L1163.3 250.2M1165.5 215.9L1168.6 214.2M1220.5 205.8L1224.0 206.8M1268.6 256.4L1269.7 257.8M1289.6 317.7L1291.6 320.6M1173.9 211.9L1175.1 213.5M1335.7 364.8L1337.5 367.2M1216.4 182.5L1216.4 183.5M1313.5 393.4L1316.3 394.3M1244.3 258.2L1244.0 259.5M1380.3 341.2L1381.6 343.3M1217.5 284.2L1219.0 287.2M1247.3 329.7L1249.4 331.1M1241.8 215.0L1243.4 218.1M1260.1 225.7L1263.1 227.4M1273.0 326.5L1275.9 328.5M1167.6 248.6L1169.2 250.3M1372.1 452.2L1371.8 454.9M1321.0 357.0L1322.8 359.7M1160.3 219.0L1160.3 221.0M1254.5 204.4L1256.4 205.8M1253.7 374.5L1253.1 377.2M1352.3 347.0L1354.4 348.0M1292.2 335.8L1293.5 336.7M1305.3 417.9L1306.1 420.4M1294.7 401.2L1296.4 402.3M1280.7 343.5L1281.4 344.3M1289.6 325.3L1291.6 327.4M1243.3 206.0L1244.6 207.0M1280.1 272.8L1280.9 276.1M1156.5 161.0L1157.3 161.0M1320.1 263.8L1321.0 264.0M1241.3 210.1L1242.0 210.9M1152.1 258.7L1153.6 258.9M1151.1 159.2L1153.7 157.9M1204.1 288.0L1207.2 289.5M1231.9 274.2L1234.9 276.2M1154.0 261.1L1157.9 260.7M1162.9 193.2L1165.7 194.4M1195.2 250.2L1196.0 250.7M1142.7 196.8L1146.5 195.9M1259.0 314.7L1258.8 317.0M1279.4 262.6L1280.5 265.2M1336.8 304.9L1337.3 306.5M1172.7 279.9L1175.6 279.7M1306.0 327.9L1308.2 327.7M1194.7 213.0L1195.9 212.9M1315.3 311.2L1316.1 311.8M1176.7 235.3L1179.2 235.0M1377.3 375.4L1377.8 376.1M1146.5 218.5L1149.5 218.4M1186.8 237.3L1187.8 239.3M1352.7 327.3L1354.4 330.1M1425.3 457.8L1426.5 460.8M1173.8 153.1L1174.6 153.0M1285.4 402.6L1286.0 402.8M1295.6 336.9L1296.8 338.4M1142.5 221.4L1143.1 221.4M1263.1 374.0L1263.3 375.5M1157.3 238.0L1159.9 239.0M1243.2 248.3L1246.4 249.0M1155.2 156.1L1157.3 154.9M1297.0 311.4L1297.2 313.3M1208.6 227.4L1210.1 229.4M1363.5 452.7L1363.9 453.2M1333.5 299.3L1335.9 300.5M1259.4 351.8L1259.0 355.7M1248.9 217.2L1251.0 216.7M1247.2 202.2L1249.2 204.8M1164.3 243.6L1168.2 244.4" stroke="#34406e" stroke-width="0.8" fill="none"/><path d="M1138.7 223.9L1136.3 223.9L1137.9 221.6ZM1279.3 336.5L1277.1 335.6L1279.5 334.1ZM1255.2 332.7L1253.1 331.5L1255.6 330.3ZM1174.4 158.7L1172.7 160.4L1172.1 157.7ZM1232.2 243.2L1229.8 242.7L1231.9 240.8ZM1242.6 245.8L1240.3 245.1L1242.4 243.3ZM1244.2 297.1L1241.7 297.5L1243.0 295.0ZM1184.0 229.9L1181.5 230.2L1182.9 227.7ZM1296.8 253.1L1294.9 254.6L1294.7 251.8ZM1189.0 238.4L1186.9 239.5L1187.2 236.8ZM1306.1 298.7L1304.3 297.0L1307.1 296.4ZM1284.4 285.5L1282.5 284.0L1285.2 283.2ZM1298.9 427.5L1297.0 426.1L1299.6 425.2ZM1432.4 472.2L1430.8 470.3L1433.6 470.1ZM1296.1 368.7L1293.7 369.5L1294.5 366.8ZM1176.1 169.4L1173.9 168.1L1176.5 166.9ZM1239.1 280.6L1236.7 280.1L1238.7 278.2ZM1359.0 311.5L1356.7 312.2L1357.5 309.5ZM1305.4 391.8L1303.0 392.2L1304.2 389.7ZM1183.5 286.0L1181.0 286.3L1182.3 283.8ZM1238.0 316.9L1235.6 317.5L1236.7 314.9ZM1264.8 274.2L1262.5 273.4L1264.8 271.7ZM1272.5 287.1L1270.0 286.9L1271.8 284.7ZM1220.3 244.8L1217.9 244.7L1219.5 242.5ZM1146.0 219.3L1143.6 219.6L1144.8 217.1ZM1250.4 328.5L1248.2 329.4L1248.8 326.7ZM1315.4 311.0L1313.6 309.4L1316.3 308.7ZM1180.4 266.3L1178.0 266.7L1179.2 264.2ZM1219.3 191.9L1216.9 192.4L1218.0 189.8ZM1227.6 237.3L1225.3 238.3L1225.8 235.5ZM1313.2 332.1L1310.8 332.4L1312.1 329.9ZM1290.6 317.4L1288.2 317.2L1290.1 315.0ZM1276.3 265.1L1274.2 263.9L1276.7 262.7ZM1178.6 193.4L1176.2 193.0L1178.1 191.0ZM1319.4 306.8L1317.0 306.9L1318.5 304.6ZM1209.7 193.3L1207.3 193.5L1208.7 191.1ZM1196.2 227.8L1193.9 228.6L1194.6 225.9ZM1231.9 280.9L1229.7 279.9L1232.0 278.4ZM1276.4 364.6L1274.5 363.1L1277.2 362.3ZM1263.3 230.3L1261.1 229.1L1263.6 227.9ZM1336.6 492.5L1334.7 490.9L1337.4 490.2ZM1182.7 242.7L1180.8 244.2L1180.6 241.5ZM1172.4 262.4L1170.0 262.8L1171.2 260.3ZM1234.8 284.5L1232.4 284.9L1233.5 282.4ZM1231.8 321.1L1229.6 320.0L1232.1 318.6ZM1323.0 312.1L1321.3 310.4L1324.0 309.9ZM1231.5 301.6L1229.1 301.5L1230.7 299.3ZM1347.6 315.8L1345.6 314.4L1348.3 313.5ZM1302.0 246.6L1299.5 246.7L1301.0 244.3ZM1403.0 390.3L1400.6 390.0L1402.5 387.9ZM1182.9 276.7L1180.6 276.1L1182.7 274.3ZM1251.8 377.3L1250.2 375.5L1253.0 375.2ZM1284.5 288.9L1282.7 287.3L1285.4 286.7ZM1310.6 353.4L1308.4 354.5L1308.8 351.7ZM1227.8 217.1L1225.4 217.5L1226.6 215.0ZM1293.2 251.0L1290.8 250.9L1292.4 248.7ZM1170.0 198.9L1167.8 200.0L1168.3 197.2ZM1239.0 238.2L1236.7 237.5L1238.8 235.7ZM1158.9 237.8L1156.6 238.3L1157.6 235.7ZM1214.6 257.1L1212.5 258.3L1212.7 255.5ZM1268.7 297.3L1266.5 296.2L1268.9 294.9ZM1268.4 355.8L1266.0 355.7L1267.6 353.4ZM1307.5 255.8L1305.2 255.0L1307.5 253.4ZM1404.6 426.6L1402.3 425.9L1404.6 424.2ZM1216.0 251.8L1213.6 251.2L1215.7 249.3ZM1159.2 201.7L1156.9 202.5L1157.7 199.8ZM1170.0 278.7L1167.7 279.5L1168.4 276.8ZM1263.2 227.3L1260.8 226.7L1262.9 224.8ZM1229.9 212.7L1227.5 212.4L1229.3 210.3ZM1248.4 316.1L1246.1 315.5L1248.3 313.7ZM1295.4 302.8L1293.8 300.9L1296.6 300.7ZM1300.8 423.5L1298.4 423.2L1300.2 421.1ZM1322.2 269.2L1319.9 268.5L1322.1 266.7ZM1285.6 358.0L1283.3 357.3L1285.5 355.6ZM1193.1 290.2L1190.7 289.9L1192.6 287.8ZM1264.8 371.3L1262.6 370.2L1265.1 368.8ZM1263.2 247.9L1261.1 246.6L1263.7 245.6ZM1293.2 347.7L1291.2 346.4L1293.8 345.4ZM1155.0 217.9L1153.0 219.4L1152.9 216.6ZM1260.9 232.3L1260.0 230.0L1262.7 230.6ZM1230.9 269.5L1228.5 269.2L1230.3 267.1ZM1184.2 203.8L1181.9 204.6L1182.6 201.9ZM1230.7 199.7L1228.3 200.4L1229.2 197.7ZM1198.9 171.9L1196.6 172.7L1197.4 170.0ZM1179.6 272.1L1177.4 271.0L1179.8 269.6ZM1197.8 231.0L1195.4 231.2L1196.8 228.8ZM1264.1 245.5L1261.9 244.3L1264.4 243.1ZM1167.2 162.6L1165.2 164.1L1165.1 161.3ZM1188.3 222.3L1186.0 221.3L1188.4 219.8ZM1361.9 431.9L1360.9 429.7L1363.6 430.2ZM1245.0 218.0L1242.8 219.1L1243.2 216.3ZM1319.1 495.4L1316.7 494.9L1318.7 493.0ZM1387.3 358.8L1385.1 357.6L1387.6 356.4ZM1194.3 246.5L1191.9 246.2L1193.8 244.1ZM1393.7 434.6L1391.3 433.9L1393.5 432.2ZM1301.0 327.7L1298.7 328.5L1299.5 325.8ZM1229.8 254.5L1228.5 252.4L1231.3 252.6ZM1164.2 225.7L1161.8 225.4L1163.6 223.3ZM1235.0 290.9L1233.0 289.7L1235.5 288.6ZM1202.2 205.4L1200.0 206.4L1200.5 203.6ZM1270.3 349.1L1268.8 347.2L1271.6 347.1ZM1223.4 286.1L1221.1 286.8L1221.9 284.1ZM1172.8 281.5L1170.7 280.3L1173.2 279.1ZM1167.0 278.8L1164.7 279.4L1165.6 276.8ZM1155.6 266.4L1153.2 266.0L1155.2 264.0ZM1236.0 280.5L1233.5 280.3L1235.3 278.1ZM1196.0 211.9L1193.5 211.5L1195.5 209.5ZM1425.3 417.3L1424.1 415.2L1426.9 415.5ZM1143.7 220.9L1142.3 222.9L1141.3 220.2ZM1341.1 289.4L1339.0 288.2L1341.4 286.9ZM1332.2 315.5L1329.8 316.1L1330.7 313.5ZM1162.9 211.5L1160.5 211.8L1161.8 209.3ZM1232.7 219.6L1230.7 218.3L1233.3 217.2ZM1191.2 208.0L1189.0 209.3L1189.3 206.5ZM1264.0 288.5L1261.7 289.4L1262.4 286.6ZM1276.9 222.6L1274.5 222.4L1276.3 220.3ZM1237.3 229.4L1234.9 228.8L1237.1 227.0ZM1223.9 204.6L1221.5 204.1L1223.6 202.2ZM1268.8 372.3L1266.4 372.2L1268.1 370.0ZM1415.1 474.4L1413.3 472.8L1416.0 472.1ZM1204.4 232.5L1202.2 233.6L1202.7 230.8ZM1216.8 233.8L1214.4 234.3L1215.5 231.7ZM1306.9 418.3L1304.8 417.0L1307.4 415.9ZM1237.5 210.3L1235.2 211.0L1236.1 208.4ZM1272.1 397.3L1270.7 395.4L1273.5 395.3ZM1205.7 225.6L1203.2 225.7L1204.7 223.3ZM1330.1 288.8L1327.7 289.2L1328.9 286.7ZM1173.0 156.5L1170.5 156.7L1172.0 154.3ZM1307.2 478.1L1304.9 477.1L1307.4 475.7ZM1280.5 307.2L1278.2 306.4L1280.5 304.7ZM1330.6 363.3L1328.3 364.1L1329.1 361.4ZM1277.5 280.8L1275.1 281.1L1276.5 278.6ZM1244.9 289.7L1242.5 289.6L1244.3 287.4ZM1276.7 290.4L1274.5 289.4L1276.9 287.9ZM1207.1 268.1L1204.6 267.9L1206.4 265.7ZM1188.8 207.2L1186.3 207.5L1187.7 205.0ZM1243.7 258.2L1241.4 259.1L1242.1 256.4ZM1165.0 182.8L1162.6 183.3L1163.7 180.7ZM1309.7 267.5L1307.4 266.7L1309.7 265.1ZM1156.0 187.8L1153.7 188.7L1154.4 185.9ZM1224.3 275.0L1222.2 273.7L1224.7 272.6ZM1181.1 207.3L1178.6 207.4L1180.2 205.0ZM1220.3 303.0L1218.0 302.4L1220.1 300.6ZM1323.0 274.9L1320.6 275.0L1322.0 272.6ZM1150.5 182.5L1148.0 182.3L1149.8 180.1ZM1265.1 315.1L1262.7 314.7L1264.6 312.7ZM1172.5 183.3L1170.3 182.2L1172.7 180.8ZM1326.1 270.3L1323.7 270.7L1324.9 268.2ZM1250.6 282.8L1248.2 283.0L1249.6 280.6ZM1269.0 360.8L1266.5 361.0L1268.0 358.6ZM1366.7 435.5L1365.4 433.5L1368.2 433.6ZM1301.3 348.9L1299.1 347.7L1301.6 346.4ZM1284.0 275.9L1281.5 276.1L1283.0 273.7ZM1155.0 153.1L1153.2 154.7L1152.8 151.9ZM1242.0 271.2L1239.9 270.0L1242.4 268.8ZM1233.8 270.3L1231.7 269.1L1234.3 267.9ZM1223.4 289.0L1221.3 290.3L1221.5 287.5ZM1256.7 353.0L1254.3 353.5L1255.5 350.9ZM1418.6 450.8L1418.3 448.4L1420.8 449.7ZM1250.4 311.7L1248.2 312.8L1248.6 310.0ZM1328.4 317.3L1326.0 317.0L1327.8 314.9ZM1253.0 257.0L1250.6 257.4L1251.9 254.9ZM1273.6 301.4L1271.2 301.8L1272.4 299.3ZM1284.5 310.3L1282.5 308.9L1285.1 307.9ZM1194.1 299.0L1192.2 300.6L1192.0 297.8ZM1282.6 313.5L1280.4 312.4L1282.9 311.1ZM1328.7 315.4L1326.4 314.7L1328.5 312.9ZM1335.3 351.2L1332.9 350.7L1334.9 348.8ZM1253.0 247.6L1251.0 246.2L1253.6 245.2ZM1275.0 377.0L1273.4 375.2L1276.2 374.8ZM1331.9 438.3L1329.8 437.1L1332.3 435.9ZM1267.6 287.1L1265.2 287.5L1266.3 285.0ZM1195.5 292.8L1193.0 292.9L1194.6 290.5ZM1196.0 277.0L1193.6 277.7L1194.5 275.1ZM1176.4 233.6L1174.3 234.8L1174.6 232.0ZM1337.4 323.2L1334.9 323.1L1336.6 320.9ZM1250.1 330.1L1247.8 330.6L1248.8 328.0ZM1204.1 220.0L1202.7 222.1L1201.8 219.4ZM1166.2 183.1L1164.0 184.2L1164.4 181.4ZM1271.2 283.6L1269.9 285.7L1268.8 283.1ZM1157.7 149.8L1155.9 148.1L1158.7 147.6ZM1202.8 286.1L1200.4 285.6L1202.5 283.7ZM1304.4 317.4L1302.2 316.4L1304.6 314.9ZM1156.5 186.2L1154.3 187.2L1154.7 184.5ZM1241.7 235.5L1239.4 236.2L1240.2 233.5ZM1144.3 203.7L1141.9 203.2L1143.9 201.3ZM1318.0 314.5L1316.5 312.5L1319.3 312.4ZM1271.9 372.6L1269.8 371.3L1272.3 370.2ZM1306.3 281.4L1304.1 280.6L1306.4 279.0ZM1300.5 239.5L1298.1 239.9L1299.3 237.4ZM1239.6 210.6L1237.1 210.7L1238.7 208.4ZM1336.2 347.7L1334.4 346.1L1337.1 345.4ZM1232.2 239.8L1229.8 240.2L1230.9 237.7ZM1193.2 302.7L1190.8 302.3L1192.7 300.3ZM1274.1 223.9L1272.7 221.9L1275.5 221.9ZM1388.1 477.0L1385.7 476.6L1387.7 474.6ZM1360.4 313.9L1358.7 312.1L1361.5 311.7ZM1142.7 233.5L1140.4 234.5L1141.0 231.7ZM1332.9 276.7L1330.8 275.4L1333.3 274.3ZM1153.6 199.7L1151.6 198.4L1154.2 197.4ZM1280.1 225.2L1278.1 226.6L1278.1 223.8ZM1306.5 267.6L1304.2 267.0L1306.3 265.2ZM1261.2 322.1L1258.8 321.7L1260.7 319.7ZM1302.9 279.0L1301.4 277.1L1304.2 276.9ZM1210.9 284.8L1208.7 283.7L1211.2 282.4ZM1231.0 183.0L1228.9 184.1L1229.2 181.3ZM1146.4 198.1L1144.1 199.1L1144.7 196.3ZM1296.5 275.0L1294.6 273.4L1297.3 272.7ZM1245.8 330.5L1243.4 330.1L1245.4 328.1ZM1172.9 256.1L1170.7 255.0L1173.2 253.7ZM1193.4 190.8L1191.6 192.4L1191.3 189.6ZM1292.3 308.3L1290.9 306.2L1293.7 306.3ZM1206.4 195.2L1204.1 195.9L1205.0 193.2ZM1180.8 223.7L1178.5 223.0L1180.8 221.3ZM1299.3 444.2L1298.1 442.1L1300.9 442.3ZM1256.6 271.5L1254.3 270.8L1256.5 269.1ZM1158.2 196.9L1156.4 195.1L1159.2 194.7ZM1154.0 161.4L1151.5 161.8L1152.8 159.2ZM1290.8 316.7L1288.5 315.7L1291.0 314.2ZM1323.0 301.8L1320.5 301.9L1322.0 299.5ZM1251.1 306.6L1248.7 306.4L1250.5 304.2ZM1186.7 172.9L1184.4 173.8L1185.1 171.1ZM1158.9 206.2L1156.7 207.2L1157.2 204.5ZM1246.4 315.5L1244.2 314.5L1246.7 313.1ZM1207.5 181.0L1205.4 179.7L1208.0 178.7ZM1233.5 278.9L1231.1 279.5L1232.1 276.9ZM1196.4 268.5L1194.4 269.9L1194.4 267.1ZM1286.9 300.6L1284.5 301.0L1285.6 298.5ZM1310.0 264.9L1307.9 266.0L1308.2 263.2ZM1281.3 260.2L1279.3 261.6L1279.3 258.8ZM1338.6 355.8L1336.4 354.9L1338.7 353.3ZM1306.5 339.4L1304.2 340.3L1304.8 337.6ZM1240.6 273.7L1238.2 273.6L1239.8 271.4ZM1244.3 235.2L1241.9 234.7L1243.9 232.8ZM1325.1 350.5L1323.0 349.2L1325.6 348.1ZM1175.2 189.6L1172.8 190.1L1174.0 187.5ZM1315.2 294.7L1313.4 293.0L1316.2 292.4ZM1246.8 297.3L1244.3 297.5L1245.7 295.1ZM1315.7 323.2L1313.6 322.0L1316.1 320.8ZM1360.8 336.2L1358.6 335.1L1361.0 333.8ZM1280.9 338.4L1278.5 338.1L1280.3 336.0ZM1216.0 292.8L1213.6 292.6L1215.4 290.5ZM1223.3 238.7L1221.0 239.5L1221.7 236.8ZM1290.2 344.4L1287.9 345.2L1288.7 342.5ZM1208.1 289.0L1205.7 288.6L1207.6 286.6ZM1306.0 284.0L1303.6 283.5L1305.6 281.6ZM1324.8 362.8L1322.9 361.3L1325.6 360.5ZM1224.1 217.0L1222.7 219.0L1221.7 216.4ZM1172.6 187.2L1170.3 188.0L1171.1 185.3ZM1367.9 320.7L1365.5 320.0L1367.8 318.3ZM1199.3 191.4L1196.9 191.7L1198.2 189.3ZM1328.1 475.1L1325.7 474.7L1327.6 472.7ZM1182.6 156.4L1180.5 157.7L1180.6 154.9ZM1273.8 221.9L1271.7 220.8L1274.1 219.5ZM1245.4 221.3L1243.0 220.9L1244.9 218.9ZM1153.8 224.5L1151.3 224.4L1153.0 222.2ZM1312.8 345.8L1310.7 344.6L1313.2 343.3ZM1332.5 354.5L1330.1 354.0L1332.2 352.1ZM1199.5 278.9L1197.3 277.8L1199.7 276.5ZM1264.7 378.7L1262.3 378.4L1264.2 376.3ZM1247.5 304.6L1245.2 304.0L1247.2 302.2ZM1374.6 354.7L1373.3 352.6L1376.1 352.7ZM1345.7 473.5L1343.8 472.0L1346.4 471.2ZM1302.8 285.9L1300.4 286.0L1301.8 283.6ZM1161.5 227.5L1159.3 228.5L1159.7 225.8ZM1209.2 200.9L1206.8 201.5L1207.9 198.9ZM1288.5 321.9L1286.2 322.6L1287.1 319.9ZM1159.2 189.7L1156.9 189.0L1159.1 187.3ZM1197.3 163.3L1196.0 165.3L1194.9 162.8ZM1261.0 206.5L1259.2 208.2L1258.7 205.5ZM1263.9 379.2L1261.5 379.7L1262.6 377.1ZM1378.4 367.0L1376.3 365.7L1378.8 364.6ZM1188.2 260.1L1186.0 261.0L1186.6 258.3ZM1180.1 284.9L1177.7 285.2L1179.1 282.7ZM1163.2 279.4L1161.5 277.6L1164.3 277.2ZM1266.3 347.4L1263.9 347.6L1265.3 345.2ZM1238.7 205.7L1236.8 207.3L1236.5 204.5ZM1305.8 333.4L1303.4 334.0L1304.4 331.4ZM1201.8 196.1L1199.8 197.4L1199.9 194.6ZM1288.2 250.7L1285.8 251.2L1286.9 248.6ZM1329.4 375.8L1327.2 374.8L1329.6 373.4ZM1252.6 359.1L1250.2 359.1L1251.8 356.8ZM1200.8 247.7L1199.4 245.6L1202.2 245.7ZM1224.4 232.2L1222.0 232.5L1223.3 230.0ZM1207.0 228.5L1204.6 227.9L1206.7 226.1ZM1295.6 233.5L1293.2 233.3L1295.0 231.2ZM1208.3 229.7L1207.5 232.0L1205.8 229.8ZM1221.6 202.2L1219.7 200.6L1222.4 199.9ZM1358.1 336.4L1357.1 334.2L1359.8 334.6ZM1281.1 301.2L1279.0 300.0L1281.5 298.8ZM1324.9 264.5L1322.5 264.3L1324.3 262.1ZM1263.8 361.7L1261.6 360.5L1264.1 359.3ZM1400.3 481.7L1397.9 481.2L1400.0 479.3ZM1421.4 420.5L1419.8 418.7L1422.6 418.4ZM1148.3 184.6L1145.9 185.2L1147.0 182.6ZM1143.3 226.2L1141.0 226.8L1141.9 224.2ZM1242.9 305.7L1240.8 304.5L1243.3 303.3ZM1169.0 265.1L1167.4 263.2L1170.2 263.1ZM1139.3 196.8L1138.7 199.2L1136.9 197.0ZM1205.6 226.8L1203.2 226.3L1205.2 224.4ZM1189.1 195.2L1186.7 194.9L1188.6 192.8ZM1213.4 300.6L1211.0 300.6L1212.6 298.3ZM1278.8 289.0L1277.0 287.3L1279.7 286.7ZM1175.7 186.2L1173.3 186.4L1174.8 184.0ZM1190.1 170.8L1188.4 169.1L1191.1 168.5ZM1302.5 324.8L1300.1 324.8L1301.7 322.5ZM1287.4 319.3L1285.2 318.2L1287.6 316.8ZM1282.3 248.2L1279.9 248.6L1281.2 246.1ZM1400.5 385.0L1398.0 385.2L1399.5 382.8ZM1186.8 192.7L1184.8 194.1L1184.8 191.3ZM1173.5 160.0L1171.1 159.6L1173.1 157.6ZM1184.6 296.6L1182.2 296.4L1184.0 294.3ZM1333.9 406.5L1331.5 407.0L1332.6 404.4ZM1399.7 399.4L1397.3 399.3L1399.0 397.1ZM1192.9 276.4L1190.6 277.2L1191.4 274.5ZM1220.3 261.1L1218.1 262.2L1218.6 259.4ZM1225.8 238.7L1223.4 239.0L1224.7 236.6ZM1188.7 218.2L1186.8 219.7L1186.6 217.0ZM1258.7 310.5L1256.3 311.0L1257.5 308.4ZM1261.0 360.4L1258.5 360.2L1260.4 358.1ZM1274.9 295.9L1272.5 295.6L1274.4 293.5ZM1266.0 324.7L1263.7 323.7L1266.1 322.3ZM1228.8 208.3L1226.3 208.5L1227.8 206.1ZM1276.5 285.8L1274.2 285.2L1276.3 283.4ZM1331.2 274.9L1328.8 275.4L1329.9 272.8ZM1158.0 161.2L1156.7 163.3L1155.6 160.7ZM1302.6 317.5L1300.2 318.3L1301.0 315.6ZM1355.3 493.1L1353.0 492.1L1355.4 490.7ZM1251.3 312.9L1249.2 314.1L1249.4 311.3ZM1219.2 261.0L1216.8 261.3L1218.1 258.8ZM1147.9 212.2L1145.5 211.9L1147.3 209.8ZM1274.5 281.9L1272.1 281.7L1273.8 279.5ZM1272.4 345.4L1270.6 343.8L1273.3 343.1ZM1246.8 232.4L1244.4 231.9L1246.4 229.9ZM1175.9 222.8L1173.5 222.9L1175.0 220.5ZM1291.7 255.2L1290.0 257.0L1289.4 254.3ZM1224.6 219.1L1222.7 217.6L1225.3 216.8ZM1308.4 262.4L1305.9 262.6L1307.4 260.2ZM1210.4 263.5L1208.0 263.1L1209.9 261.1ZM1292.2 258.8L1289.9 258.0L1292.2 256.4ZM1188.9 274.9L1186.6 274.2L1188.8 272.5ZM1205.7 202.6L1204.2 200.7L1207.0 200.5ZM1163.9 179.7L1161.5 180.0L1162.8 177.6ZM1217.3 228.6L1215.2 229.9L1215.4 227.1ZM1315.8 427.8L1313.6 426.7L1316.0 425.3ZM1324.2 500.7L1322.8 498.7L1325.6 498.6ZM1218.8 264.5L1216.9 266.0L1216.7 263.2ZM1292.6 409.0L1291.7 406.8L1294.4 407.3ZM1146.7 211.9L1144.3 211.8L1146.0 209.5ZM1295.9 292.2L1293.4 292.0L1295.2 289.9ZM1164.9 251.5L1162.4 251.3L1164.2 249.1ZM1170.4 213.3L1169.3 215.5L1168.0 213.0ZM1225.9 207.4L1223.6 208.2L1224.4 205.5ZM1270.9 259.4L1268.6 258.6L1270.8 256.9ZM1292.8 322.2L1290.5 321.4L1292.8 319.8ZM1176.3 215.1L1173.9 214.3L1176.2 212.6ZM1338.7 368.8L1336.4 368.0L1338.6 366.3ZM1216.5 185.5L1215.0 183.5L1217.8 183.5ZM1318.2 395.0L1315.9 395.7L1316.8 393.0ZM1243.6 261.5L1242.7 259.2L1245.4 259.8ZM1382.6 345.0L1380.4 344.0L1382.8 342.6ZM1219.9 289.0L1217.8 287.9L1220.3 286.6ZM1251.1 332.2L1248.6 332.3L1250.2 330.0ZM1244.2 219.9L1242.1 218.7L1244.6 217.5ZM1264.8 228.4L1262.4 228.6L1263.8 226.2ZM1277.6 329.6L1275.1 329.6L1276.7 327.3ZM1170.6 251.7L1168.2 251.3L1170.2 249.3ZM1371.6 456.9L1370.4 454.8L1373.2 455.1ZM1324.0 361.3L1321.7 360.5L1323.9 358.8ZM1160.4 223.0L1158.9 221.1L1161.7 221.0ZM1258.0 207.0L1255.6 207.0L1257.2 204.7ZM1252.6 379.2L1251.7 376.9L1254.4 377.6ZM1356.2 348.8L1353.8 349.3L1355.0 346.7ZM1295.0 337.9L1292.6 337.8L1294.3 335.6ZM1306.7 422.3L1304.7 420.8L1307.4 420.0ZM1298.2 403.3L1295.7 403.5L1297.2 401.1ZM1282.7 345.8L1280.4 345.2L1282.5 343.4ZM1292.9 328.9L1290.5 328.3L1292.6 326.4ZM1246.3 208.1L1243.8 208.1L1245.5 205.8ZM1281.4 278.0L1279.6 276.4L1282.3 275.7ZM1159.3 161.2L1157.2 162.4L1157.4 159.7ZM1322.9 264.6L1320.6 265.4L1321.3 262.7ZM1243.4 212.3L1241.0 211.9L1243.0 209.9ZM1155.6 259.1L1153.4 260.3L1153.8 257.5ZM1155.5 157.0L1154.3 159.1L1153.1 156.6ZM1209.0 290.4L1206.5 290.7L1207.8 288.2ZM1236.5 277.3L1234.1 277.4L1235.7 275.0ZM1159.9 260.6L1158.0 262.1L1157.8 259.3ZM1167.5 195.2L1165.1 195.7L1166.2 193.1ZM1197.8 251.7L1195.3 251.9L1196.8 249.5ZM1148.5 195.5L1146.8 197.3L1146.2 194.6ZM1258.7 319.0L1257.4 316.9L1260.2 317.1ZM1281.3 267.0L1279.2 265.7L1281.8 264.6ZM1337.9 308.4L1336.0 306.9L1338.6 306.1ZM1177.5 279.5L1175.7 281.1L1175.4 278.3ZM1310.2 327.6L1308.4 329.1L1308.1 326.3ZM1197.9 212.7L1196.0 214.3L1195.7 211.5ZM1317.8 312.9L1315.4 312.9L1316.9 310.6ZM1181.2 234.9L1179.3 236.4L1179.1 233.7ZM1378.9 377.7L1376.6 376.9L1378.9 375.3ZM1151.5 218.3L1149.5 219.8L1149.4 217.0ZM1188.8 241.1L1186.6 240.0L1189.1 238.7ZM1355.5 331.8L1353.2 330.8L1355.6 329.3ZM1427.3 462.6L1425.3 461.3L1427.8 460.2ZM1176.6 152.6L1174.8 154.4L1174.3 151.6ZM1287.9 403.4L1285.6 404.1L1286.4 401.5ZM1298.0 340.0L1295.7 339.3L1297.9 337.6ZM1145.1 221.1L1143.3 222.7L1142.9 220.0ZM1263.5 377.5L1261.9 375.6L1264.7 375.3ZM1161.7 239.7L1159.4 240.3L1160.4 237.7ZM1248.3 249.4L1246.1 250.4L1246.6 247.6ZM1159.1 153.9L1158.0 156.1L1156.7 153.7ZM1297.4 315.3L1295.8 313.5L1298.6 313.2ZM1211.3 230.9L1209.0 230.2L1211.2 228.5ZM1365.2 454.7L1362.8 454.1L1365.0 452.3ZM1337.7 301.4L1335.2 301.8L1336.5 299.2ZM1258.8 357.7L1257.6 355.5L1260.4 355.8ZM1252.9 216.2L1251.3 218.1L1250.6 215.4ZM1250.4 206.4L1248.1 205.7L1250.3 204.0ZM1170.2 244.8L1167.9 245.7L1168.5 243.0Z" fill="#303b66"/></g>
<g opacity="0.5"><path d="M1063.7 345.3L1066.0 343.7M1071.1 309.3L1073.6 307.6M1156.8 294.0L1159.5 291.7M1096.9 345.2L1099.3 343.6M1076.1 334.4L1077.8 333.4M1090.4 303.9L1092.7 302.8M1142.7 326.0L1147.4 323.4M1150.3 300.4L1153.0 298.6M1081.0 363.3L1083.2 361.8M1081.8 315.9L1084.8 313.9M1159.3 295.2L1162.8 293.3M1094.2 320.1L1096.8 317.6M1133.8 302.7L1135.6 301.6M1137.4 310.0L1140.7 306.4M1124.1 304.2L1128.0 302.2M1146.7 318.5L1148.1 317.6M1166.1 303.8L1168.1 302.3M1144.0 279.3L1146.7 277.5M1128.6 329.1L1132.8 326.0M1121.0 335.9L1124.3 333.8M1032.2 326.5L1036.4 324.3M1147.0 267.6L1149.0 267.0M1139.0 326.2L1143.4 323.4M1135.7 305.0L1137.6 303.4M1120.5 314.6L1124.8 311.8" stroke="#5565a0" stroke-width="0.8" fill="none"/><path d="M1068.0 342.2L1066.7 344.7L1065.2 342.6ZM1075.6 306.1L1074.4 308.6L1072.9 306.5ZM1161.4 290.1L1160.4 292.7L1158.7 290.7ZM1101.4 342.2L1100.0 344.7L1098.6 342.5ZM1079.9 332.1L1078.5 334.5L1077.1 332.3ZM1095.0 301.8L1093.2 304.0L1092.1 301.6ZM1149.6 322.2L1148.1 324.5L1146.8 322.3ZM1155.1 297.2L1153.8 299.7L1152.3 297.5ZM1085.2 360.3L1083.9 362.8L1082.4 360.7ZM1086.9 312.5L1085.5 315.0L1084.1 312.9ZM1165.0 292.1L1163.4 294.4L1162.2 292.1ZM1098.6 315.8L1097.7 318.5L1095.9 316.6ZM1137.8 300.4L1136.2 302.7L1135.0 300.5ZM1142.4 304.6L1141.7 307.3L1139.7 305.5ZM1130.2 301.0L1128.6 303.3L1127.4 301.0ZM1150.2 316.3L1148.8 318.7L1147.4 316.5ZM1170.1 300.8L1168.9 303.4L1167.3 301.3ZM1148.8 276.0L1147.4 278.5L1146.0 276.4ZM1134.8 324.5L1133.6 327.0L1132.0 325.0ZM1126.4 332.5L1125.0 334.9L1123.6 332.7ZM1038.6 323.2L1037.0 325.5L1035.8 323.2ZM1151.3 266.2L1149.3 268.2L1148.6 265.7ZM1145.6 322.1L1144.1 324.6L1142.8 322.3ZM1139.5 301.8L1138.5 304.4L1136.8 302.4ZM1126.9 310.5L1125.5 312.9L1124.1 310.7Z" fill="#5565a0"/></g>
<clipPath id="fc1"><polygon points="1076.0,373.0 1187.0,300.5 1218.0,304.0 1224.0,314.0 1270.0,330.0 1275.0,405.0 1118.0,462.0 1040.0,470.0 1040.0,400.0"/></clipPath>
<g opacity="1.0" clip-path="url(#fc1)"><path d="M1247.3 351.8L1237.2 353.0M1144.6 377.4L1125.3 380.2M1172.6 396.4L1153.8 400.8M1188.2 404.9L1176.5 407.9M1213.8 352.1L1197.1 353.3M1218.9 371.5L1207.3 374.3M1145.5 372.3L1132.4 375.0M1137.1 378.2L1121.2 381.9M1189.3 333.1L1166.9 337.1M1177.4 422.4L1161.2 423.7M1082.0 374.9L1064.7 376.4M1207.0 373.7L1187.2 377.9M1150.1 398.7L1133.2 401.8M1169.7 337.0L1158.2 340.5M1188.3 376.2L1169.0 380.1M1225.0 350.3L1202.4 351.8M1184.3 335.9L1165.9 338.4M1090.3 379.5L1068.3 383.4M1215.3 310.1L1193.3 314.0M1225.5 345.2L1204.6 350.8M1174.0 336.3L1162.7 337.9M1150.7 360.5L1132.3 363.3M1139.8 414.5L1124.7 416.5M1185.7 316.1L1174.8 316.3M1206.5 407.4L1192.4 409.8M1083.5 378.2L1062.6 379.5M1140.0 403.8L1130.0 406.0M1137.9 438.4L1125.8 440.9M1164.8 413.2L1152.5 416.3M1155.0 398.1L1136.1 399.7M1115.5 395.4L1100.2 400.5M1124.3 444.6L1112.6 448.1M1186.2 411.6L1165.0 412.4M1188.5 389.7L1166.1 394.9M1180.6 358.5L1158.7 360.2M1097.9 380.3L1081.8 383.3M1080.0 391.9L1064.3 395.4M1125.7 400.6L1109.9 401.3M1243.0 341.7L1225.4 343.7M1136.0 426.3L1126.9 429.1M1118.2 355.3L1107.0 355.2M1187.7 345.9L1172.1 347.4M1184.7 424.8L1166.7 425.1M1161.0 320.5L1147.2 320.5M1174.1 315.0L1153.3 314.7M1222.6 377.0L1201.0 377.4M1146.2 367.6L1134.8 371.9M1136.9 437.3L1123.5 442.2M1166.4 361.5L1150.7 364.4M1176.6 330.9L1160.5 334.1M1111.8 435.3L1101.8 437.9M1138.7 348.5L1124.2 351.0M1183.9 370.3L1166.6 373.7M1135.0 422.3L1123.2 423.8M1107.7 403.9L1097.0 405.8M1089.4 429.2L1067.1 430.8M1239.8 353.7L1229.2 356.0M1208.4 394.5L1198.2 396.2M1160.2 406.3L1143.5 408.7M1171.4 393.5L1162.3 396.2M1144.5 444.0L1126.0 446.9M1232.5 395.0L1219.9 396.8M1158.8 385.0L1138.8 387.9M1096.6 417.6L1079.7 420.7M1192.6 351.8L1183.2 352.6M1087.8 379.9L1075.6 381.4M1165.1 341.7L1145.9 342.7M1085.3 376.7L1067.7 377.6M1191.6 390.4L1175.9 393.0M1107.8 402.9L1089.7 402.8M1116.0 442.9L1097.7 445.6M1242.7 378.5L1224.5 382.3M1124.1 368.4L1111.3 370.6M1195.1 333.4L1185.0 333.7M1180.8 326.8L1166.8 327.7M1225.6 331.5L1213.7 333.4M1179.1 371.9L1167.8 374.0M1161.5 411.8L1150.1 414.0M1241.2 397.6L1219.3 399.9M1171.2 338.8L1157.1 341.1M1116.1 395.3L1107.1 398.0M1139.5 420.1L1127.8 422.8M1235.7 338.3L1217.1 339.4M1135.4 336.6L1121.9 338.6M1244.3 391.6L1225.0 396.5M1190.5 354.4L1172.6 355.6M1184.9 384.5L1163.7 389.8M1130.5 409.7L1110.0 411.7M1254.2 400.0L1236.1 401.6M1155.1 432.1L1135.2 434.2M1140.6 358.4L1130.9 360.4M1221.8 411.9L1209.5 413.2M1132.7 434.1L1110.4 436.3M1139.6 384.2L1128.2 386.3M1180.2 377.6L1166.6 379.0M1219.3 364.4L1204.2 368.7M1204.1 326.2L1190.7 328.4M1198.5 408.8L1177.4 410.9M1192.9 387.6L1176.3 389.4M1175.4 382.0L1156.8 386.7M1098.4 403.3L1086.7 403.8M1165.5 318.9L1152.2 321.1M1098.1 390.0L1083.5 394.0M1181.3 366.4L1162.3 369.8M1224.6 381.6L1204.7 383.9M1183.4 423.7L1165.7 427.3M1201.7 361.9L1191.1 362.2M1143.8 379.0L1131.0 380.4M1227.0 318.0L1212.1 320.3M1209.8 387.6L1200.6 388.3M1167.7 433.4L1156.1 435.4M1124.2 346.2L1104.3 351.0M1129.2 428.1L1109.7 432.4M1200.1 362.8L1189.6 362.5M1227.4 386.5L1214.5 389.9M1223.9 401.8L1206.5 406.7M1231.2 380.6L1217.6 383.3M1128.7 422.1L1118.4 425.1M1197.1 354.5L1177.0 359.0M1130.9 367.1L1110.3 369.5M1192.3 422.8L1171.9 424.1M1153.5 436.3L1136.6 438.7M1162.3 392.8L1147.4 395.4M1175.6 362.3L1160.4 364.6M1133.0 405.9L1120.1 407.4M1178.5 308.2L1168.9 310.5M1240.1 353.3L1223.4 351.4M1190.9 306.3L1178.8 307.6M1246.0 345.4L1233.5 347.3M1187.4 309.5L1175.2 312.2M1135.2 397.2L1119.4 401.1M1155.5 342.1L1139.2 347.1M1142.7 355.6L1132.2 357.7M1093.9 436.8L1072.6 439.2M1241.3 350.0L1224.4 351.4M1196.3 417.3L1183.5 420.5M1104.8 424.8L1089.6 427.7M1153.1 369.0L1139.8 370.9M1254.1 391.2L1239.4 392.0M1146.8 409.6L1130.0 412.8M1126.9 395.7L1112.7 398.7M1141.7 354.9L1126.5 356.8M1246.1 393.4L1234.6 395.0M1185.9 409.8L1166.6 412.7M1132.0 367.6L1115.0 369.6M1088.6 370.2L1079.2 371.8M1079.6 377.1L1064.2 378.4M1118.0 423.0L1099.8 423.0M1103.1 406.6L1092.2 408.3M1162.4 405.4L1141.3 409.2M1105.5 398.9L1085.6 399.5M1135.6 426.8L1114.7 428.3M1193.1 349.9L1171.6 354.0M1149.6 420.9L1134.7 422.4M1180.1 371.0L1167.0 373.1M1184.6 331.3L1162.7 335.2M1129.6 376.5L1112.0 379.5M1256.5 400.3L1240.8 402.0M1195.0 334.0L1179.7 333.7M1206.4 384.7L1188.1 386.5M1138.6 421.5L1117.2 424.3M1142.3 348.6L1129.1 350.6M1095.9 435.1L1075.7 438.4M1119.0 381.0L1098.3 383.5M1141.4 443.5L1121.9 447.7M1122.0 424.2L1109.4 426.5M1165.5 344.1L1145.0 348.9M1243.6 341.5L1226.3 346.3M1103.3 361.3L1089.5 365.2M1242.2 343.6L1224.9 345.2M1130.6 402.3L1110.4 405.9M1233.2 409.1L1216.7 411.1M1091.2 403.4L1073.5 403.9M1108.5 376.3L1098.8 378.3M1103.8 447.4L1093.6 448.5M1167.0 335.8L1150.9 337.1M1106.1 432.5L1092.4 435.5M1126.0 444.3L1105.1 448.1M1221.4 374.1L1201.0 376.1M1083.0 401.1L1063.1 402.3M1127.3 370.2L1110.4 373.1M1140.6 379.0L1127.3 382.0M1108.7 450.1L1091.5 452.7M1143.6 347.9L1124.5 350.5M1184.7 309.8L1174.6 311.2M1158.4 431.4L1144.3 434.8M1222.9 326.5L1206.7 329.4M1116.0 377.7L1102.3 379.3M1144.8 353.8L1127.5 357.0M1231.6 336.7L1212.0 341.3M1210.6 346.8L1189.8 349.6M1211.0 327.0L1195.5 330.4M1163.5 427.2L1150.2 431.1M1183.9 320.6L1167.3 322.8M1135.1 350.1L1116.6 355.8M1187.9 391.9L1171.6 396.1M1112.9 394.1L1091.8 399.4M1168.2 377.7L1158.3 379.1M1214.2 381.7L1197.7 384.1M1194.6 338.0L1181.9 340.1M1208.0 348.6L1198.9 350.4M1123.4 366.8L1105.8 371.0M1157.4 355.2L1142.9 357.1M1189.8 379.3L1176.2 379.9M1199.8 317.2L1180.3 325.5M1192.0 332.1L1172.0 331.6M1109.5 443.5L1088.7 446.6M1182.4 418.0L1162.6 422.1M1164.2 402.3L1151.9 403.6M1161.2 365.6L1150.8 367.4M1122.5 420.6L1106.3 423.5M1159.3 394.6L1141.9 397.2M1111.2 391.5L1093.6 396.9M1205.7 390.1L1193.9 390.6M1152.4 378.9L1133.4 381.4M1192.9 327.5L1176.9 330.3M1180.9 316.4L1167.9 317.4M1213.5 377.0L1204.0 378.8M1225.1 361.1L1208.2 363.0M1098.1 426.1L1077.0 431.2M1198.3 351.1L1175.8 354.5M1169.4 322.1L1153.4 326.1M1196.0 407.9L1177.2 409.3M1119.1 388.9L1101.5 391.5M1213.8 311.0L1199.2 311.8M1212.4 323.9L1191.8 329.1M1246.9 369.3L1226.1 372.2M1203.6 332.9L1184.7 333.4M1215.9 376.5L1197.3 380.0M1194.3 412.6L1175.2 414.0M1195.5 375.1L1183.6 376.8M1114.7 362.9L1098.3 368.4M1129.9 384.4L1120.3 384.0M1167.5 358.8L1147.5 362.8M1191.9 399.5L1178.1 401.8M1128.1 356.9L1115.0 360.3M1114.6 384.5L1100.6 387.3M1135.2 412.1L1119.1 415.4M1158.2 413.4L1143.5 416.8M1215.8 308.6L1194.7 311.1M1176.4 333.9L1154.3 335.9M1229.1 324.2L1215.1 327.3M1145.7 337.6L1131.5 339.3M1186.2 428.3L1175.7 430.0M1251.8 370.2L1231.2 372.9M1216.6 307.7L1197.6 311.9M1233.0 338.3L1221.4 339.0M1227.5 360.5L1214.9 361.8M1230.1 343.2L1216.6 344.6M1184.7 376.8L1175.1 377.2M1178.8 427.3L1161.0 429.3M1112.2 373.3L1097.6 375.3M1195.3 365.2L1173.3 369.6M1148.7 330.8L1132.1 333.8M1146.2 388.4L1126.1 391.6M1117.3 350.3L1096.0 353.2M1100.8 368.2L1086.2 369.3M1238.5 343.5L1220.7 348.2M1195.9 361.4L1182.8 363.8M1140.3 353.4L1121.0 355.1M1132.3 440.8L1114.8 443.3M1156.0 367.9L1144.1 371.1M1138.8 362.4L1121.4 365.2M1169.0 334.2L1146.8 335.4M1248.4 350.5L1239.2 352.2M1192.3 422.7L1180.4 424.7M1147.9 372.9L1125.1 375.2M1108.8 451.5L1095.7 454.0M1165.3 424.8L1153.5 427.6M1232.5 331.9L1219.2 335.1M1188.3 324.6L1177.6 326.9M1093.5 376.7L1075.1 381.3M1245.8 373.8L1232.3 376.9M1169.7 356.0L1147.4 360.8M1198.8 314.3L1183.9 318.3M1219.0 365.2L1203.1 366.5M1206.8 317.5L1196.1 319.7M1218.0 361.8L1203.9 363.2M1114.6 364.7L1104.6 366.5M1173.1 415.3L1158.8 417.7M1148.3 407.9L1137.8 410.1M1194.5 351.0L1175.7 353.5M1128.1 367.8L1110.2 369.9M1140.1 398.2L1124.1 401.3M1112.8 446.6L1099.8 447.6M1137.0 389.4L1123.9 391.5M1196.7 350.4L1187.2 351.4M1144.1 400.9L1126.2 406.4M1194.9 306.7L1175.4 311.3M1156.3 434.8L1137.6 436.4M1147.6 419.6L1126.9 422.4M1123.0 419.4L1103.4 421.8M1132.7 420.7L1121.8 422.6M1145.5 346.7L1129.5 349.0M1186.9 319.5L1168.3 321.5M1154.5 421.3L1145.4 423.5M1219.1 328.6L1202.4 330.7M1226.6 337.4L1215.7 339.1M1187.9 425.2L1174.0 427.2M1145.2 345.5L1125.1 348.7M1243.3 358.5L1226.5 361.6M1175.9 427.9L1154.9 430.2M1197.9 321.1L1183.8 322.6M1239.8 363.9L1220.3 364.1M1135.6 361.9L1123.3 363.9M1154.6 407.2L1139.5 409.2M1117.6 435.3L1094.8 436.8M1206.1 319.2L1186.2 324.1M1116.2 365.0L1105.7 367.9M1199.2 326.3L1181.7 329.7M1143.6 370.0L1127.5 373.3M1179.7 408.1L1162.4 413.8M1211.2 350.7L1202.1 352.6M1246.0 392.3L1234.4 395.5M1152.8 350.0L1137.1 354.9M1197.8 424.2L1175.6 429.5M1108.1 357.3L1087.5 361.2M1207.1 403.0L1189.6 408.8M1108.1 411.7L1095.3 415.4M1242.4 402.8L1220.3 406.1M1151.1 417.3L1137.5 419.6M1173.1 384.2L1159.7 387.5M1119.0 404.1L1098.9 409.2M1244.1 364.7L1230.7 366.9M1195.3 402.2L1181.5 403.9M1140.2 393.7L1117.9 393.4M1087.0 382.7L1074.2 386.3M1087.7 387.4L1078.3 390.7M1102.7 391.0L1086.0 393.3M1116.5 408.0L1104.1 409.8M1090.3 382.7L1076.7 386.3M1110.8 424.6L1090.3 426.1M1126.7 368.3L1115.7 370.9M1154.3 395.6L1141.1 397.2M1138.2 350.9L1116.6 356.8M1095.2 416.5L1083.1 417.6M1141.7 417.9L1120.1 420.9M1238.9 379.4L1218.7 381.5M1177.8 362.0L1155.0 364.2M1191.5 392.7L1176.9 398.0M1192.0 352.3L1170.6 360.7M1091.2 373.2L1075.5 373.9M1220.9 348.1L1200.9 352.5M1169.1 435.8L1159.9 436.9M1112.9 401.0L1092.5 403.8M1103.9 421.2L1086.6 420.8M1213.7 359.7L1199.3 362.2M1202.7 378.0L1190.0 379.9M1214.4 387.3L1193.7 389.8M1094.2 411.8L1077.0 414.8M1227.8 371.8L1215.3 374.3M1179.0 332.0L1157.3 336.3M1244.6 364.2L1235.1 365.7M1193.0 320.4L1170.4 322.7M1169.8 420.7L1148.7 425.8M1250.8 396.7L1237.1 398.3M1192.4 382.1L1170.2 385.9M1121.6 371.4L1108.6 374.4M1215.1 412.7L1197.5 414.7M1096.2 381.9L1081.8 383.1M1190.7 393.4L1179.2 393.3M1200.1 332.4L1187.2 333.3M1244.5 396.2L1229.5 399.6M1117.0 400.7L1098.8 401.0M1213.3 388.1L1196.6 390.1M1140.9 394.4L1128.9 396.8M1204.5 373.9L1187.7 374.6M1226.1 351.3L1214.3 351.0M1180.4 363.7L1165.2 367.0M1117.6 438.2L1101.5 441.0M1118.4 393.9L1109.2 395.6M1142.1 399.2L1124.8 401.6M1168.2 364.9L1148.4 367.3M1138.4 435.8L1122.3 436.6M1127.3 414.3L1105.6 420.4M1190.4 309.5L1171.5 312.7M1161.6 371.9L1150.0 372.5M1182.6 325.2L1172.1 326.6M1191.4 372.1L1182.3 373.8M1219.4 344.5L1206.2 346.0M1186.8 400.6L1173.5 405.0M1091.8 423.9L1082.0 426.0M1146.9 386.5L1131.3 389.3M1187.5 412.7L1175.7 415.5M1238.6 402.1L1228.5 404.4M1176.9 415.1L1158.3 418.5M1211.7 323.5L1198.9 325.8M1151.4 387.7L1136.7 389.8M1216.5 405.9L1201.4 407.5M1132.0 422.5L1117.9 422.8M1247.5 371.5L1225.4 375.3M1117.8 438.0L1101.8 439.3M1214.9 348.0L1204.7 348.2M1188.2 365.1L1166.0 368.1M1207.4 317.0L1189.5 319.2M1205.9 321.3L1195.1 323.2M1164.5 319.0L1153.4 320.2M1135.1 360.9L1117.6 364.8M1095.2 369.8L1080.0 370.8M1105.4 422.8L1085.5 421.0M1100.4 361.0L1083.3 363.6M1212.4 390.5L1200.0 392.8M1208.8 342.0L1193.5 346.6M1099.8 425.3L1085.3 427.9M1132.7 450.0L1110.1 451.4M1122.0 438.9L1103.6 444.1M1242.2 355.9L1224.1 360.8M1121.9 418.9L1110.6 419.9M1190.3 308.1L1177.7 308.7M1110.8 440.5L1099.5 443.5M1234.1 371.7L1215.1 374.4M1249.3 370.5L1231.7 372.3M1202.2 348.4L1190.7 349.5M1209.5 365.9L1195.8 368.2M1198.6 385.7L1176.9 389.8M1202.1 317.9L1182.2 321.2M1193.1 356.3L1178.1 358.6M1127.5 409.9L1106.6 412.6M1097.7 404.8L1080.7 411.6M1154.8 371.9L1141.7 372.6M1196.7 309.7L1179.0 312.0M1139.9 348.2L1129.8 350.1M1171.6 320.3L1155.2 321.4M1180.3 379.3L1169.9 380.7M1197.4 354.5L1188.7 357.0M1150.5 437.1L1138.2 439.9M1152.6 430.4L1139.7 433.5M1135.6 410.9L1116.6 412.6M1205.6 407.5L1189.5 409.3M1222.6 386.3L1211.8 387.1M1237.9 350.4L1223.5 349.2M1146.4 370.3L1132.9 372.0M1156.0 366.4L1137.5 367.4M1221.0 356.2L1205.3 358.5M1235.3 408.7L1218.9 411.6M1211.6 308.1L1190.3 312.8M1199.8 347.8L1183.1 350.9M1176.7 407.7L1166.7 408.4M1105.8 407.2L1087.1 410.1M1245.7 353.1L1230.2 355.2M1141.8 426.6L1123.5 430.6M1106.0 370.1L1088.4 371.4M1094.2 397.4L1078.9 400.5M1131.1 438.6L1109.0 442.9M1178.7 414.2L1162.1 415.7M1179.6 408.1L1164.2 411.6M1203.8 307.0L1186.8 309.7M1114.0 368.4L1099.2 372.5M1170.5 348.3L1158.2 348.8M1177.7 376.8L1160.1 379.0M1233.3 373.3L1215.9 378.7M1105.1 449.6L1095.8 451.1M1219.8 318.4L1199.9 321.5M1096.0 381.8L1073.8 386.6M1180.1 399.4L1169.2 401.6M1098.9 416.2L1082.1 419.0M1212.0 410.8L1195.2 413.2M1243.3 360.0L1225.0 363.8M1134.0 393.4L1111.9 396.6M1217.2 337.7L1194.7 341.8M1222.9 392.0L1205.4 393.6M1172.9 327.6L1159.2 329.2M1176.2 413.4L1159.3 414.0M1149.2 338.0L1131.9 341.9M1198.7 395.3L1178.5 399.1M1143.1 336.1L1120.9 341.4M1178.8 386.0L1160.7 388.6M1164.2 390.4L1142.9 393.2M1212.1 362.9L1189.8 365.8M1172.4 370.6L1154.3 372.3M1116.2 429.9L1104.1 430.8M1249.3 373.0L1233.4 374.8M1204.6 309.8L1195.5 310.5M1235.7 378.0L1219.1 379.5M1193.1 381.4L1172.0 384.7M1209.5 366.2L1197.1 367.7M1228.9 388.9L1219.7 389.0M1121.9 436.0L1102.3 436.5M1141.9 366.3L1130.4 367.5M1195.5 331.0L1172.9 333.9M1183.1 325.7L1166.5 328.9M1150.5 389.8L1135.9 393.7M1196.1 385.4L1179.1 389.9M1096.7 415.3L1077.4 419.6M1182.2 344.2L1166.7 345.7M1214.9 346.4L1204.9 347.8M1103.9 391.7L1082.3 394.6M1113.8 448.2L1097.0 452.3M1116.7 410.0L1101.6 411.0M1192.6 307.5L1175.9 306.2M1121.3 355.5L1109.9 358.5M1200.8 325.2L1188.1 326.9M1147.2 406.2L1134.4 410.7M1133.0 392.4L1112.3 395.8M1171.1 369.4L1150.4 372.6M1210.6 334.0L1190.2 339.8M1144.4 354.5L1126.2 356.2M1137.6 446.9L1120.4 450.5M1117.3 403.0L1095.4 404.8M1127.0 431.2L1108.8 433.0M1250.7 370.4L1232.0 375.2M1205.7 307.0L1184.4 313.4M1192.1 323.3L1171.7 326.2M1145.2 372.2L1128.5 374.6M1188.6 380.3L1169.3 384.7M1203.6 404.9L1182.1 406.4M1148.4 408.5L1128.3 410.0M1114.2 453.5L1103.0 453.8M1201.2 395.2L1188.1 396.9M1243.3 405.7L1231.6 409.4M1210.9 343.3L1192.7 347.2M1122.6 373.2L1105.9 373.5M1174.9 426.4L1155.1 430.9M1156.5 414.5L1146.1 414.6M1123.7 371.7L1112.5 374.0M1201.4 311.7L1186.5 314.2M1202.6 389.4L1190.9 393.9M1113.3 418.4L1098.1 421.6M1220.0 402.9L1207.1 404.4M1128.9 387.1L1111.4 387.6" stroke="#a2b3e4" stroke-width="1.7" fill="none"/><path d="M1232.2 353.5L1236.8 350.1L1237.5 355.8ZM1120.4 381.0L1124.9 377.4L1125.7 383.1ZM1148.9 402.0L1153.1 398.0L1154.5 403.6ZM1171.7 409.1L1175.8 405.1L1177.2 410.7ZM1192.1 353.7L1196.8 350.4L1197.3 356.2ZM1202.4 375.5L1206.6 371.5L1207.9 377.1ZM1127.5 376.0L1131.8 372.2L1133.0 377.9ZM1116.3 383.0L1120.5 379.0L1121.8 384.7ZM1161.9 337.9L1166.4 334.2L1167.4 339.9ZM1156.2 424.1L1160.9 420.8L1161.4 426.6ZM1059.8 376.8L1064.5 373.5L1065.0 379.3ZM1182.3 379.0L1186.6 375.1L1187.8 380.8ZM1128.2 402.7L1132.6 398.9L1133.7 404.7ZM1153.5 341.9L1157.4 337.7L1159.1 343.3ZM1164.1 381.1L1168.4 377.3L1169.6 383.0ZM1197.4 352.2L1202.2 348.9L1202.6 354.7ZM1161.0 339.0L1165.5 335.5L1166.3 341.2ZM1063.4 384.3L1067.8 380.5L1068.8 386.2ZM1188.3 314.9L1192.8 311.1L1193.8 316.8ZM1199.7 352.1L1203.8 348.0L1205.3 353.6ZM1157.8 338.6L1162.3 335.0L1163.1 340.8ZM1127.3 364.1L1131.8 360.5L1132.7 366.2ZM1119.7 417.1L1124.3 413.6L1125.1 419.4ZM1169.8 316.5L1174.7 313.4L1174.9 319.2ZM1187.5 410.7L1191.9 407.0L1192.9 412.7ZM1057.6 379.8L1062.4 376.6L1062.8 382.4ZM1125.1 407.0L1129.3 403.1L1130.6 408.8ZM1121.0 442.0L1125.2 438.1L1126.5 443.8ZM1147.7 417.5L1151.8 413.5L1153.2 419.1ZM1131.1 400.1L1135.8 396.8L1136.3 402.6ZM1095.5 402.0L1099.3 397.7L1101.1 403.2ZM1107.8 449.6L1111.8 445.3L1113.5 450.9ZM1160.0 412.6L1164.8 409.5L1165.1 415.3ZM1161.3 396.0L1165.5 392.1L1166.8 397.7ZM1153.7 360.6L1158.5 357.3L1158.9 363.1ZM1076.9 384.2L1081.3 380.5L1082.4 386.2ZM1059.4 396.5L1063.7 392.6L1064.9 398.3ZM1104.9 401.5L1109.7 398.4L1110.0 404.2ZM1220.4 344.3L1225.0 340.8L1225.7 346.6ZM1122.1 430.6L1126.0 426.4L1127.7 431.9ZM1102.0 355.1L1107.0 352.3L1106.9 358.1ZM1167.1 347.8L1171.8 344.5L1172.4 350.3ZM1161.7 425.2L1166.7 422.2L1166.8 428.0ZM1142.2 320.4L1147.2 317.6L1147.2 323.4ZM1148.3 314.7L1153.4 311.8L1153.3 317.6ZM1196.0 377.5L1201.0 374.5L1201.1 380.3ZM1130.1 373.7L1133.8 369.2L1135.8 374.6ZM1118.8 443.9L1122.5 439.5L1124.5 444.9ZM1145.8 365.3L1150.2 361.5L1151.3 367.2ZM1155.6 335.0L1159.9 331.2L1161.0 336.9ZM1097.0 439.2L1101.1 435.1L1102.6 440.7ZM1119.3 351.9L1123.7 348.2L1124.7 353.9ZM1161.7 374.7L1166.1 370.9L1167.2 376.6ZM1118.3 424.5L1122.9 421.0L1123.6 426.7ZM1092.1 406.7L1096.5 403.0L1097.5 408.7ZM1062.2 431.1L1066.9 427.9L1067.3 433.7ZM1224.3 357.1L1228.6 353.2L1229.8 358.9ZM1193.3 397.1L1197.7 393.4L1198.7 399.1ZM1138.5 409.4L1143.1 405.8L1143.9 411.6ZM1157.5 397.6L1161.4 393.4L1163.1 399.0ZM1121.0 447.7L1125.5 444.1L1126.4 449.8ZM1215.0 397.5L1219.5 393.9L1220.3 399.7ZM1133.9 388.6L1138.4 385.0L1139.2 390.8ZM1074.7 421.5L1079.1 417.8L1080.2 423.5ZM1178.2 353.1L1182.9 349.7L1183.4 355.5ZM1070.6 382.0L1075.2 378.5L1075.9 384.2ZM1140.9 343.0L1145.8 339.8L1146.1 345.6ZM1062.7 377.9L1067.6 374.7L1067.9 380.5ZM1171.0 393.9L1175.4 390.2L1176.4 395.9ZM1084.7 402.8L1089.7 399.9L1089.7 405.7ZM1092.8 446.3L1097.3 442.7L1098.1 448.4ZM1219.6 383.3L1223.9 379.5L1225.1 385.1ZM1106.3 371.4L1110.8 367.7L1111.7 373.4ZM1180.0 333.9L1184.9 330.8L1185.1 336.6ZM1161.8 328.0L1166.6 324.8L1167.0 330.6ZM1208.8 334.1L1213.3 330.5L1214.2 336.2ZM1162.9 374.9L1167.3 371.1L1168.3 376.8ZM1145.2 414.9L1149.5 411.1L1150.6 416.8ZM1214.3 400.4L1219.0 397.0L1219.6 402.8ZM1152.2 341.9L1156.6 338.2L1157.6 343.9ZM1102.3 399.5L1106.2 395.2L1107.9 400.8ZM1122.9 423.9L1127.1 420.0L1128.4 425.6ZM1212.1 339.7L1216.9 336.5L1217.2 342.3ZM1117.0 339.3L1121.5 335.7L1122.3 341.4ZM1220.2 397.7L1224.3 393.6L1225.7 399.3ZM1167.6 356.0L1172.4 352.7L1172.8 358.5ZM1158.9 391.0L1163.0 386.9L1164.4 392.6ZM1105.0 412.2L1109.7 408.8L1110.3 414.6ZM1231.2 402.0L1235.9 398.7L1236.4 404.5ZM1130.2 434.7L1134.9 431.3L1135.5 437.1ZM1126.0 361.4L1130.4 357.6L1131.5 363.3ZM1204.5 413.8L1209.2 410.4L1209.8 416.1ZM1105.5 436.8L1110.2 433.4L1110.7 439.2ZM1123.3 387.1L1127.7 383.4L1128.8 389.1ZM1161.7 379.4L1166.4 376.1L1166.9 381.8ZM1199.4 370.0L1203.4 365.9L1205.0 371.5ZM1185.7 329.2L1190.2 325.5L1191.1 331.2ZM1172.4 411.3L1177.1 408.0L1177.7 413.8ZM1171.3 389.9L1176.0 386.5L1176.6 392.3ZM1151.9 387.9L1156.1 383.9L1157.5 389.5ZM1081.7 404.0L1086.6 400.9L1086.8 406.7ZM1147.3 322.0L1151.7 318.3L1152.7 324.0ZM1078.6 395.4L1082.7 391.2L1084.2 396.8ZM1157.4 370.7L1161.8 367.0L1162.8 372.7ZM1199.7 384.5L1204.4 381.1L1205.0 386.8ZM1160.8 428.3L1165.1 424.4L1166.3 430.1ZM1186.1 362.4L1191.0 359.3L1191.2 365.1ZM1126.0 381.0L1130.7 377.5L1131.3 383.3ZM1207.1 321.0L1211.6 317.4L1212.5 323.2ZM1195.6 388.6L1200.4 385.4L1200.8 391.2ZM1151.2 436.3L1155.6 432.6L1156.6 438.3ZM1099.5 352.1L1103.7 348.2L1105.0 353.8ZM1104.8 433.4L1109.1 429.5L1110.3 435.2ZM1184.6 362.4L1189.6 359.6L1189.5 365.4ZM1209.6 391.2L1213.7 387.1L1215.2 392.7ZM1201.6 408.0L1205.7 403.9L1207.2 409.5ZM1212.7 384.2L1217.1 380.4L1218.2 386.1ZM1113.6 426.4L1117.6 422.3L1119.2 427.8ZM1172.1 360.1L1176.3 356.2L1177.6 361.9ZM1105.3 370.1L1109.9 366.6L1110.6 372.4ZM1166.9 424.4L1171.7 421.2L1172.1 427.0ZM1131.7 439.4L1136.2 435.8L1137.0 441.6ZM1142.4 396.3L1146.9 392.5L1147.9 398.3ZM1155.4 365.3L1160.0 361.7L1160.8 367.4ZM1115.2 408.0L1119.8 404.5L1120.5 410.3ZM1164.0 311.6L1168.2 307.7L1169.6 313.3ZM1218.5 350.8L1223.8 348.5L1223.1 354.2ZM1173.9 308.1L1178.5 304.7L1179.2 310.5ZM1228.5 348.1L1233.1 344.4L1233.9 350.2ZM1170.3 313.3L1174.5 309.4L1175.8 315.0ZM1114.5 402.3L1118.7 398.3L1120.1 403.9ZM1134.4 348.6L1138.3 344.3L1140.0 349.9ZM1127.3 358.7L1131.7 354.9L1132.8 360.6ZM1067.6 439.8L1072.2 436.3L1072.9 442.1ZM1219.4 351.8L1224.1 348.5L1224.6 354.3ZM1178.6 421.6L1182.8 417.6L1184.1 423.3ZM1084.7 428.6L1089.1 424.8L1090.2 430.5ZM1134.9 371.6L1139.4 368.0L1140.2 373.8ZM1234.4 392.3L1239.2 389.1L1239.6 394.9ZM1125.1 413.8L1129.4 410.0L1130.5 415.7ZM1107.8 399.8L1112.1 395.9L1113.3 401.6ZM1121.5 357.4L1126.1 353.9L1126.8 359.6ZM1229.6 395.7L1234.2 392.1L1235.0 397.9ZM1161.6 413.4L1166.1 409.8L1167.0 415.5ZM1110.1 370.2L1114.7 366.7L1115.3 372.5ZM1074.2 372.7L1078.7 369.0L1079.6 374.7ZM1059.3 378.8L1064.0 375.5L1064.5 381.3ZM1094.8 422.9L1099.8 420.1L1099.8 425.9ZM1087.2 409.0L1091.7 405.4L1092.6 411.1ZM1136.4 410.1L1140.8 406.3L1141.8 412.0ZM1080.6 399.7L1085.5 396.6L1085.7 402.4ZM1109.7 428.7L1114.5 425.4L1114.9 431.2ZM1166.7 354.9L1171.1 351.1L1172.1 356.8ZM1129.8 422.9L1134.4 419.5L1135.0 425.3ZM1162.0 373.9L1166.5 370.2L1167.4 376.0ZM1157.7 336.1L1162.2 332.3L1163.2 338.0ZM1107.0 380.4L1111.5 376.7L1112.5 382.4ZM1235.9 402.6L1240.5 399.1L1241.2 404.9ZM1174.7 333.6L1179.8 330.8L1179.7 336.6ZM1183.2 387.0L1187.9 383.6L1188.4 389.4ZM1112.2 424.9L1116.8 421.4L1117.5 427.2ZM1124.2 351.3L1128.7 347.7L1129.5 353.5ZM1070.8 439.2L1075.2 435.6L1076.2 441.3ZM1093.3 384.1L1097.9 380.6L1098.6 386.4ZM1117.1 448.8L1121.3 444.9L1122.6 450.6ZM1104.5 427.4L1108.9 423.6L1109.9 429.3ZM1140.1 350.1L1144.3 346.1L1145.6 351.8ZM1221.4 347.7L1225.5 343.6L1227.0 349.1ZM1084.7 366.5L1088.7 362.4L1090.2 368.0ZM1219.9 345.7L1224.6 342.3L1225.1 348.1ZM1105.4 406.8L1109.9 403.1L1110.9 408.8ZM1211.7 411.7L1216.3 408.2L1217.0 414.0ZM1068.5 404.1L1073.4 401.0L1073.6 406.8ZM1093.9 379.3L1098.3 375.4L1099.4 381.1ZM1088.6 449.0L1093.2 445.6L1093.9 451.4ZM1145.9 337.5L1150.6 334.2L1151.1 340.0ZM1087.5 436.6L1091.7 432.7L1093.0 438.3ZM1100.2 449.0L1104.6 445.2L1105.7 450.9ZM1196.0 376.6L1200.7 373.3L1201.3 379.0ZM1058.1 402.6L1063.0 399.4L1063.3 405.2ZM1105.5 373.9L1109.9 370.2L1110.9 375.9ZM1122.4 383.1L1126.7 379.2L1127.9 384.8ZM1086.6 453.4L1091.1 449.8L1091.9 455.6ZM1119.5 351.2L1124.1 347.6L1124.9 353.4ZM1169.6 311.9L1174.1 308.3L1175.0 314.1ZM1139.5 436.0L1143.7 432.0L1145.0 437.6ZM1201.8 330.3L1206.2 326.6L1207.2 332.3ZM1097.4 379.9L1102.0 376.5L1102.7 382.2ZM1122.6 357.9L1127.0 354.1L1128.0 359.8ZM1207.1 342.4L1211.3 338.5L1212.6 344.1ZM1184.8 350.2L1189.4 346.7L1190.2 352.4ZM1190.6 331.5L1194.9 327.6L1196.2 333.3ZM1145.4 432.4L1149.4 428.3L1151.0 433.8ZM1162.4 323.4L1167.0 319.9L1167.7 325.7ZM1111.8 357.2L1115.8 353.0L1117.5 358.5ZM1166.8 397.3L1170.9 393.3L1172.3 398.9ZM1087.0 400.7L1091.1 396.6L1092.5 402.2ZM1153.4 379.9L1157.9 376.3L1158.8 382.0ZM1192.7 384.8L1197.3 381.3L1198.1 387.0ZM1177.0 341.0L1181.4 337.3L1182.4 343.0ZM1194.0 351.3L1198.4 347.5L1199.5 353.2ZM1101.0 372.2L1105.1 368.2L1106.5 373.8ZM1137.9 357.7L1142.5 354.2L1143.2 359.9ZM1171.2 380.1L1176.0 377.0L1176.3 382.8ZM1175.7 327.5L1179.1 322.8L1181.4 328.2ZM1167.0 331.4L1172.0 328.7L1171.9 334.5ZM1083.8 447.3L1088.3 443.7L1089.2 449.5ZM1157.7 423.1L1162.0 419.3L1163.2 425.0ZM1146.9 404.1L1151.6 400.7L1152.2 406.5ZM1145.9 368.3L1150.3 364.6L1151.3 370.3ZM1101.4 424.4L1105.8 420.7L1106.8 426.4ZM1136.9 397.9L1141.4 394.3L1142.3 400.1ZM1088.8 398.3L1092.8 394.1L1094.5 399.7ZM1188.9 390.8L1193.8 387.7L1194.0 393.5ZM1128.5 382.0L1133.0 378.5L1133.8 384.3ZM1172.0 331.2L1176.4 327.5L1177.4 333.2ZM1162.9 317.8L1167.7 314.5L1168.1 320.3ZM1199.1 379.7L1203.5 376.0L1204.5 381.7ZM1203.2 363.5L1207.9 360.1L1208.5 365.8ZM1072.2 432.3L1076.4 428.3L1077.7 434.0ZM1170.9 355.2L1175.4 351.6L1176.2 357.4ZM1148.5 327.3L1152.7 323.3L1154.1 328.9ZM1172.2 409.6L1177.0 406.4L1177.4 412.2ZM1096.5 392.2L1101.1 388.6L1101.9 394.4ZM1194.2 312.1L1199.1 308.9L1199.4 314.7ZM1186.9 330.3L1191.1 326.2L1192.5 331.9ZM1221.1 372.8L1225.7 369.3L1226.5 375.0ZM1179.7 333.5L1184.6 330.5L1184.8 336.3ZM1192.4 381.0L1196.8 377.2L1197.9 382.9ZM1170.2 414.3L1175.0 411.1L1175.4 416.9ZM1178.6 377.5L1183.2 373.9L1184.0 379.7ZM1093.5 370.0L1097.4 365.6L1099.2 371.1ZM1115.3 383.8L1120.4 381.1L1120.2 386.9ZM1142.6 363.8L1147.0 360.0L1148.1 365.7ZM1173.2 402.6L1177.7 398.9L1178.6 404.6ZM1110.2 361.5L1114.3 357.4L1115.8 363.1ZM1095.7 388.2L1100.1 384.4L1101.2 390.1ZM1114.2 416.5L1118.5 412.6L1119.7 418.3ZM1138.7 417.9L1142.9 413.9L1144.2 419.6ZM1189.7 311.7L1194.3 308.2L1195.0 314.0ZM1149.3 336.4L1154.0 333.0L1154.6 338.8ZM1210.2 328.4L1214.5 324.5L1215.8 330.1ZM1126.5 339.9L1131.1 336.4L1131.8 342.2ZM1170.7 430.8L1175.2 427.1L1176.1 432.9ZM1226.2 373.5L1230.8 370.0L1231.6 375.7ZM1192.7 313.0L1196.9 309.1L1198.2 314.7ZM1216.4 339.3L1221.2 336.1L1221.6 341.9ZM1209.9 362.3L1214.6 358.9L1215.2 364.7ZM1211.7 345.1L1216.3 341.7L1216.9 347.5ZM1170.1 377.4L1174.9 374.3L1175.2 380.0ZM1156.1 429.9L1160.7 426.4L1161.4 432.2ZM1092.7 375.9L1097.3 372.4L1098.0 378.1ZM1168.4 370.6L1172.8 366.8L1173.9 372.5ZM1127.2 334.7L1131.6 330.9L1132.7 336.6ZM1121.2 392.4L1125.6 388.7L1126.5 394.5ZM1091.0 353.8L1095.6 350.3L1096.4 356.1ZM1081.2 369.7L1086.0 366.4L1086.4 372.2ZM1215.9 349.5L1220.0 345.4L1221.5 351.0ZM1177.9 364.7L1182.3 360.9L1183.3 366.6ZM1116.0 355.6L1120.7 352.2L1121.3 358.0ZM1109.9 444.0L1114.4 440.4L1115.2 446.1ZM1139.3 372.4L1143.4 368.3L1144.9 373.9ZM1116.5 366.0L1121.0 362.4L1121.9 368.1ZM1141.8 335.6L1146.7 332.5L1147.0 338.3ZM1234.2 353.1L1238.6 349.4L1239.7 355.1ZM1175.4 425.6L1179.9 421.9L1180.9 427.6ZM1120.1 375.7L1124.8 372.4L1125.3 378.1ZM1090.8 454.9L1095.1 451.1L1096.2 456.8ZM1148.7 428.8L1152.9 424.8L1154.2 430.4ZM1214.3 336.2L1218.5 332.2L1219.8 337.9ZM1172.7 328.0L1176.9 324.1L1178.2 329.8ZM1070.3 382.5L1074.4 378.5L1075.8 384.1ZM1227.5 378.0L1231.7 374.1L1233.0 379.7ZM1142.5 361.9L1146.8 358.0L1148.1 363.7ZM1179.1 319.6L1183.2 315.5L1184.7 321.1ZM1198.1 366.9L1202.8 363.6L1203.3 369.4ZM1191.2 320.7L1195.5 316.9L1196.7 322.6ZM1199.0 363.7L1203.6 360.3L1204.2 366.1ZM1099.7 367.4L1104.1 363.7L1105.1 369.4ZM1153.9 418.6L1158.3 414.9L1159.3 420.6ZM1133.0 411.2L1137.2 407.3L1138.5 413.0ZM1170.7 354.2L1175.3 350.6L1176.1 356.4ZM1105.2 370.4L1109.8 367.0L1110.5 372.7ZM1119.2 402.2L1123.6 398.4L1124.7 404.1ZM1094.9 448.0L1099.6 444.7L1100.1 450.5ZM1119.0 392.2L1123.5 388.6L1124.4 394.3ZM1182.2 352.0L1186.8 348.5L1187.5 354.3ZM1121.5 407.9L1125.4 403.6L1127.1 409.2ZM1170.5 312.5L1174.7 308.5L1176.0 314.2ZM1132.6 436.9L1137.3 433.5L1137.8 439.3ZM1121.9 423.1L1126.5 419.6L1127.2 425.3ZM1098.5 422.3L1103.1 418.9L1103.8 424.6ZM1116.9 423.5L1121.3 419.7L1122.3 425.4ZM1124.6 349.7L1129.1 346.1L1130.0 351.8ZM1163.4 322.0L1168.0 318.6L1168.6 324.3ZM1140.5 424.7L1144.7 420.7L1146.1 426.3ZM1197.4 331.4L1202.0 327.8L1202.7 333.6ZM1210.7 339.9L1215.2 336.3L1216.1 342.0ZM1169.1 427.9L1173.6 424.3L1174.5 430.0ZM1120.2 349.5L1124.6 345.9L1125.6 351.6ZM1221.6 362.5L1226.0 358.8L1227.1 364.5ZM1149.9 430.8L1154.5 427.4L1155.2 433.1ZM1178.9 323.1L1183.5 319.7L1184.1 325.5ZM1215.3 364.2L1220.3 361.2L1220.4 367.0ZM1118.3 364.7L1122.8 361.1L1123.7 366.8ZM1134.5 409.8L1139.1 406.3L1139.9 412.0ZM1089.8 437.1L1094.6 433.9L1095.0 439.7ZM1181.4 325.3L1185.5 321.2L1186.9 326.9ZM1100.8 369.2L1104.9 365.1L1106.4 370.7ZM1176.8 330.6L1181.2 326.8L1182.3 332.5ZM1122.6 374.3L1126.9 370.5L1128.0 376.1ZM1157.7 415.4L1161.5 411.1L1163.4 416.6ZM1197.2 353.6L1201.5 349.8L1202.7 355.5ZM1229.6 396.8L1233.6 392.7L1235.1 398.3ZM1132.3 356.4L1136.2 352.1L1137.9 357.7ZM1170.7 430.7L1174.9 426.7L1176.2 432.4ZM1082.5 362.2L1086.9 358.4L1088.0 364.1ZM1184.8 410.4L1188.7 406.1L1190.5 411.6ZM1090.5 416.8L1094.5 412.6L1096.1 418.2ZM1215.4 406.8L1219.9 403.2L1220.7 408.9ZM1132.6 420.4L1137.1 416.7L1138.0 422.4ZM1154.8 388.7L1159.0 384.7L1160.4 390.3ZM1094.0 410.4L1098.2 406.4L1099.6 412.0ZM1225.8 367.6L1230.3 364.0L1231.2 369.7ZM1176.5 404.5L1181.1 401.0L1181.8 406.7ZM1112.9 393.3L1118.0 390.5L1117.9 396.3ZM1069.4 387.7L1073.4 383.5L1075.0 389.1ZM1073.6 392.4L1077.3 388.0L1079.2 393.4ZM1081.0 393.9L1085.6 390.4L1086.4 396.1ZM1099.2 410.5L1103.7 406.9L1104.5 412.6ZM1071.8 387.6L1075.9 383.5L1077.4 389.1ZM1085.3 426.5L1090.1 423.2L1090.5 429.0ZM1110.9 372.1L1115.0 368.1L1116.4 373.7ZM1136.2 397.8L1140.8 394.3L1141.5 400.1ZM1111.8 358.1L1115.8 354.0L1117.4 359.6ZM1078.2 418.1L1082.9 414.7L1083.4 420.5ZM1115.1 421.6L1119.7 418.0L1120.5 423.8ZM1213.7 382.0L1218.4 378.6L1219.0 384.3ZM1150.0 364.7L1154.7 361.3L1155.2 367.1ZM1172.2 399.7L1175.9 395.3L1177.9 400.7ZM1165.9 362.5L1169.5 358.0L1171.7 363.4ZM1070.5 374.1L1075.3 371.0L1075.6 376.8ZM1196.0 353.6L1200.3 349.7L1201.5 355.3ZM1154.9 437.6L1159.5 434.1L1160.2 439.8ZM1087.5 404.5L1092.1 400.9L1092.9 406.7ZM1081.6 420.7L1086.7 417.9L1086.5 423.7ZM1194.4 363.1L1198.8 359.4L1199.8 365.1ZM1185.1 380.6L1189.6 377.0L1190.4 382.7ZM1188.8 390.4L1193.4 386.9L1194.1 392.7ZM1072.1 415.6L1076.5 411.9L1077.5 417.6ZM1210.4 375.3L1214.7 371.5L1215.9 377.2ZM1152.4 337.3L1156.7 333.5L1157.8 339.2ZM1230.2 366.5L1234.7 362.8L1235.6 368.6ZM1165.4 323.2L1170.1 319.8L1170.7 325.5ZM1143.8 427.0L1148.0 423.0L1149.3 428.7ZM1232.1 398.8L1236.8 395.4L1237.4 401.2ZM1165.2 386.7L1169.7 383.0L1170.6 388.8ZM1103.8 375.5L1108.0 371.5L1109.3 377.2ZM1192.5 415.2L1197.2 411.8L1197.8 417.5ZM1076.8 383.5L1081.6 380.2L1082.1 386.0ZM1174.2 393.3L1179.2 390.4L1179.2 396.2ZM1182.2 333.7L1187.0 330.4L1187.4 336.2ZM1224.6 400.8L1228.8 396.8L1230.1 402.5ZM1093.8 401.1L1098.7 398.1L1098.8 403.9ZM1191.6 390.7L1196.2 387.2L1196.9 393.0ZM1124.0 397.8L1128.3 393.9L1129.5 399.6ZM1182.7 374.8L1187.6 371.7L1187.8 377.5ZM1209.3 350.9L1214.4 348.1L1214.2 353.9ZM1160.3 368.1L1164.5 364.2L1165.8 369.8ZM1096.6 441.8L1101.1 438.1L1102.0 443.8ZM1104.2 396.5L1108.6 392.7L1109.7 398.4ZM1119.9 402.3L1124.4 398.7L1125.2 404.4ZM1143.4 367.9L1148.0 364.4L1148.7 370.2ZM1117.3 436.8L1122.1 433.7L1122.4 439.5ZM1100.8 421.7L1104.8 417.6L1106.4 423.2ZM1166.6 313.5L1171.0 309.8L1172.0 315.6ZM1145.0 372.7L1149.8 369.6L1150.1 375.4ZM1167.1 327.2L1171.7 323.7L1172.4 329.4ZM1177.4 374.7L1181.8 371.0L1182.9 376.7ZM1201.3 346.5L1205.9 343.1L1206.6 348.9ZM1168.8 406.6L1172.6 402.3L1174.4 407.8ZM1077.1 427.0L1081.4 423.1L1082.6 428.8ZM1126.4 390.1L1130.8 386.4L1131.8 392.1ZM1170.9 416.7L1175.1 412.7L1176.4 418.4ZM1223.6 405.4L1227.8 401.5L1229.1 407.2ZM1153.4 419.4L1157.8 415.7L1158.8 421.4ZM1194.0 326.6L1198.4 322.9L1199.4 328.6ZM1131.8 390.5L1136.3 386.9L1137.2 392.7ZM1196.5 408.0L1201.1 404.6L1201.7 410.4ZM1112.9 422.9L1117.8 419.9L1117.9 425.7ZM1220.5 376.1L1224.9 372.4L1225.9 378.1ZM1096.8 439.7L1101.5 436.4L1102.0 442.2ZM1199.7 348.3L1204.6 345.3L1204.7 351.1ZM1161.0 368.7L1165.6 365.2L1166.3 370.9ZM1184.6 319.8L1189.2 316.3L1189.9 322.0ZM1190.2 324.0L1194.6 320.3L1195.6 326.0ZM1148.4 320.7L1153.1 317.3L1153.7 323.1ZM1112.7 365.9L1117.0 362.0L1118.3 367.6ZM1075.0 371.2L1079.8 368.0L1080.2 373.7ZM1080.5 420.6L1085.7 418.1L1085.2 423.9ZM1078.4 364.4L1082.9 360.7L1083.8 366.5ZM1195.1 393.8L1199.4 390.0L1200.5 395.7ZM1188.8 348.0L1192.7 343.8L1194.4 349.4ZM1080.4 428.7L1084.8 425.0L1085.8 430.7ZM1105.1 451.7L1109.9 448.5L1110.3 454.3ZM1098.8 445.4L1102.8 441.3L1104.4 446.8ZM1219.3 362.2L1223.3 358.0L1224.9 363.6ZM1105.6 420.3L1110.4 417.0L1110.9 422.8ZM1172.7 309.0L1177.5 305.8L1177.8 311.6ZM1094.7 444.8L1098.8 440.7L1100.3 446.3ZM1210.1 375.1L1214.7 371.5L1215.5 377.2ZM1226.8 372.8L1231.4 369.4L1232.0 375.1ZM1185.7 349.9L1190.4 346.6L1191.0 352.4ZM1190.8 369.0L1195.3 365.4L1196.2 371.1ZM1172.0 390.7L1176.3 387.0L1177.4 392.7ZM1177.3 322.0L1181.8 318.3L1182.7 324.0ZM1173.1 359.3L1177.6 355.7L1178.5 361.5ZM1101.6 413.2L1106.2 409.7L1106.9 415.5ZM1076.1 413.4L1079.6 408.9L1081.8 414.2ZM1136.7 372.9L1141.5 369.7L1141.9 375.5ZM1174.1 312.6L1178.6 309.1L1179.4 314.9ZM1124.8 351.0L1129.2 347.3L1130.3 353.0ZM1150.3 321.7L1155.0 318.5L1155.4 324.3ZM1165.0 381.4L1169.5 377.9L1170.3 383.6ZM1183.9 358.4L1187.9 354.2L1189.5 359.8ZM1133.3 441.0L1137.6 437.1L1138.8 442.7ZM1134.9 434.6L1139.1 430.7L1140.4 436.3ZM1111.7 413.0L1116.4 409.7L1116.9 415.5ZM1184.5 409.8L1189.2 406.4L1189.8 412.1ZM1206.9 387.5L1211.6 384.2L1212.1 390.0ZM1218.5 348.8L1223.7 346.3L1223.2 352.1ZM1127.9 372.7L1132.5 369.2L1133.3 374.9ZM1132.5 367.7L1137.4 364.5L1137.7 370.3ZM1200.4 359.3L1204.9 355.7L1205.8 361.4ZM1214.0 412.4L1218.4 408.7L1219.4 414.4ZM1185.4 313.8L1189.7 309.9L1190.9 315.6ZM1178.1 351.9L1182.5 348.1L1183.6 353.8ZM1161.7 408.8L1166.5 405.5L1166.9 411.3ZM1082.2 410.8L1086.7 407.2L1087.6 412.9ZM1225.3 355.9L1229.8 352.4L1230.6 358.1ZM1118.7 431.7L1122.9 427.8L1124.2 433.4ZM1083.4 371.7L1088.2 368.5L1088.6 374.3ZM1074.0 401.4L1078.3 397.6L1079.4 403.3ZM1104.1 443.8L1108.4 440.0L1109.5 445.7ZM1157.1 416.1L1161.8 412.8L1162.4 418.6ZM1159.4 412.7L1163.6 408.8L1164.9 414.5ZM1181.9 310.5L1186.3 306.8L1187.3 312.6ZM1094.4 373.9L1098.5 369.7L1100.0 375.3ZM1153.2 349.1L1158.1 345.9L1158.4 351.7ZM1155.2 379.7L1159.7 376.2L1160.5 381.9ZM1211.1 380.2L1215.0 376.0L1216.7 381.5ZM1090.8 451.8L1095.3 448.2L1096.2 453.9ZM1194.9 322.3L1199.4 318.7L1200.3 324.4ZM1068.9 387.7L1073.2 383.8L1074.4 389.5ZM1164.3 402.6L1168.6 398.8L1169.8 404.4ZM1077.2 419.8L1081.6 416.1L1082.6 421.9ZM1190.3 413.8L1194.8 410.3L1195.6 416.0ZM1220.1 364.8L1224.4 360.9L1225.6 366.6ZM1107.0 397.3L1111.5 393.7L1112.3 399.4ZM1189.8 342.7L1194.2 338.9L1195.3 344.6ZM1200.4 394.0L1205.1 390.7L1205.6 396.5ZM1154.2 329.7L1158.9 326.3L1159.5 332.0ZM1154.3 414.2L1159.2 411.1L1159.4 416.9ZM1127.0 343.0L1131.3 339.1L1132.5 344.8ZM1173.6 400.0L1178.0 396.3L1179.0 402.0ZM1116.1 342.6L1120.3 338.6L1121.6 344.2ZM1155.7 389.3L1160.3 385.7L1161.1 391.5ZM1138.0 393.8L1142.6 390.3L1143.3 396.0ZM1184.8 366.5L1189.4 363.0L1190.2 368.7ZM1149.3 372.8L1154.0 369.4L1154.5 375.2ZM1099.1 431.1L1103.9 427.9L1104.3 433.7ZM1228.4 375.4L1233.0 372.0L1233.7 377.7ZM1190.5 310.9L1195.3 307.7L1195.7 313.4ZM1214.1 379.9L1218.9 376.6L1219.4 382.3ZM1167.1 385.5L1171.6 381.9L1172.5 387.6ZM1192.1 368.2L1196.8 364.8L1197.4 370.5ZM1214.7 389.0L1219.7 386.1L1219.7 391.9ZM1097.3 436.6L1102.3 433.6L1102.4 439.4ZM1125.5 368.0L1130.1 364.6L1130.7 370.4ZM1168.0 334.6L1172.6 331.0L1173.3 336.8ZM1161.6 329.8L1166.0 326.0L1167.0 331.7ZM1131.0 395.0L1135.1 390.9L1136.6 396.5ZM1174.3 391.2L1178.4 387.1L1179.9 392.7ZM1072.5 420.6L1076.8 416.7L1078.0 422.4ZM1161.8 346.2L1166.5 342.8L1167.0 348.6ZM1199.9 348.6L1204.5 345.0L1205.3 350.7ZM1077.4 395.3L1081.9 391.7L1082.7 397.5ZM1092.2 453.5L1096.3 449.5L1097.7 455.1ZM1096.6 411.4L1101.4 408.1L1101.8 413.9ZM1170.9 305.8L1176.2 303.3L1175.7 309.1ZM1105.0 359.7L1109.1 355.7L1110.6 361.3ZM1183.1 327.5L1187.7 324.0L1188.4 329.7ZM1129.7 412.4L1133.4 408.0L1135.4 413.5ZM1107.4 396.6L1111.9 392.9L1112.8 398.6ZM1145.4 373.4L1150.0 369.7L1150.8 375.5ZM1185.4 341.2L1189.4 337.1L1191.0 342.6ZM1121.2 356.7L1125.9 353.3L1126.5 359.1ZM1115.5 451.5L1119.8 447.6L1121.0 453.3ZM1090.5 405.3L1095.2 402.0L1095.7 407.7ZM1103.8 433.5L1108.5 430.1L1109.1 435.9ZM1227.1 376.4L1231.3 372.4L1232.7 378.0ZM1179.6 314.8L1183.6 310.6L1185.3 316.2ZM1166.8 327.0L1171.3 323.4L1172.1 329.1ZM1123.5 375.3L1128.1 371.8L1128.9 377.5ZM1164.4 385.9L1168.6 381.9L1169.9 387.6ZM1177.1 406.7L1181.9 403.5L1182.3 409.3ZM1123.3 410.3L1128.1 407.1L1128.5 412.8ZM1098.0 454.0L1102.9 450.9L1103.0 456.7ZM1183.1 397.6L1187.7 394.1L1188.4 399.8ZM1226.8 410.9L1230.7 406.6L1232.5 412.2ZM1187.8 348.3L1192.1 344.4L1193.3 350.1ZM1100.9 373.6L1105.9 370.6L1106.0 376.4ZM1150.2 432.0L1154.4 428.1L1155.7 433.7ZM1141.1 414.6L1146.1 411.7L1146.1 417.5ZM1107.6 375.0L1112.0 371.1L1113.1 376.8ZM1181.5 315.1L1186.0 311.4L1186.9 317.1ZM1186.2 395.7L1189.8 391.2L1191.9 396.6ZM1093.2 422.6L1097.5 418.7L1098.7 424.4ZM1202.1 405.0L1206.7 401.6L1207.4 407.3ZM1106.4 387.7L1111.3 384.7L1111.5 390.5Z" fill="#7b8dcf"/></g>
<clipPath id="fc2"><polygon points="1076.0,373.0 1187.0,300.5 1218.0,304.0 1224.0,314.0 1270.0,330.0 1275.0,405.0 1118.0,462.0 1040.0,470.0 1040.0,400.0"/></clipPath>
<g opacity="0.85" clip-path="url(#fc2)"><path d="M1223.1 323.4L1212.4 324.0M1194.5 338.7L1183.7 341.0M1136.0 386.2L1119.5 389.5M1191.6 332.7L1175.9 336.2M1198.0 415.3L1183.8 419.6M1147.0 378.8L1137.0 380.0M1148.4 404.5L1138.7 406.5M1127.6 347.8L1120.1 349.6M1116.7 355.9L1105.9 357.6M1179.1 355.4L1170.5 355.8M1177.5 332.4L1168.9 334.1M1204.5 310.5L1187.1 312.8M1191.2 425.9L1174.8 429.1M1121.1 440.8L1112.5 442.9M1168.1 429.9L1153.2 430.5M1118.1 371.8L1108.4 372.8M1184.5 341.9L1174.5 344.1M1178.9 390.3L1167.1 390.5M1159.8 338.9L1144.4 340.0M1214.8 372.4L1207.9 372.7M1145.4 410.9L1131.8 414.6M1215.2 403.2L1202.6 403.8M1149.5 340.7L1138.5 342.3M1139.0 398.7L1129.4 398.8M1205.9 328.6L1198.6 330.2M1237.9 374.6L1228.6 376.5M1112.6 417.7L1103.0 419.2M1107.7 384.5L1098.8 385.5M1101.0 369.9L1090.1 372.6M1114.8 372.2L1101.7 374.4M1198.0 353.5L1184.5 355.3M1241.4 387.2L1225.6 391.6M1174.8 383.5L1161.1 385.2M1231.1 402.0L1213.5 404.9M1167.1 408.0L1152.1 409.5M1139.4 426.9L1127.0 429.4M1208.9 315.9L1192.1 318.7M1209.4 413.7L1200.6 415.9M1168.3 414.9L1153.1 415.6M1091.3 406.0L1082.1 406.2M1236.1 374.4L1227.5 375.9M1086.8 400.9L1070.7 405.2M1131.3 436.2L1117.8 439.2M1242.7 374.9L1231.9 375.6M1138.5 393.3L1121.0 396.6M1094.0 425.4L1083.4 427.2M1129.0 349.4L1120.8 351.0M1146.2 404.5L1133.3 407.4M1180.7 374.6L1165.5 377.1M1242.4 403.4L1228.1 405.8M1169.2 344.0L1159.7 345.6M1245.9 369.5L1232.4 371.4M1143.8 432.3L1128.1 436.6M1206.6 318.8L1189.7 319.6M1130.5 441.7L1116.6 443.7M1091.4 380.8L1085.0 382.9M1207.0 404.2L1193.4 406.3M1189.6 318.4L1175.3 319.1M1204.9 419.2L1191.5 421.4M1201.2 338.2L1190.6 339.1M1231.2 332.2L1223.9 333.6M1144.5 441.1L1130.2 446.4M1200.3 383.5L1193.7 384.5M1093.7 432.6L1080.0 437.5M1186.0 313.1L1173.2 315.1M1247.3 383.0L1239.0 385.2M1163.9 401.1L1154.0 402.8M1143.3 435.3L1131.0 436.2M1196.8 403.0L1188.2 403.6M1183.3 338.0L1169.8 341.8M1095.5 388.6L1088.2 390.1M1196.2 303.1L1186.4 304.5M1121.7 413.1L1113.4 416.0M1094.4 379.6L1081.8 381.5M1196.4 388.8L1185.1 391.6M1123.5 358.9L1106.6 364.5M1168.6 334.4L1156.8 336.6M1141.1 334.1L1129.0 337.9M1238.5 341.6L1228.3 342.9M1160.5 331.3L1148.8 333.9M1145.0 422.3L1133.4 426.7M1110.3 412.0L1104.4 413.2M1218.1 398.5L1208.8 399.2M1189.9 308.2L1180.9 309.5M1089.2 379.2L1077.1 381.4M1243.7 376.2L1235.4 377.7M1195.6 342.4L1184.3 343.9M1166.4 413.0L1149.5 414.8M1118.0 453.3L1105.6 454.7M1192.6 425.6L1180.1 427.1M1254.7 389.0L1244.7 390.3M1145.9 388.0L1137.7 388.8M1086.4 385.2L1074.4 386.6M1218.1 385.9L1203.6 389.7M1172.6 330.4L1162.9 331.8M1165.7 412.9L1151.9 415.7M1117.8 394.5L1105.5 396.5M1105.6 383.2L1088.1 385.2M1167.2 362.1L1159.6 362.7M1113.6 404.4L1101.4 406.6M1120.7 360.8L1109.0 361.2M1158.5 432.8L1147.5 433.4M1162.8 324.4L1147.4 323.5M1246.8 386.9L1239.9 387.1M1171.3 402.7L1155.4 405.0M1121.3 381.5L1107.9 383.3M1181.3 363.5L1169.8 367.4M1129.8 411.0L1117.8 414.2M1168.0 342.4L1159.6 343.4M1167.6 436.1L1157.5 438.0M1196.0 390.2L1189.5 390.1M1183.4 325.1L1170.0 326.4M1106.9 400.3L1099.0 402.1M1149.2 389.2L1139.6 391.5M1227.0 353.3L1215.3 354.6M1214.0 341.8L1198.0 346.4M1169.6 393.7L1154.0 396.1M1096.2 407.7L1088.3 409.2M1186.9 302.5L1178.6 304.1M1110.3 449.3L1094.0 450.8M1108.4 392.4L1096.2 394.6M1132.0 412.6L1123.6 414.1M1137.7 402.7L1124.3 402.7M1167.1 330.3L1158.6 331.9M1169.6 401.1L1163.2 401.8M1243.6 399.3L1236.5 401.5M1229.9 334.0L1223.9 334.4M1138.9 373.2L1127.3 372.9M1099.6 412.9L1090.4 414.9M1146.4 402.6L1133.3 406.1M1199.4 375.3L1188.2 377.4M1248.8 399.6L1237.4 401.2M1198.9 369.5L1190.4 369.4M1185.0 323.6L1170.3 324.6M1137.1 410.8L1128.5 412.0M1197.8 313.9L1184.2 318.5M1129.9 389.9L1120.0 391.6M1087.3 399.5L1073.6 400.6M1176.4 335.1L1168.5 336.6M1144.2 333.9L1134.7 335.2M1123.1 366.1L1108.6 369.1M1146.1 409.5L1130.8 412.3M1254.3 387.2L1240.0 391.0M1228.6 377.6L1218.0 378.0M1239.9 399.9L1229.8 399.8M1195.1 355.2L1184.1 356.3M1189.1 330.2L1175.4 333.1M1094.9 397.1L1082.6 398.1M1205.3 346.6L1188.9 350.9M1210.5 322.5L1200.5 322.6" stroke="#d6def6" stroke-width="1.1" fill="none"/><path d="M1208.4 324.2L1212.2 321.8L1212.5 326.2ZM1179.8 341.8L1183.3 338.8L1184.2 343.1ZM1115.6 390.3L1119.1 387.3L1120.0 391.7ZM1172.0 337.1L1175.4 334.1L1176.4 338.3ZM1180.0 420.8L1183.2 417.5L1184.5 421.7ZM1133.1 380.5L1136.8 377.8L1137.3 382.2ZM1134.8 407.4L1138.2 404.4L1139.2 408.7ZM1116.2 350.5L1119.6 347.5L1120.6 351.8ZM1102.0 358.3L1105.6 355.5L1106.3 359.8ZM1166.5 355.9L1170.4 353.6L1170.6 358.0ZM1165.0 334.9L1168.4 332.0L1169.3 336.3ZM1183.2 313.4L1186.8 310.7L1187.4 315.0ZM1170.8 429.9L1174.3 427.0L1175.2 431.3ZM1108.6 443.8L1112.0 440.7L1113.0 445.0ZM1149.2 430.7L1153.2 428.3L1153.3 432.7ZM1104.5 373.2L1108.2 370.6L1108.7 375.0ZM1170.6 344.9L1174.0 341.9L1175.0 346.2ZM1163.1 390.6L1167.0 388.3L1167.1 392.7ZM1140.4 340.3L1144.3 337.8L1144.6 342.2ZM1203.9 372.8L1207.8 370.5L1208.0 374.9ZM1127.9 415.7L1131.2 412.5L1132.4 416.8ZM1198.6 404.0L1202.5 401.6L1202.7 406.0ZM1134.6 342.9L1138.2 340.1L1138.8 344.5ZM1125.4 398.9L1129.3 396.6L1129.4 401.0ZM1194.7 331.0L1198.2 328.0L1199.1 332.3ZM1224.7 377.4L1228.1 374.4L1229.0 378.7ZM1099.0 419.8L1102.6 417.1L1103.3 421.4ZM1094.9 385.9L1098.6 383.3L1099.1 387.7ZM1086.2 373.5L1089.6 370.4L1090.6 374.7ZM1097.8 375.0L1101.4 372.2L1102.1 376.5ZM1180.6 355.8L1184.2 353.1L1184.8 357.4ZM1221.8 392.7L1225.0 389.5L1226.2 393.7ZM1157.2 385.7L1160.9 383.0L1161.4 387.4ZM1209.6 405.5L1213.2 402.7L1213.9 407.0ZM1148.1 409.9L1151.9 407.3L1152.3 411.7ZM1123.1 430.1L1126.6 427.2L1127.4 431.5ZM1188.1 319.3L1191.7 316.5L1192.4 320.9ZM1196.8 416.9L1200.1 413.8L1201.2 418.1ZM1149.1 415.8L1153.0 413.4L1153.2 417.8ZM1078.1 406.3L1082.0 404.0L1082.1 408.4ZM1223.6 376.6L1227.1 373.7L1227.9 378.1ZM1066.8 406.2L1070.1 403.1L1071.2 407.3ZM1113.8 440.1L1117.3 437.1L1118.2 441.4ZM1228.0 375.9L1231.8 373.4L1232.1 377.8ZM1117.0 397.3L1120.6 394.4L1121.4 398.8ZM1079.4 427.9L1083.0 425.1L1083.7 429.4ZM1116.9 351.8L1120.4 348.8L1121.2 353.2ZM1129.4 408.3L1132.9 405.2L1133.8 409.5ZM1161.5 377.8L1165.1 375.0L1165.8 379.3ZM1224.1 406.4L1227.7 403.6L1228.4 407.9ZM1155.7 346.3L1159.3 343.4L1160.1 347.8ZM1228.4 371.9L1232.1 369.2L1232.7 373.6ZM1124.2 437.7L1127.5 434.5L1128.6 438.8ZM1185.7 319.8L1189.6 317.4L1189.8 321.8ZM1112.6 444.3L1116.3 441.6L1116.9 445.9ZM1081.2 384.2L1084.3 380.8L1085.7 385.0ZM1189.4 407.0L1193.1 404.2L1193.7 408.5ZM1171.3 319.3L1175.1 316.9L1175.4 321.3ZM1187.5 422.1L1191.1 419.3L1191.8 423.6ZM1186.6 339.4L1190.5 336.9L1190.8 341.3ZM1220.0 334.4L1223.5 331.4L1224.3 335.7ZM1126.5 447.8L1129.5 444.4L1131.0 448.5ZM1189.8 385.0L1193.4 382.3L1194.1 386.6ZM1076.3 438.9L1079.3 435.5L1080.8 439.6ZM1169.2 315.7L1172.8 312.9L1173.5 317.2ZM1235.1 386.2L1238.4 383.0L1239.6 387.3ZM1150.1 403.5L1153.7 400.7L1154.4 405.0ZM1127.0 436.5L1130.8 434.0L1131.1 438.4ZM1184.2 403.9L1188.0 401.4L1188.3 405.8ZM1166.0 342.9L1169.2 339.7L1170.4 343.9ZM1084.3 390.9L1087.7 388.0L1088.6 392.3ZM1182.5 305.1L1186.1 302.3L1186.8 306.7ZM1109.6 417.3L1112.7 413.9L1114.1 418.1ZM1077.9 382.1L1081.5 379.3L1082.2 383.7ZM1181.2 392.5L1184.6 389.4L1185.6 393.7ZM1102.8 365.7L1105.9 362.4L1107.3 366.5ZM1152.9 337.3L1156.4 334.4L1157.2 338.7ZM1125.1 339.1L1128.3 335.8L1129.6 340.0ZM1224.3 343.4L1228.0 340.7L1228.5 345.0ZM1144.9 334.8L1148.3 331.8L1149.3 336.0ZM1129.7 428.1L1132.6 424.6L1134.2 428.7ZM1100.5 414.1L1103.9 411.1L1104.8 415.4ZM1204.8 399.5L1208.6 397.0L1208.9 401.4ZM1177.0 310.0L1180.6 307.3L1181.2 311.6ZM1073.1 382.1L1076.7 379.2L1077.4 383.5ZM1231.5 378.5L1235.0 375.6L1235.8 379.9ZM1180.4 344.4L1184.1 341.7L1184.6 346.0ZM1145.5 415.3L1149.2 412.6L1149.7 417.0ZM1101.7 455.2L1105.4 452.5L1105.9 456.9ZM1176.2 427.5L1179.9 424.9L1180.4 429.2ZM1240.8 390.8L1244.5 388.1L1245.0 392.4ZM1133.7 389.2L1137.5 386.6L1137.9 391.0ZM1070.4 387.0L1074.1 384.4L1074.6 388.7ZM1199.7 390.7L1203.0 387.6L1204.1 391.8ZM1158.9 332.4L1162.5 329.7L1163.2 334.0ZM1147.9 416.4L1151.4 413.5L1152.3 417.8ZM1101.6 397.2L1105.1 394.4L1105.9 398.7ZM1084.2 385.6L1087.9 383.0L1088.4 387.4ZM1155.6 363.1L1159.5 360.5L1159.8 364.9ZM1097.5 407.3L1101.0 404.5L1101.8 408.8ZM1105.0 361.4L1108.9 359.0L1109.1 363.4ZM1143.5 433.7L1147.4 431.2L1147.6 435.6ZM1143.4 323.3L1147.5 321.3L1147.2 325.7ZM1235.9 387.3L1239.8 384.9L1240.0 389.3ZM1151.4 405.6L1155.1 402.8L1155.7 407.2ZM1103.9 383.8L1107.6 381.1L1108.2 385.5ZM1166.0 368.6L1169.1 365.3L1170.4 369.5ZM1113.9 415.2L1117.2 412.0L1118.3 416.3ZM1155.6 343.9L1159.3 341.3L1159.8 345.6ZM1153.6 438.7L1157.1 435.8L1157.9 440.2ZM1185.5 390.1L1189.5 387.9L1189.4 392.3ZM1166.0 326.8L1169.8 324.2L1170.2 328.6ZM1095.1 403.0L1098.5 400.0L1099.5 404.2ZM1135.7 392.4L1139.0 389.4L1140.1 393.6ZM1211.4 355.0L1215.1 352.4L1215.6 356.8ZM1194.1 347.5L1197.4 344.3L1198.6 348.5ZM1150.0 396.8L1153.7 394.0L1154.3 398.3ZM1084.4 410.0L1087.9 407.0L1088.8 411.4ZM1174.7 304.8L1178.2 301.9L1179.0 306.2ZM1090.0 451.1L1093.8 448.6L1094.2 453.0ZM1092.3 395.4L1095.8 392.5L1096.6 396.8ZM1119.6 414.8L1123.2 411.9L1124.0 416.2ZM1120.3 402.7L1124.3 400.5L1124.3 404.9ZM1154.6 332.7L1158.1 329.8L1159.0 334.1ZM1159.2 402.2L1163.0 399.6L1163.4 403.9ZM1232.6 402.7L1235.8 399.4L1237.1 403.6ZM1219.9 334.6L1223.8 332.2L1224.0 336.6ZM1123.3 372.8L1127.4 370.7L1127.3 375.1ZM1086.5 415.8L1090.0 412.8L1090.9 417.1ZM1129.4 407.1L1132.8 403.9L1133.9 408.2ZM1184.3 378.1L1187.8 375.2L1188.6 379.6ZM1233.4 401.7L1237.1 399.0L1237.7 403.4ZM1186.4 369.4L1190.4 367.2L1190.4 371.6ZM1166.3 324.9L1170.1 322.4L1170.4 326.8ZM1124.5 412.6L1128.2 409.8L1128.8 414.2ZM1180.4 319.8L1183.5 316.4L1184.9 320.6ZM1116.1 392.3L1119.6 389.4L1120.4 393.8ZM1069.6 401.0L1073.4 398.4L1073.8 402.8ZM1164.6 337.4L1168.1 334.5L1168.9 338.8ZM1130.8 335.7L1134.4 333.0L1135.0 337.4ZM1104.7 369.9L1108.2 366.9L1109.0 371.2ZM1126.9 413.0L1130.4 410.1L1131.2 414.5ZM1236.2 392.0L1239.5 388.8L1240.6 393.1ZM1214.0 378.1L1218.0 375.8L1218.1 380.2ZM1225.8 399.8L1229.8 397.6L1229.8 402.0ZM1180.1 356.8L1183.8 354.2L1184.3 358.5ZM1171.5 333.9L1174.9 330.9L1175.9 335.2ZM1078.6 398.5L1082.5 395.9L1082.8 400.3ZM1185.0 351.9L1188.3 348.8L1189.5 353.0ZM1196.5 322.6L1200.5 320.4L1200.5 324.8Z" fill="#a3b1e2"/></g>
<g opacity="0.9"><path d="M1278.9 407.7L1272.5 409.8M1286.1 374.1L1277.0 380.0M1258.2 374.6L1249.0 375.7M1288.3 354.6L1280.8 360.1M1262.2 319.7L1258.0 319.8M1261.0 346.3L1256.2 348.9M1251.5 343.0L1244.8 350.9M1292.5 378.6L1288.5 379.6M1298.0 401.6L1292.6 404.5M1276.8 382.2L1265.4 385.7M1244.2 333.2L1237.4 340.9M1250.7 340.1L1244.4 342.9M1275.2 372.6L1264.7 371.9M1256.9 322.0L1249.9 327.6M1275.9 373.4L1265.1 376.0M1254.3 358.1L1246.4 362.1M1227.7 318.5L1223.6 318.9M1279.0 337.3L1274.0 338.0M1261.8 385.6L1252.0 387.3M1262.2 368.0L1248.3 368.7M1261.8 357.0L1254.1 360.5M1259.4 353.6L1246.7 358.6M1276.3 387.6L1272.5 390.0M1290.0 395.2L1285.5 394.5M1241.6 328.6L1235.2 331.1M1265.0 386.7L1260.6 387.8M1263.0 356.5L1249.8 359.3M1279.5 337.6L1270.7 342.8M1271.7 316.4L1263.8 325.0M1272.1 322.0L1264.0 320.4M1268.0 390.7L1264.2 392.2M1253.7 311.4L1241.0 311.7M1257.2 322.2L1245.3 321.7M1277.5 370.0L1273.2 375.1M1269.7 383.5L1257.0 383.4M1282.5 338.8L1269.6 343.0M1249.0 308.4L1243.1 309.0M1254.2 378.9L1249.9 378.9M1294.4 369.5L1285.7 371.2M1293.0 371.8L1288.6 372.6M1262.0 343.5L1249.9 341.4M1254.8 379.5L1250.5 380.8M1278.3 341.4L1271.4 344.1M1256.3 365.3L1251.4 368.1M1245.0 328.9L1235.0 332.0M1259.5 364.5L1249.4 366.1M1257.4 334.8L1250.0 335.1M1286.7 329.6L1282.5 330.9M1282.5 388.5L1275.2 393.2M1263.5 321.7L1252.9 323.4M1257.8 367.0L1245.6 367.9M1279.5 345.0L1274.3 344.7M1276.7 341.9L1263.5 343.9M1251.9 324.0L1241.7 331.2M1268.2 324.8L1263.2 326.9M1290.1 381.5L1285.6 383.7M1246.4 337.8L1234.8 338.4M1249.2 348.7L1236.5 351.5M1281.7 379.6L1275.9 382.3M1264.2 332.8L1256.5 337.7M1247.3 331.2L1234.3 326.2M1230.5 315.9L1225.3 315.9M1274.2 359.0L1269.0 359.1M1266.8 340.5L1262.3 342.9M1270.7 393.6L1260.9 397.0M1270.5 366.4L1258.8 365.9M1251.5 328.5L1246.5 331.1M1273.4 393.8L1261.5 396.0M1266.4 380.5L1253.3 383.8M1286.8 371.5L1279.1 374.9M1280.7 349.0L1269.6 351.2M1277.3 366.5L1272.6 368.6M1256.0 333.9L1244.4 336.1M1274.5 337.7L1267.2 340.3M1279.3 340.6L1270.2 344.7M1239.6 323.5L1231.1 326.5M1259.9 387.6L1247.7 393.4M1288.7 345.1L1282.1 343.6M1254.5 380.0L1241.6 381.5M1266.6 373.4L1255.9 380.3M1284.5 328.8L1280.4 331.0M1271.6 322.6L1259.3 320.2M1236.9 324.1L1233.2 327.5M1259.4 318.0L1250.5 320.2M1248.7 347.9L1242.0 355.5M1248.7 340.5L1236.0 343.9M1248.7 301.2L1237.3 301.7M1253.7 335.7L1241.9 335.7M1262.8 360.2L1255.4 363.5M1263.9 343.0L1258.3 344.7" stroke="#a6b5e2" stroke-width="1.4" fill="none"/><path d="M1268.7 411.0L1271.8 407.5L1273.3 412.1ZM1273.6 382.2L1275.7 378.0L1278.3 382.0ZM1245.0 376.2L1248.7 373.3L1249.2 378.1ZM1277.5 362.4L1279.3 358.1L1282.2 362.0ZM1254.0 319.9L1257.9 317.4L1258.1 322.2ZM1252.7 350.8L1255.1 346.8L1257.4 351.0ZM1242.1 353.9L1243.0 349.3L1246.6 352.4ZM1284.6 380.5L1287.9 377.2L1289.1 381.9ZM1289.0 406.4L1291.4 402.4L1293.7 406.7ZM1261.6 386.8L1264.7 383.4L1266.1 388.0ZM1234.7 343.9L1235.6 339.3L1239.2 342.5ZM1240.7 344.5L1243.4 340.7L1245.3 345.1ZM1260.7 371.6L1264.9 369.5L1264.5 374.3ZM1246.7 330.0L1248.4 325.7L1251.3 329.4ZM1261.2 376.9L1264.5 373.7L1265.7 378.3ZM1242.8 363.9L1245.3 360.0L1247.4 364.3ZM1219.6 319.3L1223.4 316.5L1223.8 321.3ZM1270.0 338.5L1273.7 335.6L1274.3 340.3ZM1248.0 388.0L1251.6 385.0L1252.4 389.7ZM1244.3 368.9L1248.2 366.3L1248.5 371.1ZM1250.5 362.2L1253.1 358.3L1255.1 362.7ZM1243.0 360.1L1245.8 356.4L1247.6 360.8ZM1269.2 392.1L1271.3 387.9L1273.8 392.0ZM1281.6 393.9L1285.9 392.1L1285.2 396.8ZM1231.5 332.6L1234.3 328.9L1236.1 333.4ZM1256.7 388.8L1259.9 385.5L1261.2 390.1ZM1245.8 360.2L1249.3 357.0L1250.3 361.7ZM1267.2 344.9L1269.5 340.8L1271.9 344.9ZM1261.1 328.0L1262.0 323.4L1265.6 326.6ZM1260.1 319.6L1264.5 318.0L1263.5 322.7ZM1260.5 393.7L1263.3 390.0L1265.1 394.4ZM1237.0 311.8L1241.0 309.3L1241.1 314.1ZM1241.3 321.6L1245.3 319.4L1245.2 324.1ZM1270.6 378.2L1271.3 373.6L1275.0 376.7ZM1253.0 383.4L1257.0 381.0L1257.0 385.8ZM1265.8 344.2L1268.9 340.7L1270.4 345.2ZM1239.1 309.4L1242.9 306.6L1243.3 311.4ZM1245.9 379.0L1249.8 376.5L1249.9 381.3ZM1281.8 372.0L1285.2 368.8L1286.2 373.6ZM1284.6 373.3L1288.1 370.3L1289.0 375.0ZM1246.0 340.7L1250.3 339.0L1249.5 343.8ZM1246.6 381.9L1249.8 378.5L1251.1 383.1ZM1267.7 345.6L1270.5 341.9L1272.3 346.3ZM1248.0 370.1L1250.2 366.0L1252.6 370.2ZM1231.2 333.2L1234.3 329.7L1235.8 334.3ZM1245.5 366.7L1249.1 363.7L1249.8 368.5ZM1246.0 335.3L1249.9 332.7L1250.1 337.5ZM1278.7 332.1L1281.8 328.6L1283.2 333.2ZM1271.8 395.3L1273.9 391.1L1276.5 395.2ZM1249.0 324.1L1252.6 321.1L1253.3 325.8ZM1241.6 368.2L1245.4 365.5L1245.7 370.3ZM1270.3 344.5L1274.5 342.3L1274.2 347.1ZM1259.6 344.5L1263.2 341.5L1263.9 346.3ZM1238.4 333.4L1240.3 329.2L1243.0 333.1ZM1259.5 328.4L1262.3 324.6L1264.1 329.1ZM1282.0 385.6L1284.5 381.6L1286.7 385.9ZM1230.8 338.6L1234.7 336.0L1235.0 340.8ZM1232.6 352.3L1236.0 349.1L1237.0 353.8ZM1272.3 384.0L1274.9 380.1L1277.0 384.5ZM1253.1 339.8L1255.2 335.7L1257.7 339.7ZM1230.6 324.7L1235.2 323.9L1233.4 328.4ZM1221.3 315.8L1225.3 313.5L1225.3 318.3ZM1265.0 359.2L1268.9 356.7L1269.0 361.5ZM1258.8 344.8L1261.2 340.8L1263.4 345.0ZM1257.1 398.3L1260.1 394.7L1261.6 399.2ZM1254.8 365.7L1258.9 363.5L1258.7 368.3ZM1243.0 333.0L1245.4 329.0L1247.7 333.2ZM1257.6 396.7L1261.1 393.6L1261.9 398.3ZM1249.4 384.8L1252.7 381.5L1253.9 386.2ZM1275.5 376.5L1278.1 372.7L1280.1 377.1ZM1265.7 352.0L1269.2 348.9L1270.1 353.6ZM1269.0 370.3L1271.6 366.4L1273.6 370.8ZM1240.5 336.8L1243.9 333.7L1244.8 338.5ZM1263.4 341.6L1266.4 338.0L1268.0 342.5ZM1266.6 346.3L1269.2 342.5L1271.2 346.9ZM1227.3 327.8L1230.3 324.2L1231.9 328.7ZM1244.1 395.1L1246.7 391.2L1248.7 395.5ZM1278.2 342.8L1282.6 341.3L1281.6 346.0ZM1237.6 381.9L1241.3 379.1L1241.8 383.9ZM1252.5 382.5L1254.6 378.3L1257.2 382.3ZM1276.9 332.9L1279.3 328.9L1281.6 333.1ZM1255.4 319.4L1259.8 317.8L1258.9 322.6ZM1230.2 330.2L1231.6 325.7L1234.8 329.3ZM1246.6 321.1L1249.9 317.8L1251.1 322.5ZM1239.4 358.5L1240.2 353.9L1243.8 357.0ZM1232.1 344.9L1235.4 341.5L1236.6 346.2ZM1233.3 301.9L1237.2 299.3L1237.4 304.1ZM1237.9 335.6L1241.9 333.3L1241.9 338.1ZM1251.7 365.1L1254.4 361.3L1256.3 365.7ZM1254.4 345.8L1257.6 342.4L1259.0 347.0Z" fill="#7f90cf"/></g>
<g opacity="1.0"><path d="M1278.6 427.1L1262.0 431.6M1239.1 501.1L1223.9 503.0M1265.7 502.2L1256.7 504.4M1167.8 496.3L1146.9 501.3M1148.2 490.1L1139.2 493.5M1265.1 487.3L1248.6 491.7M1121.9 480.8L1101.9 482.4M1131.3 518.7L1121.4 520.7M1221.1 464.2L1204.1 467.6M1100.7 474.5L1088.0 476.5M1164.4 480.9L1153.0 482.1M1173.3 495.1L1160.4 498.2M1168.3 448.3L1157.5 450.3M1194.3 477.7L1175.0 482.2M1200.6 469.3L1182.4 472.8M1231.1 424.2L1213.2 425.3M1170.4 503.5L1151.6 506.1M1233.5 430.5L1221.0 430.7M1169.3 442.9L1157.6 444.2M1144.6 501.2L1127.4 503.7M1188.1 486.3L1175.5 488.9M1178.0 502.5L1158.7 505.7M1197.8 506.7L1179.1 509.9M1125.8 488.0L1104.7 490.7M1210.3 475.5L1193.0 478.2M1253.1 494.7L1233.9 498.7M1184.3 514.1L1165.8 518.9M1153.1 483.4L1138.8 484.5M1233.6 509.9L1217.7 513.1M1217.6 446.2L1196.5 449.2M1225.8 502.0L1205.5 506.6M1184.8 483.6L1162.6 482.4M1135.7 479.1L1126.8 481.0M1209.4 483.3L1193.0 481.2M1126.5 495.2L1114.3 497.6M1149.3 518.9L1138.3 521.1M1276.7 486.6L1255.8 492.4M1186.0 501.6L1172.0 505.9M1203.3 491.9L1193.2 492.5M1162.9 498.4L1147.3 501.6M1148.4 516.4L1134.9 519.4M1227.1 446.0L1204.9 448.6M1165.0 481.1L1154.9 483.9M1109.6 491.1L1094.0 493.9M1248.5 465.3L1225.8 468.9M1181.6 504.5L1161.8 507.5M1173.4 487.4L1163.8 489.0M1208.0 476.3L1188.1 477.3M1104.9 470.9L1088.9 473.6M1111.4 511.0L1096.8 512.2M1241.3 469.0L1223.4 469.9M1219.1 477.3L1206.5 481.3M1226.4 459.6L1213.6 460.7M1186.4 470.6L1176.6 472.5M1184.1 490.8L1166.6 492.9M1288.8 450.0L1279.5 450.7M1206.7 487.5L1186.3 496.2M1196.5 497.2L1180.4 498.9M1224.8 511.1L1210.5 515.1M1129.7 487.1L1120.7 488.3M1200.0 499.5L1186.6 504.4M1205.0 466.1L1189.5 467.0M1284.7 472.3L1274.4 473.1M1164.2 494.8L1154.5 496.0M1145.2 497.5L1130.3 499.8M1268.9 454.8L1249.5 457.3M1168.8 502.9L1158.7 504.9M1220.4 479.2L1202.6 482.5M1173.4 482.4L1152.8 484.1M1106.4 493.3L1094.3 494.7M1130.0 514.1L1116.4 517.5M1167.9 495.4L1146.5 498.7M1131.3 486.7L1115.9 487.4M1293.4 431.2L1283.3 432.0M1179.4 512.5L1162.9 514.8M1252.6 499.9L1230.3 501.7M1165.8 446.5L1148.5 449.9M1167.7 495.1L1154.5 498.6M1212.6 484.0L1201.3 485.7M1175.5 493.6L1156.3 498.3M1252.3 442.4L1232.8 447.7M1245.5 467.7L1236.0 467.6M1123.4 505.3L1105.5 508.5M1183.2 487.9L1167.3 489.6M1196.7 477.2L1178.9 481.6M1270.0 475.8L1259.1 478.0M1205.4 495.1L1191.9 497.4M1252.5 455.7L1236.4 461.2M1126.5 468.7L1107.5 467.8M1205.4 468.7L1190.0 471.3M1123.7 466.2L1103.5 468.5M1158.9 513.7L1149.6 516.3M1129.2 484.5L1114.1 488.1M1202.1 497.7L1184.1 501.5M1124.2 502.4L1110.4 506.4M1206.6 465.9L1197.0 467.8M1181.5 491.9L1162.0 493.6M1122.4 512.3L1103.2 515.5M1103.3 472.5L1085.8 476.6M1116.6 490.2L1100.8 494.4M1198.4 484.0L1186.5 486.9M1165.4 487.2L1147.3 490.8M1224.4 496.6L1208.3 498.1M1123.6 479.7L1111.5 481.4M1161.4 497.9L1141.4 502.8M1233.8 487.2L1214.0 489.9M1236.7 450.1L1224.8 453.2M1125.4 484.3L1106.8 487.9M1143.0 489.8L1130.9 492.5M1096.4 488.3L1078.5 490.4M1141.1 495.8L1129.8 497.5M1228.8 495.3L1212.1 498.6M1186.8 508.4L1169.5 509.7M1203.8 456.3L1194.9 458.2M1204.2 486.2L1195.0 488.3M1222.8 498.4L1212.2 500.5M1226.7 478.6L1214.1 481.2M1204.2 478.4L1194.9 478.7M1207.5 511.4L1196.3 512.8M1188.1 511.4L1167.3 515.1M1201.7 494.2L1179.4 493.7M1138.5 484.6L1116.4 487.3M1198.3 482.9L1178.1 483.5M1252.8 475.0L1235.7 476.4M1206.5 505.9L1193.3 508.5M1212.3 466.4L1193.0 469.0M1217.5 488.6L1199.1 489.2M1127.1 506.5L1114.3 509.6M1155.5 506.7L1144.8 508.8M1220.5 439.4L1198.3 443.6M1212.4 445.0L1190.5 449.8M1148.6 479.1L1137.5 479.5M1154.2 473.9L1137.7 475.3M1172.6 456.2L1150.8 461.8M1106.9 492.3L1085.8 495.6M1251.0 500.2L1235.4 502.2M1157.9 481.2L1142.4 485.3M1112.3 504.6L1093.9 506.5M1227.6 497.3L1216.3 499.6M1145.5 508.1L1126.5 512.6M1170.3 447.3L1160.0 450.8M1273.1 462.3L1263.6 464.3M1187.9 513.4L1171.6 516.9M1097.3 485.8L1087.0 487.0M1183.8 510.6L1162.0 515.7M1169.4 493.4L1152.3 497.3M1164.2 481.2L1144.6 483.4M1125.4 486.0L1104.1 488.4M1186.4 495.6L1167.8 499.1M1152.3 467.0L1142.5 468.7M1188.0 507.4L1169.7 509.8M1246.6 479.7L1231.7 484.5M1159.9 482.7L1139.1 484.9M1207.4 506.8L1198.7 509.7M1200.0 471.1L1178.6 476.2M1206.8 493.7L1186.4 500.5M1253.2 483.4L1241.3 487.3M1166.0 490.7L1152.0 492.4M1132.1 484.0L1113.9 487.0M1163.7 474.3L1147.7 476.9M1205.5 438.8L1192.5 441.4M1217.8 472.5L1207.2 474.2M1238.3 489.8L1228.0 490.9M1266.9 502.2L1252.3 505.1M1196.9 495.9L1177.0 497.8M1248.3 439.1L1229.7 441.9M1133.7 463.1L1116.7 468.4M1162.4 466.8L1153.3 468.3M1203.2 462.0L1183.7 464.9M1156.9 489.7L1140.2 493.8M1147.6 482.9L1138.3 483.1M1150.0 452.2L1133.2 457.2M1108.3 486.1L1092.5 491.3M1191.4 436.8L1181.7 438.4M1109.3 515.3L1098.7 516.7M1166.4 515.7L1150.5 518.9M1156.2 512.6L1144.0 516.7M1287.9 476.3L1277.8 477.3M1181.8 509.5L1164.6 512.9M1215.9 452.4L1203.9 457.3M1187.5 513.2L1176.8 513.5M1182.5 480.4L1172.4 481.8M1120.9 493.9L1106.1 494.2M1203.9 507.4L1193.5 508.5M1241.3 506.3L1222.2 508.7M1110.9 495.9L1090.9 500.9M1129.1 478.2L1118.7 479.8M1204.2 468.6L1184.8 471.1M1145.9 513.8L1133.3 515.1M1196.7 475.5L1184.2 477.9M1217.1 492.0L1201.3 493.9M1239.8 483.9L1222.0 485.1M1146.5 477.3L1127.8 481.6M1226.9 503.8L1212.7 507.1M1176.9 479.0L1155.2 483.3M1151.2 506.7L1133.5 508.9M1194.0 473.0L1183.4 474.0M1103.6 488.9L1089.6 492.7M1124.3 512.4L1105.0 515.4M1208.4 480.2L1193.8 482.6M1168.7 504.4L1149.3 507.7M1118.5 519.3L1104.0 520.8M1226.9 470.6L1208.6 470.7M1249.4 500.8L1231.0 504.6M1110.5 513.5L1100.6 514.8M1121.5 514.6L1104.3 517.6M1183.0 486.7L1163.2 489.1M1224.2 502.1L1209.0 503.2M1158.9 500.7L1142.0 501.9M1168.8 492.2L1150.2 492.2M1198.1 508.8L1188.5 511.5M1161.5 512.9L1149.5 515.7M1276.3 456.4L1260.6 460.5M1283.5 456.1L1264.9 459.2M1221.7 509.4L1206.2 512.3M1211.4 508.4L1197.2 510.3M1105.2 481.3L1088.4 482.8M1225.0 496.0L1214.8 497.8M1168.1 491.7L1152.3 492.8M1204.0 476.5L1192.3 478.4M1152.2 496.8L1139.4 498.9M1262.7 451.3L1252.9 452.1M1269.6 470.7L1247.3 475.0M1117.8 484.9L1101.4 488.1M1238.3 503.6L1217.7 508.0M1227.0 491.6L1214.5 493.3M1125.0 497.3L1111.4 500.9M1260.4 492.9L1247.3 494.0M1207.4 481.4L1185.9 486.7M1103.2 508.6L1085.9 509.4M1231.9 489.2L1216.3 492.3M1224.4 498.6L1211.8 501.9M1229.8 469.8L1217.5 469.9M1205.0 472.7L1195.9 475.9M1146.3 506.2L1127.4 509.7M1189.6 502.8L1173.2 505.4M1130.7 475.7L1112.8 478.9M1173.9 513.8L1161.0 515.0M1139.7 488.6L1117.4 488.7M1190.2 463.1L1169.4 463.9M1149.8 481.2L1132.3 483.6M1242.1 479.7L1225.4 481.1M1158.8 464.0L1139.8 468.6M1171.0 497.6L1154.3 500.4M1284.0 498.2L1272.3 499.7M1129.4 495.9L1119.4 497.9M1159.1 465.2L1145.9 467.5M1131.3 486.3L1115.5 488.1M1137.3 517.2L1124.2 517.8M1143.1 495.1L1123.2 494.7M1157.3 476.1L1146.5 476.6M1188.1 486.1L1168.8 487.2M1204.2 496.0L1194.2 498.6M1207.5 481.6L1193.0 483.6M1106.5 483.4L1085.0 488.1M1123.8 503.1L1106.8 508.3M1173.3 497.4L1151.6 498.9M1210.7 509.1L1192.7 511.4M1154.4 493.9L1143.1 494.3M1151.2 487.1L1137.2 488.6M1183.3 505.3L1172.3 507.4M1197.5 477.7L1179.1 479.6M1148.1 500.9L1135.3 503.7M1128.3 517.8L1106.5 517.7M1113.8 486.6L1098.7 486.7M1099.3 510.0L1079.9 511.4M1259.7 454.3L1247.3 456.1M1128.0 478.1L1109.2 478.8M1218.5 466.5L1204.7 468.0M1134.5 476.5L1113.7 481.2M1247.2 498.5L1238.1 500.2M1098.7 506.3L1087.7 508.7M1116.2 506.2L1102.9 510.0M1099.7 475.5L1083.5 476.0M1259.7 486.4L1239.8 490.4M1185.8 461.9L1176.5 463.4M1180.4 500.0L1167.4 504.1M1157.1 448.7L1136.0 451.6M1131.2 505.9L1118.2 506.6M1174.3 444.3L1159.0 443.5M1280.8 474.3L1269.8 476.3M1260.5 443.9L1242.8 446.2M1161.1 480.3L1150.6 483.4M1272.4 469.3L1256.8 471.7M1193.4 496.4L1172.8 500.6M1121.6 504.6L1099.1 505.0M1273.5 488.2L1257.0 494.2M1167.8 495.8L1147.3 497.7M1175.0 509.5L1162.2 511.2M1209.6 461.9L1198.7 463.2M1181.3 491.3L1164.5 495.3M1135.5 486.1L1118.7 491.8M1103.1 503.2L1084.9 506.5M1250.1 501.0L1239.8 502.8M1145.8 509.3L1124.3 512.9M1184.6 500.7L1164.7 502.6M1217.2 471.9L1206.5 474.3M1187.7 504.3L1166.0 510.7M1163.9 483.1L1142.5 490.8M1211.9 494.1L1193.4 498.4M1213.5 469.8L1194.9 472.2M1248.8 497.6L1236.3 500.8M1212.6 478.0L1195.5 481.0M1160.1 492.8L1148.9 494.0M1292.9 489.9L1282.0 492.3M1194.1 472.3L1178.5 474.9M1187.4 499.7L1177.0 502.1M1118.4 496.1L1099.1 498.9M1157.2 505.6L1144.7 507.1M1115.3 509.9L1102.6 511.6M1236.2 483.1L1221.7 486.3M1258.3 464.5L1244.8 466.5M1105.0 510.6L1085.0 512.9M1249.8 486.6L1228.5 488.4M1099.2 504.3L1082.4 506.4M1194.6 467.8L1181.5 469.1M1131.0 520.1L1120.4 522.1M1281.8 470.5L1271.8 471.4M1117.6 513.0L1106.6 514.1M1172.4 476.6L1155.4 479.7M1205.2 484.1L1188.7 485.6M1186.9 497.9L1164.8 501.7M1179.7 475.1L1168.1 476.1M1252.5 501.4L1236.7 506.4M1255.9 500.1L1243.8 502.8M1189.1 489.9L1175.2 491.2M1099.1 512.2L1080.4 510.8M1101.1 485.9L1084.8 490.8M1144.2 463.4L1131.0 465.6M1193.9 494.9L1174.5 497.5M1272.2 477.5L1257.2 478.9M1158.8 513.6L1143.2 517.6M1208.7 499.6L1199.5 501.4M1184.0 496.5L1174.0 497.8M1101.7 474.7L1089.6 477.5M1192.3 506.5L1181.0 506.7M1215.1 433.6L1194.0 434.3M1180.0 443.3L1162.5 443.6M1160.9 480.6L1139.4 484.1M1252.7 502.5L1231.6 507.0M1186.7 491.7L1173.9 493.2M1157.7 457.1L1147.9 458.5M1150.7 491.2L1141.3 494.1M1149.2 512.6L1140.0 513.7M1163.6 501.7L1142.3 505.0M1210.1 475.6L1197.0 477.9M1127.0 510.4L1111.8 515.8M1276.2 480.9L1263.0 482.9M1269.2 423.3L1252.3 426.6M1124.2 484.5L1110.1 487.3M1120.2 492.5L1102.0 495.6M1112.0 485.0L1096.2 486.9M1136.2 505.3L1120.4 508.6M1230.3 497.3L1220.8 497.6M1196.4 510.0L1184.4 511.4M1144.2 506.5L1129.9 508.8M1158.0 454.6L1147.9 456.9M1201.9 459.8L1181.7 461.1M1129.9 512.0L1113.4 517.3M1135.7 517.2L1125.6 518.1" stroke="#aab9e8" stroke-width="1.5" fill="none"/><path d="M1257.2 432.9L1261.4 429.1L1262.7 434.1ZM1218.9 503.6L1223.5 500.4L1224.2 505.6ZM1251.8 505.6L1256.0 501.9L1257.3 506.9ZM1142.0 502.5L1146.3 498.8L1147.5 503.9ZM1134.6 495.3L1138.3 491.1L1140.2 495.9ZM1243.8 493.0L1248.0 489.2L1249.3 494.2ZM1096.9 482.7L1101.7 479.8L1102.1 485.0ZM1116.5 521.7L1120.9 518.2L1121.9 523.3ZM1199.2 468.6L1203.6 465.1L1204.6 470.2ZM1083.1 477.2L1087.6 473.9L1088.4 479.0ZM1148.0 482.6L1152.7 479.5L1153.3 484.6ZM1155.5 499.3L1159.8 495.6L1161.0 500.7ZM1152.6 451.2L1157.0 447.7L1158.0 452.9ZM1170.2 483.4L1174.4 479.7L1175.6 484.7ZM1177.5 473.8L1181.9 470.3L1182.9 475.4ZM1208.2 425.6L1213.0 422.7L1213.3 427.9ZM1146.6 506.7L1151.2 503.5L1151.9 508.6ZM1216.0 430.8L1220.9 428.1L1221.0 433.3ZM1152.7 444.8L1157.3 441.6L1157.9 446.8ZM1122.5 504.4L1127.0 501.1L1127.8 506.3ZM1170.6 489.9L1175.0 486.3L1176.1 491.4ZM1153.8 506.5L1158.3 503.1L1159.2 508.2ZM1174.1 510.7L1178.6 507.3L1179.5 512.4ZM1099.7 491.3L1104.4 488.1L1105.0 493.3ZM1188.0 479.0L1192.6 475.6L1193.4 480.8ZM1229.0 499.7L1233.4 496.1L1234.4 501.2ZM1160.9 520.2L1165.1 516.4L1166.4 521.4ZM1133.9 484.9L1138.7 481.9L1139.0 487.1ZM1212.8 514.0L1217.2 510.5L1218.2 515.6ZM1191.5 449.9L1196.1 446.6L1196.8 451.8ZM1200.6 507.7L1204.9 504.1L1206.1 509.2ZM1157.6 482.1L1162.8 479.8L1162.5 485.0ZM1122.0 482.1L1126.3 478.5L1127.4 483.6ZM1188.0 480.6L1193.3 478.6L1192.7 483.8ZM1109.4 498.6L1113.8 495.1L1114.8 500.2ZM1133.4 522.1L1137.8 518.5L1138.8 523.6ZM1251.0 493.7L1255.1 489.9L1256.5 494.9ZM1167.2 507.4L1171.2 503.4L1172.8 508.4ZM1188.2 492.8L1193.0 490.0L1193.3 495.1ZM1142.4 502.6L1146.8 499.1L1147.8 504.2ZM1130.0 520.5L1134.3 516.9L1135.4 522.0ZM1199.9 449.2L1204.6 446.0L1205.2 451.2ZM1150.1 485.2L1154.2 481.4L1155.6 486.4ZM1089.1 494.7L1093.6 491.3L1094.4 496.4ZM1220.8 469.7L1225.4 466.3L1226.2 471.4ZM1156.9 508.2L1161.4 504.9L1162.2 510.1ZM1158.9 489.9L1163.4 486.5L1164.3 491.6ZM1183.1 477.5L1187.9 474.7L1188.2 479.9ZM1083.9 474.4L1088.4 471.0L1089.3 476.1ZM1091.8 512.5L1096.6 509.6L1097.0 514.7ZM1218.4 470.2L1223.2 467.4L1223.5 472.5ZM1201.7 482.8L1205.7 478.9L1207.3 483.8ZM1208.6 461.2L1213.4 458.1L1213.8 463.3ZM1171.7 473.4L1176.1 469.9L1177.1 475.0ZM1161.6 493.5L1166.3 490.3L1166.9 495.5ZM1274.5 451.1L1279.3 448.2L1279.7 453.3ZM1181.7 498.1L1185.3 493.8L1187.4 498.6ZM1175.4 499.5L1180.1 496.3L1180.7 501.5ZM1205.7 516.4L1209.8 512.6L1211.2 517.6ZM1115.8 489.0L1120.4 485.8L1121.1 490.9ZM1181.9 506.1L1185.7 502.0L1187.5 506.8ZM1184.5 467.3L1189.3 464.4L1189.6 469.6ZM1269.4 473.5L1274.2 470.5L1274.6 475.7ZM1149.6 496.6L1154.2 493.4L1154.8 498.6ZM1125.3 500.6L1129.9 497.3L1130.7 502.4ZM1244.5 457.9L1249.1 454.7L1249.8 459.8ZM1153.8 505.9L1158.2 502.4L1159.2 507.5ZM1197.7 483.5L1202.1 480.0L1203.1 485.1ZM1147.8 484.5L1152.6 481.5L1153.0 486.7ZM1089.3 495.2L1094.0 492.1L1094.6 497.2ZM1111.5 518.7L1115.7 515.0L1117.0 520.0ZM1141.5 499.5L1146.1 496.1L1146.9 501.3ZM1110.9 487.6L1115.8 484.8L1116.0 490.0ZM1278.3 432.4L1283.1 429.4L1283.5 434.6ZM1157.9 515.5L1162.5 512.3L1163.2 517.4ZM1225.3 502.1L1230.1 499.1L1230.5 504.3ZM1143.6 450.8L1148.0 447.3L1149.0 452.4ZM1149.7 499.9L1153.8 496.1L1155.2 501.1ZM1196.3 486.4L1200.9 483.1L1201.6 488.3ZM1151.4 499.4L1155.7 495.7L1156.9 500.8ZM1228.0 449.0L1232.1 445.2L1233.5 450.2ZM1231.0 467.6L1236.0 465.0L1236.0 470.2ZM1100.6 509.4L1105.1 506.0L1106.0 511.1ZM1162.4 490.1L1167.1 487.0L1167.6 492.2ZM1174.1 482.8L1178.3 479.1L1179.5 484.1ZM1254.2 479.0L1258.6 475.5L1259.7 480.5ZM1187.0 498.2L1191.5 494.8L1192.4 499.9ZM1231.7 462.9L1235.6 458.8L1237.3 463.7ZM1102.5 467.5L1107.7 465.2L1107.4 470.4ZM1185.1 472.1L1189.6 468.7L1190.5 473.9ZM1098.6 469.0L1103.2 465.9L1103.8 471.0ZM1144.8 517.7L1148.9 513.8L1150.3 518.8ZM1109.3 489.2L1113.5 485.6L1114.7 490.6ZM1179.2 502.5L1183.6 498.9L1184.7 504.0ZM1105.6 507.7L1109.7 503.9L1111.1 508.9ZM1192.1 468.8L1196.5 465.2L1197.5 470.3ZM1157.0 494.1L1161.7 491.0L1162.2 496.2ZM1098.3 516.3L1102.8 512.9L1103.6 518.0ZM1080.9 477.7L1085.2 474.1L1086.4 479.1ZM1095.9 495.7L1100.1 491.9L1101.4 496.9ZM1181.6 488.1L1185.8 484.4L1187.1 489.5ZM1142.4 491.7L1146.8 488.2L1147.8 493.3ZM1203.3 498.5L1208.0 495.5L1208.5 500.7ZM1106.5 482.0L1111.1 478.8L1111.8 483.9ZM1136.6 504.0L1140.8 500.3L1142.1 505.3ZM1209.1 490.6L1213.7 487.3L1214.4 492.5ZM1219.9 454.5L1224.1 450.7L1225.4 455.7ZM1101.9 488.9L1106.3 485.4L1107.3 490.5ZM1126.0 493.6L1130.3 490.0L1131.4 495.1ZM1073.5 491.0L1078.2 487.8L1078.8 493.0ZM1124.9 498.2L1129.4 494.9L1130.2 500.1ZM1207.2 499.6L1211.6 496.1L1212.6 501.2ZM1164.5 510.1L1169.3 507.1L1169.7 512.3ZM1190.0 459.1L1194.4 455.6L1195.4 460.7ZM1190.1 489.4L1194.4 485.8L1195.6 490.8ZM1207.3 501.5L1211.7 498.0L1212.7 503.1ZM1209.2 482.2L1213.6 478.6L1214.7 483.7ZM1189.9 478.8L1194.8 476.1L1194.9 481.3ZM1191.3 513.4L1196.0 510.2L1196.6 515.4ZM1162.4 516.0L1166.8 512.5L1167.8 517.6ZM1174.4 493.6L1179.4 491.1L1179.3 496.3ZM1111.4 488.0L1116.1 484.8L1116.7 489.9ZM1173.1 483.6L1178.1 480.9L1178.2 486.1ZM1230.7 476.9L1235.5 473.9L1235.9 479.0ZM1188.4 509.5L1192.7 506.0L1193.8 511.1ZM1188.1 469.7L1192.7 466.5L1193.4 471.6ZM1194.1 489.3L1199.0 486.6L1199.2 491.8ZM1109.5 510.7L1113.7 507.0L1114.9 512.1ZM1139.9 509.7L1144.3 506.2L1145.3 511.3ZM1193.4 444.6L1197.8 441.1L1198.8 446.2ZM1185.7 450.8L1190.0 447.2L1191.1 452.3ZM1132.5 479.7L1137.4 476.9L1137.6 482.1ZM1132.7 475.8L1137.5 472.7L1137.9 477.9ZM1145.9 463.0L1150.1 459.2L1151.4 464.3ZM1080.8 496.4L1085.4 493.1L1086.2 498.2ZM1230.4 502.8L1235.1 499.6L1235.7 504.7ZM1137.6 486.6L1141.8 482.8L1143.1 487.9ZM1088.9 507.0L1093.7 503.9L1094.2 509.1ZM1211.4 500.6L1215.8 497.0L1216.9 502.1ZM1121.6 513.7L1125.9 510.0L1127.1 515.1ZM1155.3 452.4L1159.2 448.3L1160.8 453.2ZM1258.7 465.3L1263.1 461.8L1264.2 466.8ZM1166.7 517.9L1171.0 514.3L1172.1 519.4ZM1082.0 487.6L1086.7 484.4L1087.3 489.6ZM1157.1 516.8L1161.4 513.2L1162.6 518.2ZM1147.4 498.4L1151.7 494.8L1152.8 499.8ZM1139.6 484.0L1144.3 480.8L1144.9 486.0ZM1099.2 489.0L1103.8 485.9L1104.4 491.0ZM1162.8 500.0L1167.3 496.5L1168.2 501.6ZM1137.5 469.6L1142.0 466.1L1142.9 471.3ZM1164.8 510.5L1169.4 507.2L1170.1 512.4ZM1226.9 486.1L1230.9 482.1L1232.5 487.0ZM1134.2 485.4L1138.9 482.3L1139.4 487.5ZM1194.0 511.2L1197.9 507.2L1199.5 512.1ZM1173.7 477.4L1178.0 473.7L1179.2 478.7ZM1181.6 502.1L1185.5 498.1L1187.2 503.0ZM1236.5 488.9L1240.5 484.9L1242.1 489.8ZM1147.1 493.0L1151.7 489.8L1152.3 495.0ZM1109.0 487.8L1113.5 484.5L1114.3 489.6ZM1142.7 477.7L1147.3 474.3L1148.1 479.5ZM1187.6 442.3L1192.0 438.8L1193.0 443.9ZM1202.2 475.0L1206.8 471.6L1207.6 476.8ZM1223.1 491.4L1227.8 488.3L1228.3 493.5ZM1247.4 506.1L1251.8 502.6L1252.8 507.7ZM1172.0 498.3L1176.7 495.2L1177.3 500.4ZM1224.8 442.7L1229.3 439.4L1230.1 444.5ZM1111.9 469.8L1115.9 465.9L1117.4 470.8ZM1148.3 469.0L1152.9 465.7L1153.7 470.8ZM1178.8 465.6L1183.3 462.3L1184.1 467.5ZM1135.3 495.0L1139.6 491.3L1140.8 496.4ZM1133.3 483.2L1138.3 480.5L1138.4 485.7ZM1128.4 458.6L1132.5 454.7L1134.0 459.7ZM1087.7 492.8L1091.7 488.8L1093.3 493.7ZM1176.8 439.2L1181.3 435.8L1182.2 440.9ZM1093.7 517.3L1098.4 514.1L1099.0 519.3ZM1145.6 519.9L1150.0 516.4L1151.0 521.5ZM1139.2 518.3L1143.1 514.2L1144.8 519.2ZM1272.8 477.7L1277.5 474.7L1278.0 479.9ZM1159.7 513.9L1164.0 510.3L1165.1 515.4ZM1199.3 459.2L1202.9 454.9L1204.9 459.7ZM1171.8 513.6L1176.7 510.9L1176.8 516.1ZM1167.4 482.5L1172.0 479.2L1172.7 484.4ZM1101.1 494.3L1106.0 491.6L1106.1 496.8ZM1188.5 509.0L1193.2 505.9L1193.8 511.1ZM1217.3 509.3L1221.9 506.1L1222.5 511.3ZM1086.1 502.2L1090.3 498.4L1091.6 503.5ZM1113.8 480.6L1118.3 477.2L1119.1 482.4ZM1179.9 471.7L1184.5 468.5L1185.2 473.7ZM1128.3 515.7L1133.0 512.5L1133.5 517.7ZM1179.3 478.8L1183.7 475.3L1184.6 480.4ZM1196.3 494.5L1200.9 491.3L1201.6 496.5ZM1217.0 485.4L1221.8 482.5L1222.2 487.7ZM1122.9 482.7L1127.2 479.0L1128.4 484.1ZM1207.8 508.2L1212.1 504.5L1213.2 509.6ZM1150.3 484.3L1154.7 480.8L1155.8 485.9ZM1128.5 509.5L1133.2 506.3L1133.8 511.4ZM1178.4 474.5L1183.2 471.4L1183.7 476.6ZM1084.8 494.0L1088.9 490.2L1090.3 495.2ZM1100.1 516.2L1104.6 512.8L1105.4 518.0ZM1188.9 483.4L1193.4 480.1L1194.2 485.2ZM1144.3 508.5L1148.8 505.1L1149.7 510.2ZM1099.1 521.3L1103.8 518.2L1104.3 523.4ZM1203.6 470.7L1208.6 468.1L1208.6 473.3ZM1226.1 505.6L1230.5 502.1L1231.5 507.2ZM1095.6 515.5L1100.2 512.3L1100.9 517.4ZM1099.4 518.5L1103.9 515.1L1104.8 520.2ZM1158.2 489.7L1162.8 486.6L1163.5 491.7ZM1204.0 503.6L1208.8 500.6L1209.2 505.8ZM1137.0 502.2L1141.8 499.3L1142.2 504.5ZM1145.2 492.2L1150.2 489.6L1150.2 494.8ZM1183.6 512.9L1187.8 509.0L1189.2 514.0ZM1144.6 516.8L1148.9 513.2L1150.1 518.2ZM1255.8 461.8L1260.0 458.0L1261.3 463.1ZM1259.9 460.0L1264.4 456.6L1265.3 461.7ZM1201.3 513.2L1205.7 509.7L1206.7 514.8ZM1192.2 511.0L1196.9 507.7L1197.5 512.9ZM1083.4 483.3L1088.2 480.2L1088.6 485.4ZM1209.9 498.6L1214.4 495.2L1215.3 500.3ZM1147.3 493.2L1152.1 490.2L1152.5 495.4ZM1187.4 479.2L1191.9 475.8L1192.8 481.0ZM1134.4 499.7L1139.0 496.3L1139.8 501.4ZM1247.9 452.5L1252.7 449.5L1253.1 454.7ZM1242.4 476.0L1246.8 472.5L1247.8 477.6ZM1096.5 489.1L1100.9 485.6L1101.9 490.7ZM1212.8 509.0L1217.1 505.4L1218.2 510.5ZM1209.6 494.0L1214.2 490.7L1214.9 495.9ZM1106.6 502.2L1110.8 498.4L1112.1 503.4ZM1242.4 494.5L1247.1 491.4L1247.6 496.6ZM1181.0 487.9L1185.2 484.2L1186.5 489.2ZM1080.9 509.7L1085.7 506.8L1086.0 512.0ZM1211.3 493.2L1215.8 489.7L1216.7 494.8ZM1207.0 503.1L1211.2 499.4L1212.5 504.4ZM1212.5 469.9L1217.5 467.3L1217.5 472.5ZM1191.2 477.6L1195.0 473.5L1196.8 478.4ZM1122.5 510.6L1126.9 507.1L1127.8 512.2ZM1168.2 506.2L1172.7 502.9L1173.6 508.0ZM1107.9 479.8L1112.3 476.3L1113.2 481.4ZM1156.0 515.5L1160.8 512.5L1161.3 517.6ZM1112.4 488.7L1117.4 486.1L1117.4 491.3ZM1164.4 464.1L1169.3 461.3L1169.5 466.5ZM1127.3 484.3L1131.9 481.1L1132.7 486.2ZM1220.4 481.6L1225.2 478.5L1225.6 483.7ZM1135.0 469.8L1139.2 466.1L1140.5 471.1ZM1149.4 501.2L1153.9 497.8L1154.7 503.0ZM1267.3 500.3L1271.9 497.1L1272.6 502.2ZM1114.5 498.9L1118.9 495.3L1119.9 500.4ZM1140.9 468.4L1145.4 465.0L1146.3 470.1ZM1110.5 488.7L1115.2 485.6L1115.8 490.7ZM1119.2 518.0L1124.1 515.2L1124.3 520.4ZM1118.2 494.6L1123.2 492.1L1123.1 497.3ZM1141.5 476.8L1146.4 474.0L1146.6 479.2ZM1163.8 487.4L1168.7 484.6L1169.0 489.7ZM1189.3 499.9L1193.5 496.1L1194.8 501.2ZM1188.1 484.3L1192.7 481.1L1193.4 486.2ZM1080.1 489.1L1084.5 485.5L1085.6 490.6ZM1102.0 509.7L1106.1 505.8L1107.6 510.8ZM1146.6 499.3L1151.4 496.3L1151.8 501.5ZM1187.7 512.1L1192.3 508.9L1193.0 514.0ZM1138.1 494.4L1143.1 491.7L1143.2 496.9ZM1132.2 489.2L1136.9 486.1L1137.4 491.2ZM1167.4 508.3L1171.8 504.8L1172.8 509.9ZM1174.1 480.2L1178.8 477.1L1179.3 482.2ZM1130.4 504.8L1134.7 501.2L1135.9 506.3ZM1101.5 517.7L1106.5 515.1L1106.5 520.3ZM1093.7 486.7L1098.7 484.1L1098.7 489.3ZM1074.9 511.7L1079.7 508.8L1080.0 514.0ZM1242.3 456.8L1246.9 453.6L1247.6 458.7ZM1104.2 479.0L1109.1 476.2L1109.3 481.4ZM1199.7 468.5L1204.4 465.4L1204.9 470.6ZM1108.8 482.4L1113.1 478.7L1114.3 483.8ZM1233.2 501.1L1237.6 497.7L1238.6 502.8ZM1082.8 509.8L1087.1 506.2L1088.2 511.3ZM1098.1 511.4L1102.2 507.5L1103.7 512.5ZM1078.5 476.2L1083.4 473.4L1083.6 478.6ZM1234.9 491.4L1239.3 487.9L1240.4 493.0ZM1171.6 464.2L1176.1 460.8L1176.9 465.9ZM1162.6 505.5L1166.6 501.6L1168.2 506.5ZM1131.1 452.3L1135.7 449.1L1136.4 454.2ZM1113.2 506.9L1118.1 504.0L1118.4 509.2ZM1154.0 443.3L1159.1 440.9L1158.9 446.1ZM1264.9 477.2L1269.4 473.8L1270.3 478.9ZM1237.9 446.8L1242.5 443.6L1243.2 448.7ZM1145.8 484.8L1149.9 480.9L1151.4 485.9ZM1251.8 472.4L1256.4 469.1L1257.2 474.2ZM1167.9 501.6L1172.3 498.1L1173.4 503.2ZM1094.1 505.1L1099.0 502.4L1099.1 507.6ZM1252.3 495.9L1256.1 491.7L1257.9 496.6ZM1142.3 498.1L1147.1 495.1L1147.5 500.3ZM1157.3 511.9L1161.9 508.7L1162.6 513.8ZM1193.7 463.9L1198.3 460.7L1199.0 465.8ZM1159.6 496.5L1163.9 492.8L1165.1 497.9ZM1113.9 493.4L1117.9 489.3L1119.5 494.2ZM1079.9 507.4L1084.4 504.0L1085.3 509.1ZM1234.9 503.6L1239.4 500.2L1240.3 505.3ZM1119.4 513.7L1123.9 510.3L1124.7 515.4ZM1159.7 503.1L1164.4 500.0L1164.9 505.2ZM1201.7 475.3L1206.0 471.7L1207.1 476.8ZM1161.2 512.1L1165.2 508.2L1166.7 513.2ZM1137.8 492.5L1141.6 488.3L1143.4 493.2ZM1188.5 499.6L1192.8 495.9L1194.0 500.9ZM1189.9 472.9L1194.5 469.6L1195.2 474.8ZM1231.5 502.0L1235.7 498.2L1237.0 503.3ZM1190.6 481.8L1195.1 478.4L1196.0 483.5ZM1143.9 494.5L1148.6 491.4L1149.2 496.6ZM1277.2 493.3L1281.5 489.7L1282.6 494.8ZM1173.6 475.7L1178.1 472.3L1178.9 477.4ZM1172.1 503.2L1176.4 499.5L1177.6 504.6ZM1094.1 499.6L1098.7 496.3L1099.4 501.5ZM1139.7 507.8L1144.4 504.6L1145.0 509.7ZM1097.7 512.2L1102.3 509.0L1103.0 514.1ZM1216.8 487.4L1221.1 483.7L1222.2 488.8ZM1239.8 467.3L1244.4 463.9L1245.1 469.1ZM1080.0 513.4L1084.7 510.3L1085.3 515.4ZM1223.5 488.8L1228.3 485.8L1228.7 491.0ZM1077.4 507.0L1082.0 503.8L1082.7 509.0ZM1176.6 469.6L1181.3 466.5L1181.8 471.6ZM1115.5 523.0L1119.9 519.5L1120.9 524.7ZM1266.8 471.8L1271.6 468.8L1272.0 474.0ZM1101.7 514.7L1106.4 511.6L1106.9 516.7ZM1150.5 480.6L1154.9 477.1L1155.9 482.2ZM1183.7 486.1L1188.5 483.0L1188.9 488.2ZM1159.9 502.6L1164.3 499.2L1165.2 504.3ZM1163.1 476.5L1167.9 473.5L1168.3 478.7ZM1231.9 507.9L1235.9 503.9L1237.4 508.9ZM1238.9 504.0L1243.2 500.3L1244.4 505.4ZM1170.2 491.6L1175.0 488.6L1175.4 493.8ZM1075.4 510.5L1080.6 508.2L1080.2 513.4ZM1080.0 492.2L1084.0 488.3L1085.5 493.3ZM1126.1 466.5L1130.6 463.0L1131.4 468.2ZM1169.5 498.1L1174.2 494.9L1174.8 500.1ZM1252.2 479.3L1257.0 476.3L1257.4 481.5ZM1138.3 518.8L1142.5 515.1L1143.8 520.1ZM1194.6 502.4L1199.0 498.8L1200.0 503.9ZM1169.1 498.4L1173.7 495.2L1174.3 500.3ZM1084.7 478.6L1089.0 474.9L1090.1 480.0ZM1176.0 506.8L1181.0 504.1L1181.0 509.3ZM1189.0 434.5L1193.9 431.7L1194.1 436.9ZM1157.5 443.7L1162.5 441.0L1162.6 446.2ZM1134.5 484.9L1139.0 481.5L1139.9 486.7ZM1226.7 508.0L1231.0 504.4L1232.1 509.5ZM1169.0 493.8L1173.6 490.6L1174.2 495.8ZM1143.0 459.2L1147.6 455.9L1148.3 461.1ZM1136.5 495.5L1140.6 491.6L1142.1 496.6ZM1135.0 514.4L1139.6 511.2L1140.3 516.3ZM1137.3 505.7L1141.9 502.4L1142.7 507.5ZM1192.0 478.8L1196.5 475.4L1197.4 480.5ZM1107.1 517.4L1111.0 513.3L1112.7 518.2ZM1258.1 483.6L1262.7 480.3L1263.4 485.5ZM1247.4 427.5L1251.8 424.0L1252.8 429.1ZM1105.2 488.3L1109.6 484.7L1110.6 489.8ZM1097.1 496.5L1101.6 493.0L1102.4 498.2ZM1091.2 487.5L1095.9 484.3L1096.5 489.5ZM1115.5 509.6L1119.9 506.0L1120.9 511.1ZM1215.8 497.7L1220.7 495.0L1220.8 500.2ZM1179.4 512.0L1184.1 508.8L1184.7 514.0ZM1124.9 509.6L1129.5 506.2L1130.3 511.4ZM1143.0 458.1L1147.3 454.4L1148.5 459.5ZM1176.7 461.4L1181.5 458.5L1181.8 463.7ZM1108.6 518.8L1112.6 514.8L1114.2 519.8ZM1120.7 518.6L1125.4 515.5L1125.9 520.7Z" fill="#8494d4"/></g>
<g opacity="0.8"><path d="M1086.8 291.0L1090.9 288.1M1067.5 305.3L1069.9 304.0M1116.8 273.5L1118.6 272.5M1091.2 290.2L1094.2 287.4M1114.9 263.5L1117.6 262.1M1122.9 246.9L1127.5 245.1M1060.0 307.7L1063.1 305.6M1106.8 246.3L1109.4 244.2M1063.7 280.6L1065.8 279.0M1104.1 281.8L1106.4 280.5M1118.7 272.7L1121.2 269.7M1038.3 310.5L1041.6 306.9M1104.1 272.2L1106.9 270.2M1032.9 317.4L1036.1 314.4M1124.8 272.2L1126.6 270.6M1129.9 261.4L1134.5 259.0M1085.8 273.2L1090.3 270.9M1130.3 271.7L1133.2 269.3M1110.7 280.2L1113.4 278.5M1117.7 273.2L1120.9 269.8M1108.6 266.8L1109.8 265.5M1109.9 255.9L1112.4 254.4M1058.0 289.5L1059.5 288.9M1040.5 306.2L1043.6 304.0M1042.8 318.0L1044.3 316.7M1069.3 300.4L1070.7 299.4M1072.7 281.6L1077.0 278.6M1030.6 307.1L1033.1 305.7M1071.6 283.9L1075.3 281.4M1088.8 248.8L1091.4 246.2M1086.7 286.8L1088.6 284.8M1077.1 275.6L1078.6 274.6M1131.0 250.3L1134.1 248.7M1072.3 267.5L1073.8 266.9M1129.9 241.3L1134.3 239.0M1088.2 283.6L1090.4 282.6M1083.8 255.2L1085.3 254.3M1100.7 284.1L1102.5 283.4M1096.1 252.3L1097.6 251.7M1118.4 246.9L1122.4 243.2M1120.7 235.1L1124.1 232.4M1038.6 303.7L1041.1 301.9M1101.1 269.4L1102.7 268.1M1066.7 284.8L1069.9 282.6M1082.4 253.7L1085.7 251.2" stroke="#5a6aa6" stroke-width="0.9" fill="none"/><path d="M1092.9 286.7L1091.7 289.3L1090.0 286.9ZM1072.1 302.8L1070.6 305.3L1069.2 302.7ZM1120.7 271.3L1119.3 273.8L1117.8 271.2ZM1096.0 285.7L1095.2 288.5L1093.2 286.4ZM1119.7 260.8L1118.3 263.4L1116.8 260.7ZM1129.8 244.2L1128.0 246.5L1126.9 243.7ZM1065.2 304.2L1063.9 306.8L1062.3 304.3ZM1111.3 242.6L1110.4 245.3L1108.5 243.0ZM1067.8 277.5L1066.7 280.2L1064.9 277.8ZM1108.5 279.2L1107.2 281.8L1105.6 279.2ZM1122.8 267.7L1122.4 270.6L1120.0 268.7ZM1043.3 305.1L1042.7 307.9L1040.5 305.9ZM1108.9 268.8L1107.7 271.5L1106.0 269.0ZM1038.0 312.8L1037.1 315.6L1035.1 313.3ZM1128.5 269.0L1127.6 271.8L1125.6 269.5ZM1136.7 257.8L1135.2 260.3L1133.8 257.6ZM1092.5 269.8L1091.0 272.2L1089.6 269.6ZM1135.2 267.8L1134.2 270.5L1132.3 268.2ZM1115.5 277.2L1114.2 279.8L1112.6 277.2ZM1122.7 268.1L1122.0 270.9L1119.9 268.8ZM1111.5 263.7L1110.9 266.5L1108.7 264.5ZM1114.6 253.2L1113.1 255.8L1111.7 253.1ZM1061.8 288.0L1060.0 290.3L1058.9 287.5ZM1045.7 302.5L1044.5 305.2L1042.8 302.7ZM1046.2 315.0L1045.3 317.8L1043.3 315.5ZM1072.7 298.0L1071.6 300.7L1069.8 298.2ZM1079.0 277.2L1077.8 279.8L1076.1 277.4ZM1035.2 304.4L1033.8 307.0L1032.3 304.4ZM1077.3 279.9L1076.1 282.6L1074.4 280.1ZM1093.1 244.4L1092.5 247.2L1090.3 245.1ZM1090.3 283.0L1089.6 285.9L1087.5 283.8ZM1080.7 273.2L1079.4 275.8L1077.7 273.3ZM1136.3 247.5L1134.8 250.0L1133.4 247.4ZM1076.2 266.1L1074.4 268.4L1073.3 265.5ZM1136.5 237.8L1135.0 240.3L1133.6 237.7ZM1092.6 281.6L1091.0 284.0L1089.7 281.2ZM1087.4 252.9L1086.1 255.5L1084.5 253.0ZM1104.9 282.4L1103.1 284.7L1102.0 282.0ZM1099.9 250.7L1098.2 253.1L1097.0 250.3ZM1124.2 241.4L1123.4 244.2L1121.3 242.1ZM1126.1 230.8L1125.1 233.5L1123.2 231.2ZM1043.2 300.5L1042.0 303.2L1040.3 300.7ZM1104.6 266.5L1103.6 269.3L1101.7 266.9ZM1071.9 281.1L1070.7 283.8L1069.0 281.3ZM1087.7 249.7L1086.6 252.4L1084.8 250.0Z" fill="#5a6aa6"/></g>
<path d="M1078.0 437.0L1055.0 438.1M1068.0 424.0L1051.1 426.0M1048.0 447.0L1038.2 451.9M1090.0 412.0L1079.1 410.9M1228.0 287.0L1228.0 314.0M1236.0 300.0L1233.1 314.7" stroke="#d8dde8" stroke-width="2.2" fill="none"/><path d="M1046.0 438.6L1054.9 435.0L1055.2 441.3ZM1042.2 427.1L1050.7 422.8L1051.5 429.2ZM1030.1 455.9L1036.7 449.1L1039.6 454.8ZM1070.1 410.0L1079.4 407.7L1078.7 414.1ZM1228.0 323.0L1224.8 314.0L1231.2 314.0ZM1231.3 323.5L1229.9 314.1L1236.2 315.3Z" fill="#c5ccdc"/>
</g></svg>
<div class="b" style="left:1595px;top:29px;width:5px;height:667px;background:#f7f7f7"></div>
<div class="b" style="left:0px;top:0px;width:1595px;height:29px;background:#fff;box-shadow:0 1px 3px rgba(0,0,0,0.28);z-index:2"></div>
<div class="b" style="left:0px;top:0px;width:1600px;height:1px;background:#e2e2e2;z-index:3"></div>
<div class="b" style="left:1595px;top:0px;width:5px;height:696px;background:#f6f6f6;border-left:1px solid #ececec;box-sizing:border-box;z-index:3"></div>
<svg class="i" style="left:18px;top:8px;z-index:4" width="14" height="13" viewBox="0 0 14 13"><path d="M1.5 2 L6.8 11.5 L12.5 1.5" fill="none" stroke="#8c8c8c" stroke-width="1.9" stroke-linejoin="round"/><path d="M4.3 6.5 L9.8 5.2" stroke="#8c8c8c" stroke-width="1.6"/><circle cx="1.6" cy="11.2" r="1.1" fill="#8c8c8c"/></svg>
<div class="t n" style="left:678.00px;top:10.98px;font-size:9px;color:#b8b8b8;font-weight:400;letter-spacing:0px;z-index:4">Projects</div>
<div class="t n" style="left:717.50px;top:10.98px;font-size:9px;color:#444;font-weight:400;letter-spacing:0px;z-index:4">/</div>
<div class="t n" style="left:728.50px;top:10.98px;font-size:9px;color:#333;font-weight:400;letter-spacing:0px;z-index:4">PMSM Electric Motor</div>
<svg class="i" style="left:1475.5px;top:8.5px;z-index:4" width="13" height="13" viewBox="0 0 13 13"><circle cx="6.5" cy="6.5" r="5.6" fill="none" stroke="#8a8a8a" stroke-width="1"/><path d="M4.6 5.1 C4.6 3.9 5.5 3.3 6.5 3.3 C7.6 3.3 8.4 4 8.4 5 C8.4 6.3 6.6 6.4 6.6 7.8" fill="none" stroke="#8a8a8a" stroke-width="1"/><circle cx="6.55" cy="9.6" r="0.6" fill="#8a8a8a"/></svg>
<div class="t n" style="left:1495.50px;top:10.34px;font-size:10px;color:#6e6e6e;font-weight:400;letter-spacing:0px;z-index:4">Support</div>
<div class="b" style="left:1553px;top:6.8px;width:15.7px;height:15.7px;border-radius:50%;background:#a052d9;z-index:4"></div>
<div class="t" style="left:1555.40px;top:11.51px;font-size:7.2px;color:#f3e6fb;font-weight:401;letter-spacing:0px;z-index:5;letter-spacing:-0.3px">AP</div>
<svg class="i" style="left:1571px;top:11.5px;z-index:4" width="6" height="5" viewBox="0 0 6 5"><path d="M0.8 1.2 L3 3.5 L5.2 1.2" fill="none" stroke="#777" stroke-width="1"/></svg>
<svg class="i" style="left:11px;top:42px;" width="11" height="8" viewBox="0 0 11 8"><path d="M0 0.8H11M0 4H11M0 7.2H11" stroke="#666" stroke-width="1.1"/></svg>
<svg class="i" style="left:10px;top:71px;" width="13" height="14" viewBox="0 0 13 14"><path d="M6.5 1.3 L11.6 4.2 V9.8 L6.5 12.7 L1.4 9.8 V4.2 Z" fill="none" stroke="#5a5a5a" stroke-width="1.5" stroke-linejoin="round"/><path d="M1.6 4.3 L6.5 7 L11.4 4.3 M6.5 7 V12.5" fill="none" stroke="#5a5a5a" stroke-width="1"/><path d="M6.5 0 V1.3 M0 10.7 L1.4 9.8 M13 10.7 L11.6 9.8" stroke="#5a5a5a" stroke-width="0.5"/></svg>
<svg class="i" style="left:11px;top:99px;" width="11" height="12" viewBox="0 0 11 12"><path d="M2 0V4M2 7V12M5.5 0V2.5M5.5 5.5V12M9 0V6.5M9 9.5V12" stroke="#5a5a5a" stroke-width="1.4"/><path d="M0 5H4M3.5 3.8H7.5M7 8H11" stroke="#5a5a5a" stroke-width="1.6"/></svg>
<svg class="i" style="left:10.5px;top:124.5px;" width="12" height="12" viewBox="0 0 12 12"><ellipse cx="6" cy="6" rx="5.5" ry="2.6" transform="rotate(45 6 6)" fill="none" stroke="#5a5a5a" stroke-width="1.3"/><ellipse cx="6" cy="6" rx="5.5" ry="2.6" transform="rotate(-45 6 6)" fill="none" stroke="#5a5a5a" stroke-width="1.3"/><circle cx="6" cy="6" r="0.9" fill="#5a5a5a"/></svg>
<svg class="i" style="left:11px;top:151.5px;" width="11" height="11" viewBox="0 0 11 11"><rect x="0.7" y="0.7" width="9.6" height="9.6" rx="1" fill="none" stroke="#5a5a5a" stroke-width="1.3"/><path d="M4.2 3.2 L7.4 5.5 L4.2 7.8Z" fill="#5a5a5a"/></svg>
<div class="t n" style="left:42.50px;top:43.64px;font-size:8.7px;color:#7a7a7a;font-weight:400;letter-spacing:0px;">Simulations</div>
<svg class="i" style="left:319.5px;top:40.5px;" width="11" height="11" viewBox="0 0 11 11"><path d="M5.5 0.5V10.5M0.5 5.5H10.5" stroke="#c08cef" stroke-width="1.2"/></svg>
<div class="b" style="left:83px;top:458px;width:261.5px;height:28.7px;background:#f3e7fa"></div>
<svg class="i" style="left:40.5px;top:73.9px;" width="7" height="4" viewBox="0 0 7 4"><path d="M0.5 0.5 L6.5 0.5 L3.5 3.5Z" fill="#9a9a9a"/></svg>
<svg class="i" style="left:61px;top:70.10000000000001px;" width="11" height="11" viewBox="0 0 11 11"><rect x="0.6" y="0.6" width="9.8" height="9.8" rx="1.2" fill="none" stroke="#9a9a9a" stroke-width="1.1"/><path d="M4.2 3.4 L7.2 5.5 L4.2 7.6Z" fill="#9a9a9a"/></svg>
<div class="t n" style="left:83.00px;top:70.53px;font-size:10px;color:#333;font-weight:400;letter-spacing:0px;">Simulation 1</div>
<div class="b" style="left:273.7px;top:65.10px;width:59.7px;height:16.6px;border:1px solid #a8ebc2;border-radius:9.3px"></div>
<svg class="i" style="left:283.7px;top:69.4px;" width="10" height="10" viewBox="0 0 10 10"><path d="M7.8 2.4 A3.7 3.7 0 1 1 3.2 1.9" fill="none" stroke="#666" stroke-width="1.3"/><path d="M2.2 0 L5.2 1.4 L2.6 3.6Z" fill="#666"/></svg>
<div class="t n" style="left:294.70px;top:70.40px;font-size:8.5px;color:#777;font-weight:400;letter-spacing:0px;">Success</div>
<svg class="i" style="left:68.3px;top:97.85000000000001px;" width="12" height="12" viewBox="0 0 12 12"><path d="M5.5 0.8 L10.2 3.2 V8.6 L5.5 11 L0.8 8.6 V3.2Z M0.8 3.2 L5.5 5.7 L10.2 3.2 M5.5 5.7 V11" fill="none" stroke="#9a9a9a" stroke-width="1" stroke-linejoin="round"/></svg>
<div class="t n" style="left:90.00px;top:98.98px;font-size:10px;color:#333;font-weight:400;letter-spacing:0px;">Mesh</div>
<div class="b" style="left:273.7px;top:93.55px;width:59.7px;height:16.6px;border:1px solid #a8ebc2;border-radius:9.3px"></div>
<svg class="i" style="left:283.7px;top:97.85000000000001px;" width="10" height="10" viewBox="0 0 10 10"><path d="M7.8 2.4 A3.7 3.7 0 1 1 3.2 1.9" fill="none" stroke="#666" stroke-width="1.3"/><path d="M2.2 0 L5.2 1.4 L2.6 3.6Z" fill="#666"/></svg>
<div class="t n" style="left:294.70px;top:98.85px;font-size:8.5px;color:#777;font-weight:400;letter-spacing:0px;">Success</div>
<svg class="i" style="left:68px;top:126.30000000000001px;" width="12" height="12" viewBox="0 0 12 12"><path d="M3 1 H10.5 C11.3 1 11.6 1.5 11.6 2.3 H10 V10 H3Z" fill="#555"/><rect x="4.6" y="3.2" width="3.8" height="1.1" fill="#fff"/><rect x="4.6" y="5.4" width="3.8" height="1.1" fill="#fff"/><path d="M0.5 10.2 H9 V11.6 H0.5Z" fill="#555"/></svg>
<div class="t n" style="left:90.00px;top:127.44px;font-size:10px;color:#333;font-weight:400;letter-spacing:0px;">Script</div>
<svg class="i" style="left:322px;top:127.1px;" width="6" height="9" viewBox="0 0 6 9"><path d="M1 1 L4.5 4.5 L1 8" fill="none" stroke="#8a8a8a" stroke-width="1.1"/></svg>
<svg class="i" style="left:68px;top:154.75px;" width="13" height="12" viewBox="0 0 13 12"><path d="M5.6 1.1 C4.2 0.6 3.5 1.6 3.3 2.9 L2.3 9 C2.1 10.4 1.3 11.1 0.2 10.6 M1.4 4.6 H5" fill="none" stroke="#555" stroke-width="1.1"/><path d="M6.8 6.3 L11.4 11 M11.4 6.3 L6.8 11" stroke="#555" stroke-width="1.2"/></svg>
<div class="t n" style="left:90.00px;top:155.88px;font-size:10px;color:#333;font-weight:400;letter-spacing:0px;">Sweeps and overrides</div>
<div class="t n" style="left:192.95px;top:155.88px;font-size:10px;color:#b0b0b0;font-weight:400;letter-spacing:0px;">·</div>
<div class="t n" style="left:199.45px;top:155.88px;font-size:10px;color:#b0b0b0;font-weight:400;letter-spacing:0px;">0</div>
<svg class="i" style="left:320px;top:155.04999999999998px;" width="10" height="10" viewBox="0 0 10 10"><path d="M5 0.5V9.5M0.5 5H9.5" stroke="#666" stroke-width="1.7"/></svg>
<svg class="i" style="left:69px;top:183.50000000000003px;" width="11" height="12" viewBox="0 0 11 12"><ellipse cx="5.5" cy="2.3" rx="4.9" ry="1.9" fill="#666"/><path d="M0.6 3.6 C1.5 5.4 9.5 5.4 10.4 3.6 V6.2 C9.5 8 1.5 8 0.6 6.2Z" fill="#666"/><path d="M0.6 7.4 C1.5 9.2 9.5 9.2 10.4 7.4 V9.6 C9.5 11.6 1.5 11.6 0.6 9.6Z" fill="#666"/></svg>
<div class="t n" style="left:90.00px;top:184.34px;font-size:10px;color:#333;font-weight:400;letter-spacing:0px;">Outputs</div>
<div class="t n" style="left:129.03px;top:184.34px;font-size:10px;color:#b0b0b0;font-weight:400;letter-spacing:0px;">·</div>
<div class="t n" style="left:135.53px;top:184.34px;font-size:10px;color:#b0b0b0;font-weight:400;letter-spacing:0px;">0</div>
<svg class="i" style="left:320px;top:182.8px;" width="12" height="12" viewBox="0 0 12 12"><ellipse cx="4.8" cy="2.2" rx="4.3" ry="1.7" fill="#8a8a8a"/><path d="M0.5 3.3 C1.3 4.9 8.3 4.9 9.1 3.3 V5.5 C8.3 7.1 1.3 7.1 0.5 5.5Z" fill="#8a8a8a"/><path d="M0.5 6.6 C1.3 8.2 6 8.3 6.8 7.8 V9.8 C5 10.4 1.3 10.2 0.5 8.8Z" fill="#8a8a8a"/><path d="M9.2 7.2 V11.8 M6.9 9.5 H11.5" stroke="#8a8a8a" stroke-width="1.2"/></svg>
<svg class="i" style="left:48.5px;top:216.15px;" width="7" height="4" viewBox="0 0 7 4"><path d="M0.5 0.5 L6.5 0.5 L3.5 3.5Z" fill="#9a9a9a"/></svg>
<svg class="i" style="left:68px;top:212.35px;" width="11" height="11" viewBox="0 0 11 11"><rect x="0.6" y="0.6" width="9.8" height="9.8" rx="1.2" fill="none" stroke="#a0a0a0" stroke-width="1.1"/><path d="M4.2 3.4 L7.2 5.5 L4.2 7.6Z" fill="#a0a0a0"/></svg>
<div class="t n" style="left:90.00px;top:212.78px;font-size:10px;color:#333;font-weight:400;letter-spacing:0px;">Results</div>
<svg class="i" style="left:75px;top:240.79999999999998px;" width="11" height="11" viewBox="0 0 11 11"><rect x="0.6" y="0.6" width="9.8" height="9.8" rx="1.2" fill="none" stroke="#a0a0a0" stroke-width="1.1"/><path d="M4.2 3.4 L7.2 5.5 L4.2 7.6Z" fill="#a0a0a0"/></svg>
<div class="t n" style="left:97.00px;top:241.23px;font-size:10px;color:#333;font-weight:400;letter-spacing:0px;">Summary</div>
<svg class="i" style="left:75px;top:269.24999999999994px;" width="11" height="11" viewBox="0 0 11 11"><rect x="0.6" y="0.6" width="9.8" height="9.8" rx="1.2" fill="none" stroke="#a0a0a0" stroke-width="1.1"/><path d="M4.2 3.4 L7.2 5.5 L4.2 7.6Z" fill="#a0a0a0"/></svg>
<div class="t n" style="left:97.00px;top:269.69px;font-size:10px;color:#333;font-weight:400;letter-spacing:0px;">Logs</div>
<svg class="i" style="left:75px;top:297.7px;" width="11" height="11" viewBox="0 0 11 11"><rect x="0.6" y="0.6" width="9.8" height="9.8" rx="1.2" fill="none" stroke="#a0a0a0" stroke-width="1.1"/><path d="M4.2 3.4 L7.2 5.5 L4.2 7.6Z" fill="#a0a0a0"/></svg>
<div class="t n" style="left:97.00px;top:298.14px;font-size:10px;color:#333;font-weight:400;letter-spacing:0px;">Result files</div>
<svg class="i" style="left:55.5px;top:329.95px;" width="7" height="4" viewBox="0 0 7 4"><path d="M0.5 0.5 L6.5 0.5 L3.5 3.5Z" fill="#9a9a9a"/></svg>
<svg class="i" style="left:75px;top:326.15px;" width="11" height="11" viewBox="0 0 11 11"><rect x="0.7" y="0.7" width="9.6" height="9.6" rx="1" fill="none" stroke="#555" stroke-width="1.3"/><path d="M2.6 8 L4.3 6.2 L5.4 7.3 L6.6 5.8 L8.4 8Z" fill="#555"/></svg>
<div class="t n" style="left:97.00px;top:326.59px;font-size:10px;color:#333;font-weight:400;letter-spacing:0px;">Visualizations</div>
<div class="t n" style="left:161.97px;top:326.59px;font-size:10px;color:#b0b0b0;font-weight:400;letter-spacing:0px;">·</div>
<div class="t n" style="left:168.47px;top:326.59px;font-size:10px;color:#b0b0b0;font-weight:400;letter-spacing:0px;">1</div>
<svg class="i" style="left:320px;top:325.25px;" width="12" height="12" viewBox="0 0 12 12"><path d="M0.5 1.2 C0.5 0.8 0.8 0.5 1.2 0.5 H9.6 C10 0.5 10.3 0.8 10.3 1.2 V6.8 H7.3 V10.3 H1.2 C0.8 10.3 0.5 10 0.5 9.6Z" fill="#777"/><path d="M1.8 8.5 L3.8 6.5 L5 7.7 L6.3 6.2" fill="none" stroke="#fff" stroke-width="0.9"/><path d="M9.5 7.3V11.7M7.3 9.5H11.7" stroke="#777" stroke-width="1.2"/></svg>
<svg class="i" style="left:62.5px;top:358.4px;" width="7" height="4" viewBox="0 0 7 4"><path d="M0.5 0.5 L6.5 0.5 L3.5 3.5Z" fill="#9a9a9a"/></svg>
<svg class="i" style="left:82px;top:354.59999999999997px;" width="11" height="11" viewBox="0 0 11 11"><rect x="0.7" y="0.7" width="9.6" height="9.6" rx="1" fill="none" stroke="#a452db" stroke-width="1.3"/><path d="M2.6 8 L4.3 6.2 L5.4 7.3 L6.6 5.8 L8.4 8Z" fill="#a452db"/></svg>
<div class="t n" style="left:104.00px;top:355.04px;font-size:10px;color:#a452db;font-weight:400;letter-spacing:0px;">Visualization 1</div>
<svg class="i" style="left:291.5px;top:353.7px;" width="12" height="12" viewBox="0 0 12 12"><path d="M9.64 8.10 A4.2 4.2 0 0 0 7.44 2.05" fill="none" stroke="#a452db" stroke-width="1.5"/><path d="M3.42 1.89 L7.13 -0.27 L7.27 3.78Z" fill="#a452db"/><path d="M2.36 3.90 A4.2 4.2 0 0 0 4.56 9.95" fill="none" stroke="#a452db" stroke-width="1.5"/><path d="M8.58 10.11 L4.87 12.27 L4.73 8.22Z" fill="#a452db"/></svg>
<svg class="i" style="left:319px;top:353.7px;" width="13" height="12" viewBox="0 0 13 12"><path d="M0.5 1.5H11.5M2.3 4.5H9.7M4.2 7.5H7.8" stroke="#9a9a9a" stroke-width="1.1"/><path d="M10 6.5V11.5M7.5 9H12.5" stroke="#9a9a9a" stroke-width="1.2"/></svg>
<svg class="i" style="left:88.5px;top:383.34999999999997px;" width="12" height="10" viewBox="0 0 12 10"><path d="M0.5 1.5H11.5M2.5 5H9.5M4.5 8.5H7.5" stroke="#666" stroke-width="1.2"/></svg>
<div class="t n" style="left:111.00px;top:383.49px;font-size:10px;color:#333;font-weight:400;letter-spacing:0px;">B</div>
<svg class="i" style="left:290.3px;top:381.65px;" width="14" height="12" viewBox="0 0 14 12"><path d="M0.6 6 C2.6 1.8 11 1.8 13 6 C11 10.2 2.6 10.2 0.6 6Z" fill="#c4c4c4"/><circle cx="6.8" cy="6" r="2.6" fill="#fff"/><circle cx="6.8" cy="6" r="1.5" fill="#c4c4c4"/><path d="M1.6 0.6 L11.2 11.2" stroke="#fff" stroke-width="1.6"/><path d="M1.6 0.6 L11.2 11.2" stroke="#c4c4c4" stroke-width="0.9"/></svg>
<svg class="i" style="left:320.8px;top:382.65px;" width="10" height="10" viewBox="0 0 10 10"><path d="M5 0.5V9.5M0.5 5H9.5" stroke="#c4c4c4" stroke-width="1.1"/></svg>
<svg class="i" style="left:88px;top:410.29999999999995px;" width="13" height="13" viewBox="0 0 13 13"><path d="M6.3 3 V6.3 M2.6 6.3 H10.2 M6.3 6.3 L5.6 8.6" fill="none" stroke="#666" stroke-width="1.1"/><path d="M6.3 0 L4.4 2.6 H8.2Z M0 6.3 L2.7 4.4 V8.2Z M12.6 6.3 L9.9 4.4 V8.2Z" fill="#666"/><circle cx="5.6" cy="10.4" r="1.5" fill="none" stroke="#666" stroke-width="1.1"/></svg>
<div class="t n" style="left:111.00px;top:411.94px;font-size:10px;color:#333;font-weight:400;letter-spacing:0px;">Glyph</div>
<svg class="i" style="left:318.8px;top:411.09999999999997px;" width="14" height="10" viewBox="0 0 14 10"><path d="M0.6 5 C2.8 0.6 10.8 0.6 13 5 C10.8 9.4 2.8 9.4 0.6 5Z" fill="#c4c4c4"/><circle cx="6.8" cy="5" r="2.7" fill="#fff"/><circle cx="6.8" cy="5" r="1.6" fill="#c4c4c4"/></svg>
<svg class="i" style="left:88.5px;top:440.24999999999994px;" width="12" height="10" viewBox="0 0 12 10"><path d="M0.5 1.5H11.5M2.5 5H9.5M4.5 8.5H7.5" stroke="#666" stroke-width="1.2"/></svg>
<div class="t n" style="left:111.00px;top:440.38px;font-size:10px;color:#333;font-weight:400;letter-spacing:0px;">B</div>
<svg class="i" style="left:290.3px;top:438.54999999999995px;" width="14" height="12" viewBox="0 0 14 12"><path d="M0.6 6 C2.6 1.8 11 1.8 13 6 C11 10.2 2.6 10.2 0.6 6Z" fill="#c4c4c4"/><circle cx="6.8" cy="6" r="2.6" fill="#fff"/><circle cx="6.8" cy="6" r="1.5" fill="#c4c4c4"/><path d="M1.6 0.6 L11.2 11.2" stroke="#fff" stroke-width="1.6"/><path d="M1.6 0.6 L11.2 11.2" stroke="#c4c4c4" stroke-width="0.9"/></svg>
<svg class="i" style="left:320.8px;top:439.54999999999995px;" width="10" height="10" viewBox="0 0 10 10"><path d="M5 0.5V9.5M0.5 5H9.5" stroke="#c4c4c4" stroke-width="1.1"/></svg>
<svg class="i" style="left:88.5px;top:467.2px;" width="12" height="13" viewBox="0 0 12 13"><path d="M3.5 1 H1.5 C1 1 0.8 1.3 0.8 1.8 V11.2 C0.8 11.7 1 12 1.5 12 H3.5 M8.5 1 H10.5 C11 1 11.2 1.3 11.2 1.8 V11.2 C11.2 11.7 11 12 10.5 12 H8.5" fill="none" stroke="#a452db" stroke-width="1.3"/><path d="M6 0.5V2.5M6 4V6M6 7.5V9.5M6 11V12.5" stroke="#a452db" stroke-width="1.3"/></svg>
<div class="t n" style="left:111.00px;top:468.84px;font-size:10px;color:#a452db;font-weight:400;letter-spacing:0px;">Clip</div>
<svg class="i" style="left:318.8px;top:468.0px;" width="14" height="10" viewBox="0 0 14 10"><path d="M0.6 5 C2.8 0.6 10.8 0.6 13 5 C10.8 9.4 2.8 9.4 0.6 5Z" fill="#c4c4c4"/><circle cx="6.8" cy="5" r="2.7" fill="#fff"/><circle cx="6.8" cy="5" r="1.6" fill="#c4c4c4"/></svg>
<div class="b" style="left:76px;top:496px;width:268px;height:1px;background:#e6e6e6"></div>
<svg class="i" style="left:40.5px;top:520.1999999999999px;" width="7" height="4" viewBox="0 0 7 4"><path d="M0.5 0.5 L6.5 0.5 L3.5 3.5Z" fill="#9a9a9a"/></svg>
<svg class="i" style="left:61px;top:516.4px;" width="11" height="11" viewBox="0 0 11 11"><rect x="0.6" y="0.6" width="9.8" height="9.8" rx="1.2" fill="none" stroke="#9a9a9a" stroke-width="1.1"/><path d="M4.2 3.4 L7.2 5.5 L4.2 7.6Z" fill="#9a9a9a"/></svg>
<div class="t n" style="left:83.00px;top:516.83px;font-size:10px;color:#333;font-weight:400;letter-spacing:0px;">Simulation 1 sweep over alpha</div>
<div class="b" style="left:277.5px;top:511.40px;width:55.3px;height:16.6px;border:1px solid #c9ecf4;border-radius:9.3px"></div>
<svg class="i" style="left:288.8px;top:516.8px;" width="7" height="8" viewBox="0 0 7 8"><path d="M0.2 0.2 L6.2 3.9 L0.2 7.6Z" fill="#5c5c5c"/></svg>
<div class="t n" style="left:297.80px;top:516.45px;font-size:8.8px;color:#555;font-weight:400;letter-spacing:0px;">Not run</div>
<svg class="i" style="left:68.3px;top:544.15px;" width="12" height="12" viewBox="0 0 12 12"><path d="M5.5 0.8 L10.2 3.2 V8.6 L5.5 11 L0.8 8.6 V3.2Z M0.8 3.2 L5.5 5.7 L10.2 3.2 M5.5 5.7 V11" fill="none" stroke="#9a9a9a" stroke-width="1" stroke-linejoin="round"/></svg>
<div class="t n" style="left:90.00px;top:545.28px;font-size:10px;color:#333;font-weight:400;letter-spacing:0px;">Mesh</div>
<div class="b" style="left:277.5px;top:539.85px;width:55.3px;height:16.6px;border:1px solid #c9ecf4;border-radius:9.3px"></div>
<svg class="i" style="left:288.8px;top:545.25px;" width="7" height="8" viewBox="0 0 7 8"><path d="M0.2 0.2 L6.2 3.9 L0.2 7.6Z" fill="#5c5c5c"/></svg>
<div class="t n" style="left:297.80px;top:544.90px;font-size:8.8px;color:#555;font-weight:400;letter-spacing:0px;">Not run</div>
<svg class="i" style="left:68px;top:572.5999999999999px;" width="12" height="12" viewBox="0 0 12 12"><path d="M3 1 H10.5 C11.3 1 11.6 1.5 11.6 2.3 H10 V10 H3Z" fill="#555"/><rect x="4.6" y="3.2" width="3.8" height="1.1" fill="#fff"/><rect x="4.6" y="5.4" width="3.8" height="1.1" fill="#fff"/><path d="M0.5 10.2 H9 V11.6 H0.5Z" fill="#555"/></svg>
<div class="t n" style="left:90.00px;top:573.73px;font-size:10px;color:#333;font-weight:400;letter-spacing:0px;">Script</div>
<svg class="i" style="left:322px;top:573.4px;" width="6" height="9" viewBox="0 0 6 9"><path d="M1 1 L4.5 4.5 L1 8" fill="none" stroke="#8a8a8a" stroke-width="1.1"/></svg>
<svg class="i" style="left:49px;top:603.55px;" width="4" height="7" viewBox="0 0 4 7"><path d="M0.5 0.5 L3.5 3.5 L0.5 6.5Z" fill="#a0a0a0"/></svg>
<svg class="i" style="left:68px;top:601.05px;" width="13" height="12" viewBox="0 0 13 12"><path d="M5.6 1.1 C4.2 0.6 3.5 1.6 3.3 2.9 L2.3 9 C2.1 10.4 1.3 11.1 0.2 10.6 M1.4 4.6 H5" fill="none" stroke="#555" stroke-width="1.1"/><path d="M6.8 6.3 L11.4 11 M11.4 6.3 L6.8 11" stroke="#555" stroke-width="1.2"/></svg>
<div class="t n" style="left:90.00px;top:602.18px;font-size:10px;color:#333;font-weight:400;letter-spacing:0px;">Sweeps and overrides</div>
<div class="t n" style="left:192.95px;top:602.18px;font-size:10px;color:#b0b0b0;font-weight:400;letter-spacing:0px;">·</div>
<div class="t n" style="left:199.45px;top:602.18px;font-size:10px;color:#b0b0b0;font-weight:400;letter-spacing:0px;">1</div>
<svg class="i" style="left:320px;top:601.35px;" width="10" height="10" viewBox="0 0 10 10"><path d="M5 0.5V9.5M0.5 5H9.5" stroke="#666" stroke-width="1.7"/></svg>
<svg class="i" style="left:69px;top:629.7999999999998px;" width="11" height="12" viewBox="0 0 11 12"><ellipse cx="5.5" cy="2.3" rx="4.9" ry="1.9" fill="#666"/><path d="M0.6 3.6 C1.5 5.4 9.5 5.4 10.4 3.6 V6.2 C9.5 8 1.5 8 0.6 6.2Z" fill="#666"/><path d="M0.6 7.4 C1.5 9.2 9.5 9.2 10.4 7.4 V9.6 C9.5 11.6 1.5 11.6 0.6 9.6Z" fill="#666"/></svg>
<div class="t n" style="left:90.00px;top:630.63px;font-size:10px;color:#333;font-weight:400;letter-spacing:0px;">Outputs</div>
<div class="t n" style="left:129.03px;top:630.63px;font-size:10px;color:#b0b0b0;font-weight:400;letter-spacing:0px;">·</div>
<div class="t n" style="left:135.53px;top:630.63px;font-size:10px;color:#b0b0b0;font-weight:400;letter-spacing:0px;">0</div>
<svg class="i" style="left:320px;top:629.0999999999999px;" width="12" height="12" viewBox="0 0 12 12"><ellipse cx="4.8" cy="2.2" rx="4.3" ry="1.7" fill="#8a8a8a"/><path d="M0.5 3.3 C1.3 4.9 8.3 4.9 9.1 3.3 V5.5 C8.3 7.1 1.3 7.1 0.5 5.5Z" fill="#8a8a8a"/><path d="M0.5 6.6 C1.3 8.2 6 8.3 6.8 7.8 V9.8 C5 10.4 1.3 10.2 0.5 8.8Z" fill="#8a8a8a"/><path d="M9.2 7.2 V11.8 M6.9 9.5 H11.5" stroke="#8a8a8a" stroke-width="1.2"/></svg>
<div class="t" style="left:356.60px;top:45.17px;font-size:7px;color:#4a4a4a;font-weight:700;letter-spacing:1.2px;">CLIP</div>
<div class="b" style="left:381px;top:47.5px;width:2.2px;height:2.2px;background:#333;border-radius:50%"></div>
<div class="t n" style="left:388.00px;top:45.17px;font-size:7px;color:#8e8e8e;font-weight:400;letter-spacing:1.25px;">SETTINGS</div>
<svg class="i" style="left:633px;top:43px;" width="8" height="10" viewBox="0 0 8 10"><path d="M0.5 1.6H7.5M2.7 1.6 V0.6 H5.3 V1.6" fill="none" stroke="#8a8a8a" stroke-width="1"/><path d="M1.2 2.6 H6.8 L6.4 9.4 H1.6Z" fill="#8a8a8a"/></svg>
<div class="b" style="left:357px;top:75.2px;width:292px;height:31.5px;background:#f4f4f4;border-bottom:1px solid #a9a9a9;border-radius:2px 2px 0 0"></div>
<div class="t n" style="left:365.90px;top:80.54px;font-size:7.4px;color:#8a8a8a;font-weight:400;letter-spacing:0px;">Name</div>
<div class="t n" style="left:365.90px;top:93.33px;font-size:10px;color:#333;font-weight:400;letter-spacing:0px;">Clip</div>
<div class="b" style="left:357px;top:117.3px;width:292px;height:1px;background:#ececec"></div>
<div class="b" style="left:357px;top:127.9px;width:292px;height:44.5px;background:#f7f7f7;border-radius:2px"></div>
<div class="t n" style="left:361.60px;top:134.64px;font-size:7.4px;color:#9a9a9a;font-weight:400;letter-spacing:0px;">Layer</div>
<div class="t n" style="left:361.60px;top:145.38px;font-size:9px;color:#333;font-weight:400;letter-spacing:0px;">B</div>
<div class="t n" style="left:370.50px;top:145.38px;font-size:9px;color:#bbb;font-weight:400;letter-spacing:0px;">-</div>
<div class="t n" style="left:376.30px;top:145.38px;font-size:9px;color:#333;font-weight:400;letter-spacing:0px;">Cool to Warm</div>
<div class="t n" style="left:361.60px;top:157.45px;font-size:8.8px;color:#333;font-weight:400;letter-spacing:0px;">0.002725</div>
<div class="t n" style="left:403.20px;top:157.45px;font-size:8.8px;color:#bbb;font-weight:400;letter-spacing:0px;">-</div>
<div class="t n" style="left:408.80px;top:157.45px;font-size:8.8px;color:#333;font-weight:400;letter-spacing:0px;">1.7107</div>
<svg class="i" style="left:623.5px;top:143.5px;" width="12" height="12" viewBox="0 0 12 12"><path d="M1 11 L1.5 8.2 L8.3 1.4 L10.6 3.7 L3.8 10.5Z" fill="#6a6a6a"/><path d="M2.4 8.6 L8.4 2.6" stroke="#f7f7f7" stroke-width="0.7"/><path d="M7.2 2.5 L9.5 4.8" stroke="#f7f7f7" stroke-width="0.6"/></svg>
<div class="b" style="left:357px;top:181.8px;width:292px;height:1px;background:#ececec"></div>
<div class="t n" style="left:356.90px;top:193.94px;font-size:8.7px;color:#7a7a7a;font-weight:400;letter-spacing:0px;">Origin</div>
<div class="b" style="left:357px;top:213.0px;width:292px;height:32px;background:#f4f4f4;border-bottom:1px solid #a9a9a9"></div>
<div class="t n" style="left:365.90px;top:219.04px;font-size:7.4px;color:#a0a0a0;font-weight:400;letter-spacing:0px;">x</div>
<div class="t n" style="left:365.90px;top:231.40px;font-size:10.4px;color:#333;font-weight:400;letter-spacing:0px;">0</div>
<div class="b" style="left:357px;top:246.3px;width:292px;height:32px;background:#f4f4f4;border-bottom:1px solid #a9a9a9"></div>
<div class="t n" style="left:365.90px;top:252.34px;font-size:7.4px;color:#a0a0a0;font-weight:400;letter-spacing:0px;">y</div>
<div class="t n" style="left:365.90px;top:264.70px;font-size:10.4px;color:#333;font-weight:400;letter-spacing:0px;">0</div>
<div class="b" style="left:357px;top:279.6px;width:292px;height:32px;background:#f4f4f4;border-bottom:1px solid #a9a9a9"></div>
<div class="t n" style="left:365.90px;top:285.64px;font-size:7.4px;color:#a0a0a0;font-weight:400;letter-spacing:0px;">z</div>
<div class="t n" style="left:365.90px;top:298.00px;font-size:10.4px;color:#333;font-weight:400;letter-spacing:0px;">0.0019244862552093554</div>
<div class="b" style="left:357.3px;top:322.3px;width:102.5px;height:21px;background:#fff;border-radius:3px;box-shadow:0 0.5px 1px rgba(0,0,0,0.22),0 1px 3px rgba(0,0,0,0.10)"></div>
<div class="t" style="left:366.00px;top:329.76px;font-size:8.2px;color:#333;font-weight:700;letter-spacing:0px;">Reset to data bounds</div>
<div class="b" style="left:357px;top:360px;width:292px;height:1px;background:#ececec"></div>
<div class="t n" style="left:356.90px;top:372.14px;font-size:8.7px;color:#7a7a7a;font-weight:400;letter-spacing:0px;">Normal</div>
<div class="b" style="left:357px;top:391.3px;width:292px;height:32px;background:#f4f4f4;border-bottom:1px solid #a9a9a9"></div>
<div class="t n" style="left:365.90px;top:397.34px;font-size:7.4px;color:#a0a0a0;font-weight:400;letter-spacing:0px;">x</div>
<div class="t n" style="left:365.90px;top:409.70px;font-size:10.4px;color:#333;font-weight:400;letter-spacing:0px;">0</div>
<div class="b" style="left:357px;top:424.6px;width:292px;height:32px;background:#f4f4f4;border-bottom:1px solid #a9a9a9"></div>
<div class="t n" style="left:365.90px;top:430.64px;font-size:7.4px;color:#a0a0a0;font-weight:400;letter-spacing:0px;">y</div>
<div class="t n" style="left:365.90px;top:443.00px;font-size:10.4px;color:#333;font-weight:400;letter-spacing:0px;">0</div>
<div class="b" style="left:357px;top:457.9px;width:292px;height:32px;background:#f4f4f4;border-bottom:1px solid #a9a9a9"></div>
<div class="t n" style="left:365.90px;top:463.94px;font-size:7.4px;color:#a0a0a0;font-weight:400;letter-spacing:0px;">z</div>
<div class="t n" style="left:365.90px;top:476.30px;font-size:10.4px;color:#333;font-weight:400;letter-spacing:0px;">1</div>
<div class="b" style="left:357.1px;top:501.3px;width:36.8px;height:20.6px;background:#fff;border-radius:3px;box-shadow:0 0.5px 1px rgba(0,0,0,0.22),0 1px 3px rgba(0,0,0,0.10)"></div>
<div class="b" style="left:395px;top:501.3px;width:36.8px;height:20.6px;background:#fff;border-radius:3px;box-shadow:0 0.5px 1px rgba(0,0,0,0.22),0 1px 3px rgba(0,0,0,0.10)"></div>
<div class="b" style="left:433px;top:501.3px;width:36.8px;height:20.6px;background:#fff;border-radius:3px;box-shadow:0 0.5px 1px rgba(0,0,0,0.22),0 1px 3px rgba(0,0,0,0.10)"></div>
<div class="b" style="left:470.9px;top:501.3px;width:48.9px;height:20.6px;background:#fff;border-radius:3px;box-shadow:0 0.5px 1px rgba(0,0,0,0.22),0 1px 3px rgba(0,0,0,0.10)"></div>
<div class="t" style="left:372.78px;top:507.70px;font-size:8.5px;color:#333;font-weight:700;letter-spacing:0px;">X</div>
<div class="t" style="left:410.68px;top:507.70px;font-size:8.5px;color:#333;font-weight:700;letter-spacing:0px;">Y</div>
<div class="t" style="left:448.90px;top:507.70px;font-size:8.5px;color:#333;font-weight:700;letter-spacing:0px;">Z</div>
<div class="t" style="left:479.75px;top:507.70px;font-size:8.5px;color:#333;font-weight:700;letter-spacing:0px;">Camera</div>
<div class="b" style="left:363.4px;top:540.3px;width:10.6px;height:10.6px;border:1.3px solid #8d8d8d;border-radius:1.5px;box-sizing:border-box"></div>
<div class="t n" style="left:380.50px;top:540.74px;font-size:10px;color:#9a9a9a;font-weight:400;letter-spacing:0px;">Show plane</div>
<div class="b" style="left:363.4px;top:582.7px;width:10.6px;height:10.6px;background:#262626;border-radius:1.5px"></div>
<svg class="i" style="left:364.4px;top:584px;" width="9" height="8" viewBox="0 0 9 8"><path d="M1.3 4.3 L3.6 6.5 L7.8 1.6" fill="none" stroke="#fff" stroke-width="1.3"/></svg>
<div class="t n" style="left:380.50px;top:583.13px;font-size:10px;color:#9a9a9a;font-weight:400;letter-spacing:0px;">Invert</div>
<div class="b" style="left:346.5px;top:623.3px;width:310.5px;height:1.2px;background:#f1f1f1"></div>
<div class="b" style="left:356.9px;top:638.3px;width:45.9px;height:21.5px;border:1px solid #c68ae9;border-radius:2.5px;box-sizing:border-box"></div>
<svg class="i" style="left:360.5px;top:644px;" width="10" height="9" viewBox="0 0 10 9"><path d="M1 4.6 L3.6 7.2 L8.6 1.6" fill="none" stroke="#a452db" stroke-width="1.1"/></svg>
<div class="t" style="left:375.00px;top:645.74px;font-size:8.1px;color:#a04fd6;font-weight:700;letter-spacing:0px;">Apply</div>
<div class="t n" style="left:413.40px;top:645.32px;font-size:8.6px;color:#d98cf2;font-weight:400;letter-spacing:0px;">Cancel</div>
<svg class="i" style="left:670px;top:44.5px;" width="12" height="12" viewBox="0 0 12 12"><path d="M9.81 8.20 A4.4 4.4 0 0 0 7.50 1.87" fill="none" stroke="#555" stroke-width="1.5"/><path d="M3.33 1.69 L7.17 -0.54 L7.32 3.65Z" fill="#555"/><path d="M2.19 3.80 A4.4 4.4 0 0 0 4.50 10.13" fill="none" stroke="#555" stroke-width="1.5"/><path d="M8.67 10.31 L4.83 12.54 L4.68 8.35Z" fill="#555"/></svg>
<div class="b" style="left:670.8px;top:82px;width:37.8px;height:19.6px;background:#fff;border-radius:3px"></div>
<div class="b" style="left:670.8px;top:82px;width:19.2px;height:19.6px;background:#a8a8a8;border-radius:3px 0 0 3px"></div>
<div class="b" style="left:675.8px;top:87.7px;width:8.8px;height:8.4px;border:1px solid #f0f0f0;box-sizing:border-box"></div>
<svg class="i" style="left:694.5px;top:87.2px;" width="10" height="10" viewBox="0 0 10 10"><rect x="0.6" y="0.6" width="8" height="8.5" fill="none" stroke="#666" stroke-width="1" stroke-dasharray="1.3 1"/></svg>
<div class="b" style="left:714.7px;top:82px;width:37.3px;height:19.6px;background:#e2e6e9;border-radius:3px"></div>
<svg class="i" style="left:718.5px;top:87px;" width="12" height="10" viewBox="0 0 12 10"><path d="M0.8 4.8 C2.6 1.6 8.6 1.6 10.4 4.8 " fill="none" stroke="#c2c6c9" stroke-width="0.9"/><path d="M0.8 4.8 C1.6 6.6 3.5 7.6 5.6 7.6" fill="none" stroke="#c2c6c9" stroke-width="0.9"/><circle cx="5.6" cy="4.6" r="1.4" fill="#c2c6c9"/><path d="M6.8 8.2 H11.2" stroke="#c2c6c9" stroke-width="0.9"/></svg>
<svg class="i" style="left:737.3px;top:87px;" width="12" height="10" viewBox="0 0 12 10"><path d="M0.8 4.8 C2.6 1.6 8.6 1.6 10.4 4.8 " fill="none" stroke="#c2c6c9" stroke-width="0.9"/><path d="M0.8 4.8 C1.6 6.6 3.5 7.6 5.6 7.6" fill="none" stroke="#c2c6c9" stroke-width="0.9"/><circle cx="5.6" cy="4.6" r="1.4" fill="#c2c6c9"/><path d="M6.8 8.2 H11.2" stroke="#c2c6c9" stroke-width="0.9"/></svg>
<div class="b" style="left:758.3px;top:82px;width:18.8px;height:19.6px;background:#e8ecee;border-radius:3px"></div>
<svg class="i" style="left:762.2px;top:86.4px;" width="12" height="11" viewBox="0 0 12 11"><path d="M0.8 5 C2.8 1.4 9.2 1.4 11.2 5 C9.2 8.6 2.8 8.6 0.8 5Z" fill="none" stroke="#333" stroke-width="1.2"/><circle cx="6" cy="5" r="1.6" fill="#333"/><circle cx="8.6" cy="8.4" r="1.6" fill="#e8ecee" stroke="#333" stroke-width="0.8"/></svg>
<div class="b" style="left:783px;top:82px;width:19px;height:19.6px;background:#fff;border-radius:3px"></div>
<svg class="i" style="left:786.5px;top:85.5px;" width="12" height="12" viewBox="0 0 12 12"><path d="M5.5 6.2 V1.2 M5.5 6.2 L1.6 9.6 M5.5 6.2 L9.6 9.4" fill="none" stroke="#222" stroke-width="1.1"/><path d="M5.5 0 L4 2 H7Z" fill="#222"/><circle cx="1.6" cy="9.6" r="1" fill="#222"/><circle cx="9.6" cy="9.4" r="1" fill="#222"/><path d="M8.8 1 V4.2" stroke="#222" stroke-width="0.9"/></svg>
<div class="b" style="left:808px;top:82px;width:19px;height:19.6px;background:#fff;border-radius:3px"></div>
<svg class="i" style="left:811.5px;top:85.5px;" width="12" height="12" viewBox="0 0 12 12"><path d="M0.6 3.2 V0.6 H3.2 M8.8 0.6 H11.4 V3.2 M11.4 8.8 V11.4 H8.8 M3.2 11.4 H0.6 V8.8" fill="none" stroke="#222" stroke-width="1.1"/><path d="M6 2.6 L9.2 4.3 V7.7 L6 9.4 L2.8 7.7 V4.3Z M2.8 4.3 L6 6 L9.2 4.3 M6 6 V9.4" fill="none" stroke="#222" stroke-width="1"/></svg>
<div class="b" style="left:1567.6px;top:81.5px;width:20.8px;height:20.8px;border-radius:50%;background:#fff;box-shadow:0 1px 2.5px rgba(0,0,0,0.25)"></div>
<svg class="i" style="left:1572.8px;top:86.8px;" width="10.5" height="10.5" viewBox="0 0 22 18"><path d="M16.56 8.94L7.62 0 6.21 1.41l2.38 2.38-5.15 5.15c-.59.59-.59 1.54 0 2.12l5.5 5.5c.29.29.68.44 1.06.44s.77-.15 1.06-.44l5.5-5.5c.59-.58.59-1.53 0-2.12zM5.21 10L10 5.21 14.79 10H5.21zM19 11.5s-2 2.17-2 3.5c0 1.1.9 2 2 2s2-.9 2-2c0-1.33-2-3.5-2-3.5z" fill="#444"/></svg>
<div class="b" style="left:1579.2px;top:294.5px;width:6.8px;height:351.8px;background:linear-gradient(to top,#3b4cc0 0%,#5977e3 12%,#7b9ff9 25%,#9ebeff 37%,#c0d4f5 50%,#dddcdc 56%,#f2cbb7 63%,#f7ac8e 75%,#ee8468 87%,#d65244 94%,#b40426 100%)"></div>
<div class="t" style="left:1566.00px;top:281.07px;font-size:7px;color:#222;font-weight:700;letter-spacing:0px;">B</div>
<div class="t n" style="left:1565.30px;top:312.42px;font-size:8.6px;color:#333;font-weight:400;letter-spacing:0px;">1.6</div>
<div class="t n" style="left:1565.30px;top:353.82px;font-size:8.6px;color:#333;font-weight:400;letter-spacing:0px;">1.4</div>
<div class="t n" style="left:1565.30px;top:395.12px;font-size:8.6px;color:#333;font-weight:400;letter-spacing:0px;">1.2</div>
<div class="t n" style="left:1572.50px;top:436.42px;font-size:8.6px;color:#333;font-weight:400;letter-spacing:0px;">1</div>
<div class="t n" style="left:1565.30px;top:477.72px;font-size:8.6px;color:#333;font-weight:400;letter-spacing:0px;">0.8</div>
<div class="t n" style="left:1565.30px;top:519.02px;font-size:8.6px;color:#333;font-weight:400;letter-spacing:0px;">0.6</div>
<div class="t n" style="left:1565.30px;top:560.32px;font-size:8.6px;color:#333;font-weight:400;letter-spacing:0px;">0.4</div>
<div class="t n" style="left:1565.30px;top:601.62px;font-size:8.6px;color:#333;font-weight:400;letter-spacing:0px;">0.2</div>
<div class="b" style="left:1579.2px;top:653.8px;width:6.8px;height:11.8px;background:#fdfd00"></div>
<div class="t n" style="left:1559.30px;top:656.13px;font-size:8px;color:#333;font-weight:400;letter-spacing:0px;">NaN</div>
<svg class="i" style="left:1579.5px;top:678.5px;" width="7" height="8" viewBox="0 0 7 8"><path d="M1.6 0.5 V2.6 M5.4 0.5 V2.6 M0.8 2.6 H6.2 V4.2 C6.2 5.8 5 6.6 3.5 6.6 C2 6.6 0.8 5.8 0.8 4.2Z M3.5 6.6 V8" fill="none" stroke="#555" stroke-width="0.8"/></svg>
<svg class="i" style="left:660px;top:600px;" width="90" height="96" viewBox="0 0 90 96">
<path d="M16.6 16.6 L69 9 L79.4 46.2 L78.7 81.4 L27.6 87 L15.2 58Z" fill="#cad5de"/>
<path d="M16.6 16.6 L69 9 L79.4 46.2 L15.2 58Z" fill="#d3dde4"/>
<path d="M15.2 58 L79.4 46.2 L78.7 81.4 L27.6 87Z" fill="#c6d1da"/>
<path d="M16.6 16.6 L15.2 58 L27.6 87" fill="none" stroke="#bfcad3" stroke-width="0.8"/>
<path d="M47.7 49 L46 38" stroke="#1f6f1f" stroke-width="2.2"/>
<path d="M47.8 50 L50.8 71.8" stroke="#d9cf1e" stroke-width="2.6"/>
<path d="M22 53 L66 47.3" stroke="#e52424" stroke-width="2.3"/>
<path d="M63.5 42.8 L73.2 46.2 L64.2 52.4Z" fill="#df1f1f"/>
<path d="M44.9 31.7 L51.8 38.6 C50.5 43 44 43.5 41.2 39.5Z" fill="#2b8a2b"/>
</svg>
<div class="t n" style="left:664.60px;top:685.10px;font-size:8.5px;color:#444;font-weight:400;letter-spacing:0px;">x</div>
<div class="b" style="left:671px;top:686.3px;width:5.8px;height:5.8px;border-radius:50%;background:#e82323"></div>
<div class="t n" style="left:680.00px;top:685.10px;font-size:8.5px;color:#444;font-weight:400;letter-spacing:0px;">y</div>
<div class="b" style="left:686.2px;top:686.3px;width:5.8px;height:5.8px;border-radius:50%;background:#ebe23a"></div>
<div class="t n" style="left:695.20px;top:685.10px;font-size:8.5px;color:#444;font-weight:400;letter-spacing:0px;">z</div>
<div class="b" style="left:700.8px;top:686.3px;width:5.8px;height:5.8px;border-radius:50%;background:#16881a"></div>
<svg class="i" style="left:0px;top:688px;" width="8" height="8" viewBox="0 0 8 8"><path d="M0 0 C0 4.4 3.6 8 8 8 H0Z" fill="#111"/></svg>
</body></html>
